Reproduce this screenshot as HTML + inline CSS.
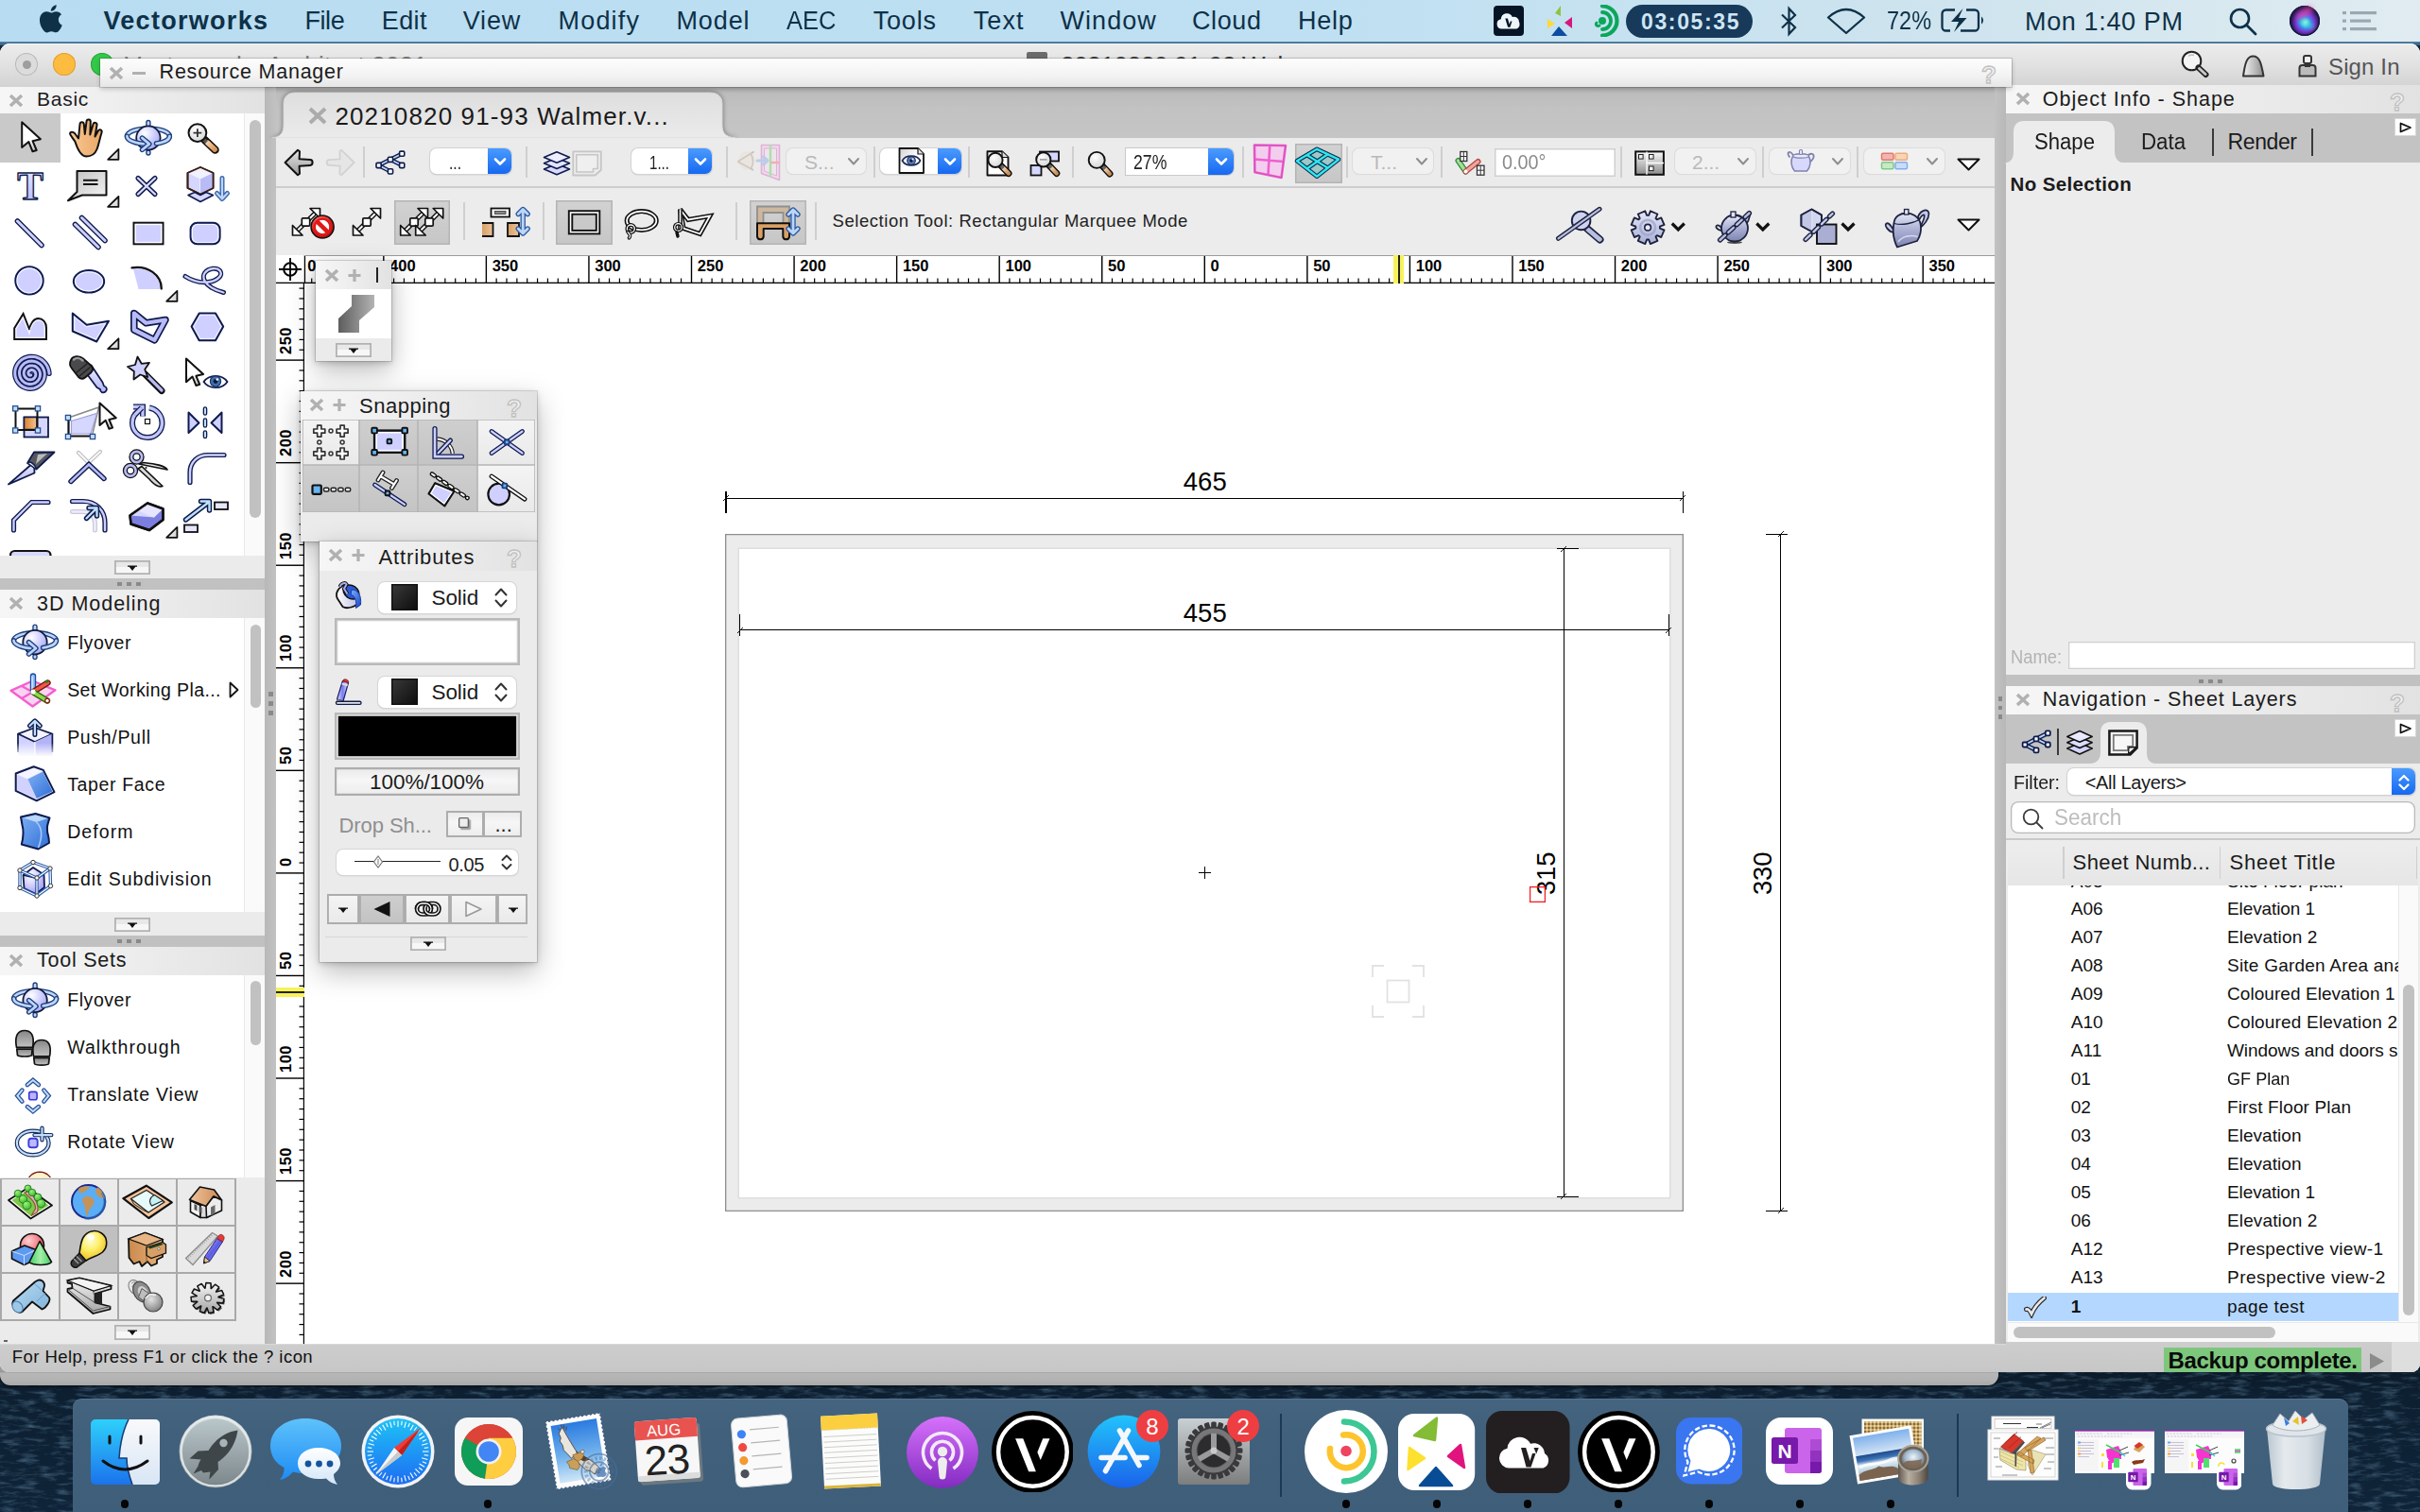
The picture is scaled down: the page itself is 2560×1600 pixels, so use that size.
<!DOCTYPE html><html><head><meta charset="utf-8"><title>Vectorworks</title><style>html,body{margin:0;padding:0;overflow:hidden}
body{width:2560px;height:1600px;overflow:hidden;position:relative;background:#13273a;font-family:"Liberation Sans",sans-serif;}
body div,body svg{position:absolute;box-sizing:border-box}
.t{white-space:nowrap}
</style></head><body>
<div style="left:0px;top:44px;width:2560px;height:4px;background:#3c6a8f;"></div>
<svg style="left:0;top:1440px" width="2560" height="160" viewBox="0 0 2560 160">
<defs><filter id="sea" x="0" y="0" width="100%" height="100%"><feTurbulence type="fractalNoise" baseFrequency="0.05 0.22" numOctaves="4" seed="4"/><feColorMatrix values="0 0 0 0 0.13  0 0 0 0 0.25  0 0 0 0 0.37  1.3 0 0 0 -0.62"/></filter>
<linearGradient id="seag" x1="0" x2="0" y1="0" y2="1"><stop offset="0" stop-color="#0a1826"/><stop offset="0.25" stop-color="#0d2032"/><stop offset="1" stop-color="#0f2438"/></linearGradient></defs>
<rect width="2560" height="160" fill="url(#seag)"/><rect width="2560" height="160" filter="url(#sea)"/></svg>
<div style="left:0px;top:0px;width:2560px;height:44px;background:linear-gradient(90deg,#b8dcf1 0%,#bfe0f2 55%,#cfe4ee 82%,#e0ecf1 100%);"></div>
<div style="left:0px;top:43.5px;width:2560px;height:1.5px;background:#5c89aa;"></div>
<svg style="left:41px;top:3px;" width="28" height="34" viewBox="0 0 28 34"><path fill="#0e3148" d="M20.9 18.1c0-3.3 2.7-4.9 2.8-5-1.5-2.2-3.9-2.5-4.8-2.6-2-.2-4 1.2-5 1.2-1 0-2.6-1.2-4.3-1.1-2.2 0-4.2 1.300-5.400 3.300-2.300 4-.600 9.900 1.600 13.100 1.100 1.600 2.400 3.400 4.100 3.300 1.700-.1 2.300-1.100 4.300-1.100 2 0 2.600 1.100 4.300 1 1.800 0 2.900-1.600 4-3.200 1.300-1.800 1.800-3.600 1.800-3.700-.100 0-3.400-1.300-3.400-5.200zM17.600 8.300c.900-1.100 1.500-2.600 1.300-4.100-1.300.1-2.900.900-3.800 2-.800.900-1.600 2.500-1.400 3.900 1.500.1 3-.700 3.900-1.800z" transform="translate(-2.5,-2.5) scale(1.12)"/></svg>
<div class="t" style="left:109.50px;top:9.44px;font-size:27px;line-height:27px;color:#0e3148;font-weight:700;letter-spacing:1.292px;">Vectorworks</div>
<div class="t" style="left:322.40px;top:9.44px;font-size:27px;line-height:27px;color:#0e3148;letter-spacing:-0.412px;">File</div>
<div class="t" style="left:403.80px;top:9.44px;font-size:27px;line-height:27px;color:#0e3148;letter-spacing:0.364px;">Edit</div>
<div class="t" style="left:489.70px;top:9.44px;font-size:27px;line-height:27px;color:#0e3148;letter-spacing:0.861px;">View</div>
<div class="t" style="left:590.50px;top:9.44px;font-size:27px;line-height:27px;color:#0e3148;letter-spacing:1.197px;">Modify</div>
<div class="t" style="left:715.50px;top:9.44px;font-size:27px;line-height:27px;color:#0e3148;letter-spacing:0.873px;">Model</div>
<div class="t" style="left:831.60px;top:9.44px;font-size:27px;line-height:27px;color:#0e3148;transform-origin:0 50%;transform:scaleX(0.9444);">AEC</div>
<div class="t" style="left:923.70px;top:9.44px;font-size:27px;line-height:27px;color:#0e3148;letter-spacing:0.814px;">Tools</div>
<div class="t" style="left:1029.70px;top:9.44px;font-size:27px;line-height:27px;color:#0e3148;letter-spacing:1.118px;">Text</div>
<div class="t" style="left:1121.60px;top:9.44px;font-size:27px;line-height:27px;color:#0e3148;letter-spacing:1.016px;">Window</div>
<div class="t" style="left:1261.00px;top:9.44px;font-size:27px;line-height:27px;color:#0e3148;letter-spacing:0.616px;">Cloud</div>
<div class="t" style="left:1373.00px;top:9.44px;font-size:27px;line-height:27px;color:#0e3148;letter-spacing:0.716px;">Help</div>
<svg style="left:1580px;top:6px;" width="32" height="32" viewBox="0 0 32 32"><rect width="32" height="32" rx="4" fill="#071425"/><path fill="#eef6fb" d="M8.500 24.500a5.200 5.200 0 0 1-.700-10.300 6.300 6.300 0 0 1 12-2.300 5.600 5.600 0 0 1 7.200 5.400 5.100 5.100 0 0 1-2.500 7.200z"/><path fill="#071425" d="M12.300 13.500h2.600l1.900 6.300 1-3.300h1.700l-2 6.200h-2.400z"/></svg>
<svg style="left:1636px;top:5px;" width="28" height="34" viewBox="0 0 28 34"><polygon points="9,9 15,1 15,12" fill="#8bc53f"/><polygon points="1,15 9,20 1,25" fill="#ffd83a"/><polygon points="27,13 27,25 19,19" fill="#d6187d"/><polygon points="13,23 22,33 5,33" fill="#0b4ea2"/></svg>
<svg style="left:1686px;top:5px;" width="30" height="34" viewBox="0 0 30 34"><g fill="none" stroke="#0aa75b" stroke-linecap="round"><path d="M9 1.500A15.500 15.500 0 0 1 9 32.500" stroke-width="4.200"/><path d="M9 8A9 9 0 0 1 9 26" stroke-width="3.800"/><path d="M3 19a2 2 0 0 0 3 3" stroke-width="3"/></g><circle cx="9" cy="17" r="4" fill="#0aa75b"/></svg>
<div style="left:1720px;top:5px;width:134px;height:35px;background:#173a5b;border-radius:17.5px;"></div>
<div class="t" style="left:1736.00px;top:12.13px;font-size:23px;line-height:23px;color:#cfe5f4;font-weight:700;letter-spacing:1.635px;">03:05:35</div>
<svg style="left:1882px;top:6px;" width="22" height="34" viewBox="0 0 22 34"><path d="M3 9.500 17 23 10.500 30V3L17 10 3 23.500" fill="none" stroke="#0e3148" stroke-width="2.200" stroke-linejoin="miter"/></svg>
<svg style="left:1932px;top:8px;" width="42" height="29" viewBox="0 0 42 29"><path d="M2 10.500Q21-6.500 40 10.500L21 27z" fill="none" stroke="#0e3148" stroke-width="2.300" stroke-linejoin="round"/></svg>
<div class="t" style="left:1996.40px;top:9.44px;font-size:27px;line-height:27px;color:#0e3148;transform-origin:0 50%;transform:scaleX(0.8711);">72%</div>
<svg style="left:2052px;top:9px;" width="50" height="26" viewBox="0 0 50 26"><g fill="none" stroke="#0e3148" stroke-width="2.300"><path d="M16 1.500H6.500a4 4 0 0 0-4 4v14a4 4 0 0 0 4 4H11"/><path d="M28 1.500h9a4 4 0 0 1 4 4v14a4 4 0 0 1-4 4H22"/></g><path d="M24.500 0 12 14h8l-5 11 13.500-15h-8.500z" fill="#0e3148"/><path d="M44 8.500a5 5 0 0 1 0 8z" fill="#0e3148"/></svg>
<div class="t" style="left:2142.00px;top:9.54px;font-size:27px;line-height:27px;color:#0e3148;letter-spacing:0.642px;">Mon 1:40 PM</div>
<svg style="left:2357px;top:7px;" width="32" height="32" viewBox="0 0 32 32"><circle cx="12.500" cy="12.500" r="9.500" fill="none" stroke="#0e3148" stroke-width="2.600"/><path d="M19.500 19.500 29 29" stroke="#0e3148" stroke-width="2.800" stroke-linecap="round"/></svg>
<div style="left:2422px;top:5.500px;width:32px;height:32px;border-radius:50%;background:radial-gradient(circle at 52% 56%,#f4ffff 0,#7deaf0 9%,#3b86f2 24%,#7a36d0 40%,#2a1a5c 60%,#0d0f26 100%);box-shadow:inset 0 0 0 1.500px #15183a"></div>
<div style="left:2427px;top:9px;width:22px;height:9px;border-radius:50%;background:#ff4fa3;opacity:.55;filter:blur(2.500px);transform:rotate(-35deg)"></div>
<div style="left:2431px;top:22px;width:18px;height:7px;border-radius:50%;background:#35e0c8;opacity:.6;filter:blur(2px);transform:rotate(25deg)"></div>
<svg style="left:2477px;top:11px;" width="38" height="22" viewBox="0 0 38 22"><g fill="#9aa8b1"><rect x="1" y="1" width="4" height="3.200"/><rect x="9" y="1" width="28" height="3.200"/><rect x="1" y="9.500" width="4" height="3.200"/><rect x="9" y="9.500" width="22" height="3.200"/><rect x="1" y="18" width="4" height="3.200"/><rect x="9" y="18" width="28" height="3.200"/></g></svg>
<div style="left:0px;top:1440px;width:2114px;height:26px;background:linear-gradient(#9a9a9a 0,#9a9a9a 46%,#b6b6b6 50%,#b2b2b2 80%,#a8a8a8);border-radius:0 0 11px 11px;box-shadow:0 1px 3px rgba(0,0,0,.6);"></div>
<div style="left:0px;top:46px;width:2560px;height:1406px;background:#ececec;border-radius:11px 11px 9px 9px;overflow:hidden;"></div>
<div style="left:0px;top:46px;width:2560px;height:46px;background:linear-gradient(#ececec,#e4e4e4 40%,#d3d3d3);border-radius:11px 11px 0 0;box-shadow:inset 0 1px 0 #f6f6f6;"></div>
<div style="left:16px;top:56px;width:24px;height:24px;border-radius:50%;background:#dcdcdc;box-shadow:inset 0 0 0 1px #b9b9b9;"></div>
<div style="left:23.5px;top:63.5px;width:9px;height:9px;border-radius:50%;background:#9e9e9e;"></div>
<div style="left:56px;top:56px;width:24px;height:24px;border-radius:50%;background:#fdbc40;box-shadow:inset 0 0 0 1px #dea035;"></div>
<div style="left:96px;top:56px;width:24px;height:24px;border-radius:50%;background:#34c84a;box-shadow:inset 0 0 0 1px #2aa638;"></div>
<div class="t" style="left:132.00px;top:55.99px;font-size:26px;line-height:26px;color:#7d7d7d;letter-spacing:0.255px;">Vectorworks Architect 2021</div>
<div class="t" style="left:1122.00px;top:55.99px;font-size:26px;line-height:26px;color:#3c3c3c;letter-spacing:-0.307px;">20210820 91-93 Wal...</div>
<div style="left:1086px;top:55px;width:22px;height:28px;background:#6b6b6b;border-radius:2px;"></div>
<svg style="left:2306px;top:52px;" width="34" height="32" viewBox="0 0 34 32"><circle cx="12.500" cy="12.500" r="9.800" fill="#f4f4f4" stroke="#222" stroke-width="2"/><path d="M9 7.500a6 6 0 0 1 6-1" stroke="#bbb" stroke-width="1.500" fill="none"/><path d="M19.500 19.500 27.500 27" stroke="#222" stroke-width="6" stroke-linecap="round"/><path d="M20.500 20.500 27 26.500" stroke="#c9c9c9" stroke-width="3" stroke-linecap="round"/></svg>
<svg style="left:2371px;top:58px;" width="26" height="24" viewBox="0 0 26 24"><defs><linearGradient id="bellg" x1="0" x2="1"><stop offset="0" stop-color="#f2f2f2"/><stop offset=".55" stop-color="#bdbdbd"/><stop offset="1" stop-color="#8d8d8d"/></linearGradient></defs><path d="M2 22.500C4 8 6 1.500 12.500 1.500S21 8 23.500 22.500z" fill="url(#bellg)" stroke="#333" stroke-width="2" stroke-linejoin="round"/></svg>
<svg style="left:2431px;top:58px;" width="20" height="24" viewBox="0 0 20 24"><rect x="6" y="1" width="8" height="8" rx="2" fill="#eee" stroke="#333" stroke-width="2"/><path d="M1.500 22.500V14a3 3 0 0 1 3-3h11a3 3 0 0 1 3 3v8.500z" fill="#bbb" stroke="#333" stroke-width="2"/><rect x="7" y="9" width="6" height="4" fill="#333"/></svg>
<div class="t" style="left:2463.00px;top:58.68px;font-size:24px;line-height:24px;color:#555;letter-spacing:0.133px;">Sign In</div>
<div style="left:0px;top:92px;width:280px;height:1330px;background:#ebebeb;"></div>
<div style="left:280px;top:92px;width:12px;height:1330px;background:linear-gradient(90deg,#b8b8b8,#c2c2c2);"></div>
<div style="left:292px;top:92px;width:1818px;height:54px;background:linear-gradient(#acacac,#bcbcbc 12%,#c2c2c2 40%,#c5c5c5);"></div>
<div style="left:2110px;top:92px;width:12px;height:1330px;background:linear-gradient(90deg,#c2c2c2,#b8b8b8);"></div>
<div style="left:2122px;top:90px;width:438px;height:1332px;background:#ececec;"></div>
<div style="left:0px;top:1422px;width:2560px;height:30px;background:linear-gradient(#cdcdcd,#c7c7c7);box-shadow:inset 0 1px 0 #d9d9d9;border-radius:0 0 9px 9px;"></div>
<div class="t" style="left:12.70px;top:1427.34px;font-size:18.5px;line-height:18.5px;color:#111;letter-spacing:0.452px;">For Help, press F1 or click the ? icon</div>
<svg style="left:280px;top:90px;overflow:hidden" width="506" height="56" viewBox="-8 -6 506 56">
<defs><linearGradient id="tabg" x1="0" x2="0" y1="0" y2="1"><stop offset="0" stop-color="#dedede"/><stop offset="1" stop-color="#ebebeb"/></linearGradient></defs>
<path d="M0 50C9 49 12 44 12 36V14C12 6 17 2 24 2H463C471 2 476 6 476 14V36C476 44 479 49 490 50z" fill="url(#tabg)" stroke="#d9d9d9" stroke-width="1" style="filter:drop-shadow(0 0 2.500px rgba(0,0,0,.45))"/></svg>
<svg style="left:326px;top:113px;" width="20" height="19" viewBox="0 0 20 19"><path d="M2 2 18 17M18 2 2 17" stroke="#ababab" stroke-width="4" /></svg>
<div class="t" style="left:354.40px;top:109.99px;font-size:26px;line-height:26px;color:#1a1a1a;letter-spacing:1.145px;">20210820 91-93 Walmer.v...</div>
<div style="left:292px;top:146px;width:1818px;height:52px;background:#ebebeb;"></div>
<div style="left:292px;top:196.5px;width:1818px;height:2px;background:#cdcdcd;"></div>
<div style="left:292px;top:198.5px;width:1818px;height:72px;background:#ececec;"></div>
<div class="t" style="left:880.60px;top:225.34px;font-size:18.5px;line-height:18.5px;color:#222;letter-spacing:0.545px;">Selection Tool: Rectangular Marquee Mode</div>
<div style="left:383.7px;top:154.5px;width:2px;height:33px;background:#cfcfcf;"></div>
<div style="left:556px;top:154.5px;width:2px;height:33px;background:#cfcfcf;"></div>
<div style="left:768.3px;top:154.5px;width:2px;height:33px;background:#cfcfcf;"></div>
<div style="left:923.8px;top:154.5px;width:2px;height:33px;background:#cfcfcf;"></div>
<div style="left:1024.3px;top:154.5px;width:2px;height:33px;background:#cfcfcf;"></div>
<div style="left:1134px;top:154.5px;width:2px;height:33px;background:#cfcfcf;"></div>
<div style="left:1314px;top:154.5px;width:2px;height:33px;background:#cfcfcf;"></div>
<div style="left:1424px;top:154.5px;width:2px;height:33px;background:#cfcfcf;"></div>
<div style="left:1524px;top:154.5px;width:2px;height:33px;background:#cfcfcf;"></div>
<div style="left:1714px;top:154.5px;width:2px;height:33px;background:#cfcfcf;"></div>
<div style="left:1864px;top:154.5px;width:2px;height:33px;background:#cfcfcf;"></div>
<div style="left:1964.4px;top:154.5px;width:2px;height:33px;background:#cfcfcf;"></div>
<div style="left:490px;top:214px;width:2px;height:40px;background:#cfcfcf;"></div>
<div style="left:574.3px;top:214px;width:2px;height:40px;background:#cfcfcf;"></div>
<div style="left:778.2px;top:214px;width:2px;height:40px;background:#cfcfcf;"></div>
<div style="left:862px;top:214px;width:2px;height:40px;background:#cfcfcf;"></div>
<div style="left:455.4px;top:156.5px;width:85.6px;height:27.3px;background:#fff;border-radius:7px;box-shadow:0 0 0 1px #d2d2d2,0 1px 1.500px rgba(0,0,0,.25);overflow:hidden;"><div style="left:60.8px;top:0;width:24.8px;height:27.3px;background:linear-gradient(#4a9bff,#1668f0)"></div></div>
<svg style="left:521.6px;top:165.65px;" width="14" height="10" viewBox="0 0 14 10"><path d="M2 2.500 7 7.500 12 2.500" fill="none" stroke="#fff" stroke-width="2.600" stroke-linecap="round" stroke-linejoin="round"/></svg>
<div class="t" style="left:475.00px;top:160.72px;font-size:21px;line-height:21px;color:#222;transform-origin:0 50%;transform:scaleX(0.7436);">...</div>
<div style="left:667.6px;top:156.5px;width:85.6px;height:27.3px;background:#fff;border-radius:7px;box-shadow:0 0 0 1px #d2d2d2,0 1px 1.500px rgba(0,0,0,.25);overflow:hidden;"><div style="left:60.8px;top:0;width:24.8px;height:27.3px;background:linear-gradient(#4a9bff,#1668f0)"></div></div>
<svg style="left:733.8px;top:165.65px;" width="14" height="10" viewBox="0 0 14 10"><path d="M2 2.500 7 7.500 12 2.500" fill="none" stroke="#fff" stroke-width="2.600" stroke-linecap="round" stroke-linejoin="round"/></svg>
<div class="t" style="left:687.00px;top:160.72px;font-size:21px;line-height:21px;color:#222;transform-origin:0 50%;transform:scaleX(0.7194);">1...</div>
<div style="left:931.4px;top:156.5px;width:85.5px;height:27.3px;background:#fff;border-radius:7px;box-shadow:0 0 0 1px #d2d2d2,0 1px 1.500px rgba(0,0,0,.25);overflow:hidden;"><div style="left:60.9px;top:0;width:24.6px;height:27.3px;background:linear-gradient(#4a9bff,#1668f0)"></div></div>
<svg style="left:997.6px;top:165.65px;" width="14" height="10" viewBox="0 0 14 10"><path d="M2 2.500 7 7.500 12 2.500" fill="none" stroke="#fff" stroke-width="2.600" stroke-linecap="round" stroke-linejoin="round"/></svg>
<div style="left:832px;top:156.5px;width:84.3px;height:27.1px;background:#f1f1f1;border-radius:7px;box-shadow:0 0 0 1px #dcdcdc,0 1px 1px rgba(0,0,0,.10);"></div>
<svg style="left:896.3px;top:166.05px;" width="14" height="10" viewBox="0 0 14 10"><path d="M2 2 7 7.500 12 2" fill="none" stroke="#8e8e8e" stroke-width="2" stroke-linecap="round" stroke-linejoin="round"/></svg>
<div class="t" style="left:851.00px;top:160.72px;font-size:21px;line-height:21px;color:#b9b9b9;">S...</div>
<div style="left:1431.4px;top:156.5px;width:85.1px;height:27.1px;background:#f1f1f1;border-radius:7px;box-shadow:0 0 0 1px #dcdcdc,0 1px 1px rgba(0,0,0,.10);"></div>
<svg style="left:1496.5px;top:166.05px;" width="14" height="10" viewBox="0 0 14 10"><path d="M2 2 7 7.500 12 2" fill="none" stroke="#8e8e8e" stroke-width="2" stroke-linecap="round" stroke-linejoin="round"/></svg>
<div class="t" style="left:1450.00px;top:160.72px;font-size:21px;line-height:21px;color:#b9b9b9;">T...</div>
<div style="left:1771.5px;top:156.5px;width:85px;height:27.1px;background:#f1f1f1;border-radius:7px;box-shadow:0 0 0 1px #dcdcdc,0 1px 1px rgba(0,0,0,.10);"></div>
<svg style="left:1836.5px;top:166.05px;" width="14" height="10" viewBox="0 0 14 10"><path d="M2 2 7 7.500 12 2" fill="none" stroke="#8e8e8e" stroke-width="2" stroke-linecap="round" stroke-linejoin="round"/></svg>
<div class="t" style="left:1790.00px;top:160.72px;font-size:21px;line-height:21px;color:#b9b9b9;">2...</div>
<div style="left:1871.5px;top:156.5px;width:85.2px;height:27.1px;background:#f1f1f1;border-radius:7px;box-shadow:0 0 0 1px #dcdcdc,0 1px 1px rgba(0,0,0,.10);"></div>
<svg style="left:1936.7px;top:166.05px;" width="14" height="10" viewBox="0 0 14 10"><path d="M2 2 7 7.500 12 2" fill="none" stroke="#8e8e8e" stroke-width="2" stroke-linecap="round" stroke-linejoin="round"/></svg>
<div style="left:1971.5px;top:156.5px;width:85.2px;height:27.1px;background:#f1f1f1;border-radius:7px;box-shadow:0 0 0 1px #dcdcdc,0 1px 1px rgba(0,0,0,.10);"></div>
<svg style="left:2036.7px;top:166.05px;" width="14" height="10" viewBox="0 0 14 10"><path d="M2 2 7 7.500 12 2" fill="none" stroke="#8e8e8e" stroke-width="2" stroke-linecap="round" stroke-linejoin="round"/></svg>
<div style="left:1191px;top:157px;width:114px;height:27.5px;background:#fff;box-shadow:0 0 0 1px #c9c9c9;border-radius:0 7px 7px 0;overflow:hidden;"><div style="left:87px;top:0;width:27px;height:27.500px;background:linear-gradient(#4a9bff,#1668f0)"></div></div>
<svg style="left:1284.5px;top:166px;" width="14" height="10" viewBox="0 0 14 10"><path d="M2 2.500 7 7.500 12 2.500" fill="none" stroke="#fff" stroke-width="2.600" stroke-linecap="round" stroke-linejoin="round"/></svg>
<div class="t" style="left:1198.60px;top:160.68px;font-size:22px;line-height:22px;color:#222;transform-origin:0 50%;transform:scaleX(0.8035);">27%</div>
<div style="left:1581.3px;top:157px;width:127.5px;height:30px;background:#fff;box-shadow:inset 0 0 0 1.500px #d0d0d0;"></div>
<div class="t" style="left:1588.50px;top:161.38px;font-size:22px;line-height:22px;color:#8a8a8a;transform-origin:0 50%;transform:scaleX(0.9004);">0.00°</div>
<svg style="left:2070px;top:166.5px;" width="25" height="14" viewBox="0 0 25 14"><path d="M1.500 1.500H23.500L12.500 12.500z" fill="#fff" stroke="#111" stroke-width="2" stroke-linejoin="round"/></svg>
<svg style="left:2070px;top:230.7px;" width="25" height="14" viewBox="0 0 25 14"><path d="M1.500 1.500H23.500L12.500 12.500z" fill="#fff" stroke="#111" stroke-width="2" stroke-linejoin="round"/></svg>
<div style="left:416.5px;top:211.6px;width:59.5px;height:47.1px;background:linear-gradient(#d2d2d2,#c6c6c6);box-shadow:inset 0 0 0 1.500px #b4b4b4;"></div>
<div style="left:588.4px;top:211.6px;width:59.6px;height:47.1px;background:linear-gradient(#d2d2d2,#c6c6c6);box-shadow:inset 0 0 0 1.500px #b4b4b4;"></div>
<div style="left:793px;top:211.6px;width:59.5px;height:47.1px;background:linear-gradient(#d2d2d2,#c6c6c6);box-shadow:inset 0 0 0 1.500px #b4b4b4;"></div>
<div style="left:1370px;top:152px;width:50px;height:41.7px;background:linear-gradient(#d2d2d2,#c6c6c6);box-shadow:inset 0 0 0 1.500px #b4b4b4;"></div>
<div style="left:322px;top:300px;width:1788px;height:1122px;background:#fff;"></div>
<div style="left:292px;top:270px;width:1818px;height:30px;background:#fff;"></div>
<div style="left:292px;top:270px;width:30px;height:30px;background:#fff;"></div>
<svg style="left:292px;top:270px;" width="1818" height="30" viewBox="0 0 1818 30"><rect x="37.13" y="24.500" width="1.2" height="5.500" fill="#000"/><rect x="47.98" y="24.500" width="1.2" height="5.500" fill="#000"/><rect x="58.84" y="24.500" width="1.2" height="5.500" fill="#000"/><rect x="69.70" y="24.500" width="1.2" height="5.500" fill="#000"/><rect x="80.55" y="24.500" width="1.2" height="5.500" fill="#000"/><rect x="91.41" y="24.500" width="1.2" height="5.500" fill="#000"/><rect x="102.26" y="24.500" width="1.2" height="5.500" fill="#000"/><rect x="113.12" y="0" width="1.4" height="30" fill="#000"/><rect x="123.98" y="24.500" width="1.2" height="5.500" fill="#000"/><rect x="134.83" y="24.500" width="1.2" height="5.500" fill="#000"/><rect x="145.69" y="24.500" width="1.2" height="5.500" fill="#000"/><rect x="156.54" y="24.500" width="1.2" height="5.500" fill="#000"/><rect x="167.40" y="24.500" width="1.2" height="5.500" fill="#000"/><rect x="178.26" y="24.500" width="1.2" height="5.500" fill="#000"/><rect x="189.11" y="24.500" width="1.2" height="5.500" fill="#000"/><rect x="199.97" y="24.500" width="1.2" height="5.500" fill="#000"/><rect x="210.82" y="24.500" width="1.2" height="5.500" fill="#000"/><rect x="221.68" y="0" width="1.4" height="30" fill="#000"/><rect x="232.54" y="24.500" width="1.2" height="5.500" fill="#000"/><rect x="243.39" y="24.500" width="1.2" height="5.500" fill="#000"/><rect x="254.25" y="24.500" width="1.2" height="5.500" fill="#000"/><rect x="265.10" y="24.500" width="1.2" height="5.500" fill="#000"/><rect x="275.96" y="24.500" width="1.2" height="5.500" fill="#000"/><rect x="286.82" y="24.500" width="1.2" height="5.500" fill="#000"/><rect x="297.67" y="24.500" width="1.2" height="5.500" fill="#000"/><rect x="308.53" y="24.500" width="1.2" height="5.500" fill="#000"/><rect x="319.38" y="24.500" width="1.2" height="5.500" fill="#000"/><rect x="330.24" y="0" width="1.4" height="30" fill="#000"/><rect x="341.10" y="24.500" width="1.2" height="5.500" fill="#000"/><rect x="351.95" y="24.500" width="1.2" height="5.500" fill="#000"/><rect x="362.81" y="24.500" width="1.2" height="5.500" fill="#000"/><rect x="373.66" y="24.500" width="1.2" height="5.500" fill="#000"/><rect x="384.52" y="24.500" width="1.2" height="5.500" fill="#000"/><rect x="395.38" y="24.500" width="1.2" height="5.500" fill="#000"/><rect x="406.23" y="24.500" width="1.2" height="5.500" fill="#000"/><rect x="417.09" y="24.500" width="1.2" height="5.500" fill="#000"/><rect x="427.94" y="24.500" width="1.2" height="5.500" fill="#000"/><rect x="438.80" y="0" width="1.4" height="30" fill="#000"/><rect x="449.66" y="24.500" width="1.2" height="5.500" fill="#000"/><rect x="460.51" y="24.500" width="1.2" height="5.500" fill="#000"/><rect x="471.37" y="24.500" width="1.2" height="5.500" fill="#000"/><rect x="482.22" y="24.500" width="1.2" height="5.500" fill="#000"/><rect x="493.08" y="24.500" width="1.2" height="5.500" fill="#000"/><rect x="503.94" y="24.500" width="1.2" height="5.500" fill="#000"/><rect x="514.79" y="24.500" width="1.2" height="5.500" fill="#000"/><rect x="525.65" y="24.500" width="1.2" height="5.500" fill="#000"/><rect x="536.50" y="24.500" width="1.2" height="5.500" fill="#000"/><rect x="547.36" y="0" width="1.4" height="30" fill="#000"/><rect x="558.22" y="24.500" width="1.2" height="5.500" fill="#000"/><rect x="569.07" y="24.500" width="1.2" height="5.500" fill="#000"/><rect x="579.93" y="24.500" width="1.2" height="5.500" fill="#000"/><rect x="590.78" y="24.500" width="1.2" height="5.500" fill="#000"/><rect x="601.64" y="24.500" width="1.2" height="5.500" fill="#000"/><rect x="612.50" y="24.500" width="1.2" height="5.500" fill="#000"/><rect x="623.35" y="24.500" width="1.2" height="5.500" fill="#000"/><rect x="634.21" y="24.500" width="1.2" height="5.500" fill="#000"/><rect x="645.06" y="24.500" width="1.2" height="5.500" fill="#000"/><rect x="655.92" y="0" width="1.4" height="30" fill="#000"/><rect x="666.78" y="24.500" width="1.2" height="5.500" fill="#000"/><rect x="677.63" y="24.500" width="1.2" height="5.500" fill="#000"/><rect x="688.49" y="24.500" width="1.2" height="5.500" fill="#000"/><rect x="699.34" y="24.500" width="1.2" height="5.500" fill="#000"/><rect x="710.20" y="24.500" width="1.2" height="5.500" fill="#000"/><rect x="721.06" y="24.500" width="1.2" height="5.500" fill="#000"/><rect x="731.91" y="24.500" width="1.2" height="5.500" fill="#000"/><rect x="742.77" y="24.500" width="1.2" height="5.500" fill="#000"/><rect x="753.62" y="24.500" width="1.2" height="5.500" fill="#000"/><rect x="764.48" y="0" width="1.4" height="30" fill="#000"/><rect x="775.34" y="24.500" width="1.2" height="5.500" fill="#000"/><rect x="786.19" y="24.500" width="1.2" height="5.500" fill="#000"/><rect x="797.05" y="24.500" width="1.2" height="5.500" fill="#000"/><rect x="807.90" y="24.500" width="1.2" height="5.500" fill="#000"/><rect x="818.76" y="24.500" width="1.2" height="5.500" fill="#000"/><rect x="829.62" y="24.500" width="1.2" height="5.500" fill="#000"/><rect x="840.47" y="24.500" width="1.2" height="5.500" fill="#000"/><rect x="851.33" y="24.500" width="1.2" height="5.500" fill="#000"/><rect x="862.18" y="24.500" width="1.2" height="5.500" fill="#000"/><rect x="873.04" y="0" width="1.4" height="30" fill="#000"/><rect x="883.90" y="24.500" width="1.2" height="5.500" fill="#000"/><rect x="894.75" y="24.500" width="1.2" height="5.500" fill="#000"/><rect x="905.61" y="24.500" width="1.2" height="5.500" fill="#000"/><rect x="916.46" y="24.500" width="1.2" height="5.500" fill="#000"/><rect x="927.32" y="24.500" width="1.2" height="5.500" fill="#000"/><rect x="938.18" y="24.500" width="1.2" height="5.500" fill="#000"/><rect x="949.03" y="24.500" width="1.2" height="5.500" fill="#000"/><rect x="959.89" y="24.500" width="1.2" height="5.500" fill="#000"/><rect x="970.74" y="24.500" width="1.2" height="5.500" fill="#000"/><rect x="981.60" y="0" width="1.4" height="30" fill="#000"/><rect x="992.46" y="24.500" width="1.2" height="5.500" fill="#000"/><rect x="1003.31" y="24.500" width="1.2" height="5.500" fill="#000"/><rect x="1014.17" y="24.500" width="1.2" height="5.500" fill="#000"/><rect x="1025.02" y="24.500" width="1.2" height="5.500" fill="#000"/><rect x="1035.88" y="24.500" width="1.2" height="5.500" fill="#000"/><rect x="1046.74" y="24.500" width="1.2" height="5.500" fill="#000"/><rect x="1057.59" y="24.500" width="1.2" height="5.500" fill="#000"/><rect x="1068.45" y="24.500" width="1.2" height="5.500" fill="#000"/><rect x="1079.30" y="24.500" width="1.2" height="5.500" fill="#000"/><rect x="1090.16" y="0" width="1.4" height="30" fill="#000"/><rect x="1101.02" y="24.500" width="1.2" height="5.500" fill="#000"/><rect x="1111.87" y="24.500" width="1.2" height="5.500" fill="#000"/><rect x="1122.73" y="24.500" width="1.2" height="5.500" fill="#000"/><rect x="1133.58" y="24.500" width="1.2" height="5.500" fill="#000"/><rect x="1144.44" y="24.500" width="1.2" height="5.500" fill="#000"/><rect x="1155.30" y="24.500" width="1.2" height="5.500" fill="#000"/><rect x="1166.15" y="24.500" width="1.2" height="5.500" fill="#000"/><rect x="1177.01" y="24.500" width="1.2" height="5.500" fill="#000"/><rect x="1187.86" y="24.500" width="1.2" height="5.500" fill="#000"/><rect x="1198.72" y="0" width="1.4" height="30" fill="#000"/><rect x="1209.58" y="24.500" width="1.2" height="5.500" fill="#000"/><rect x="1220.43" y="24.500" width="1.2" height="5.500" fill="#000"/><rect x="1231.29" y="24.500" width="1.2" height="5.500" fill="#000"/><rect x="1242.14" y="24.500" width="1.2" height="5.500" fill="#000"/><rect x="1253.00" y="24.500" width="1.2" height="5.500" fill="#000"/><rect x="1263.86" y="24.500" width="1.2" height="5.500" fill="#000"/><rect x="1274.71" y="24.500" width="1.2" height="5.500" fill="#000"/><rect x="1285.57" y="24.500" width="1.2" height="5.500" fill="#000"/><rect x="1296.42" y="24.500" width="1.2" height="5.500" fill="#000"/><rect x="1307.28" y="0" width="1.4" height="30" fill="#000"/><rect x="1318.14" y="24.500" width="1.2" height="5.500" fill="#000"/><rect x="1328.99" y="24.500" width="1.2" height="5.500" fill="#000"/><rect x="1339.85" y="24.500" width="1.2" height="5.500" fill="#000"/><rect x="1350.70" y="24.500" width="1.2" height="5.500" fill="#000"/><rect x="1361.56" y="24.500" width="1.2" height="5.500" fill="#000"/><rect x="1372.42" y="24.500" width="1.2" height="5.500" fill="#000"/><rect x="1383.27" y="24.500" width="1.2" height="5.500" fill="#000"/><rect x="1394.13" y="24.500" width="1.2" height="5.500" fill="#000"/><rect x="1404.98" y="24.500" width="1.2" height="5.500" fill="#000"/><rect x="1415.84" y="0" width="1.4" height="30" fill="#000"/><rect x="1426.70" y="24.500" width="1.2" height="5.500" fill="#000"/><rect x="1437.55" y="24.500" width="1.2" height="5.500" fill="#000"/><rect x="1448.41" y="24.500" width="1.2" height="5.500" fill="#000"/><rect x="1459.26" y="24.500" width="1.2" height="5.500" fill="#000"/><rect x="1470.12" y="24.500" width="1.2" height="5.500" fill="#000"/><rect x="1480.98" y="24.500" width="1.2" height="5.500" fill="#000"/><rect x="1491.83" y="24.500" width="1.2" height="5.500" fill="#000"/><rect x="1502.69" y="24.500" width="1.2" height="5.500" fill="#000"/><rect x="1513.54" y="24.500" width="1.2" height="5.500" fill="#000"/><rect x="1524.40" y="0" width="1.4" height="30" fill="#000"/><rect x="1535.26" y="24.500" width="1.2" height="5.500" fill="#000"/><rect x="1546.11" y="24.500" width="1.2" height="5.500" fill="#000"/><rect x="1556.97" y="24.500" width="1.2" height="5.500" fill="#000"/><rect x="1567.82" y="24.500" width="1.2" height="5.500" fill="#000"/><rect x="1578.68" y="24.500" width="1.2" height="5.500" fill="#000"/><rect x="1589.54" y="24.500" width="1.2" height="5.500" fill="#000"/><rect x="1600.39" y="24.500" width="1.2" height="5.500" fill="#000"/><rect x="1611.25" y="24.500" width="1.2" height="5.500" fill="#000"/><rect x="1622.10" y="24.500" width="1.2" height="5.500" fill="#000"/><rect x="1632.96" y="0" width="1.4" height="30" fill="#000"/><rect x="1643.82" y="24.500" width="1.2" height="5.500" fill="#000"/><rect x="1654.67" y="24.500" width="1.2" height="5.500" fill="#000"/><rect x="1665.53" y="24.500" width="1.2" height="5.500" fill="#000"/><rect x="1676.38" y="24.500" width="1.2" height="5.500" fill="#000"/><rect x="1687.24" y="24.500" width="1.2" height="5.500" fill="#000"/><rect x="1698.10" y="24.500" width="1.2" height="5.500" fill="#000"/><rect x="1708.95" y="24.500" width="1.2" height="5.500" fill="#000"/><rect x="1719.81" y="24.500" width="1.2" height="5.500" fill="#000"/><rect x="1730.66" y="24.500" width="1.2" height="5.500" fill="#000"/><rect x="1741.52" y="0" width="1.4" height="30" fill="#000"/><rect x="1752.38" y="24.500" width="1.2" height="5.500" fill="#000"/><rect x="1763.23" y="24.500" width="1.2" height="5.500" fill="#000"/><rect x="1774.09" y="24.500" width="1.2" height="5.500" fill="#000"/><rect x="1784.94" y="24.500" width="1.2" height="5.500" fill="#000"/><rect x="1795.80" y="24.500" width="1.2" height="5.500" fill="#000"/><rect x="1806.66" y="24.500" width="1.2" height="5.500" fill="#000"/><rect x="0" y="28.700" width="1818" height="1.400" fill="#000"/><rect x="29.800" y="0" width="1.300" height="30" fill="#000"/><rect x="30" y="0" width="1788" height="1" fill="#9a9a9a"/></svg>
<div class="t" style="left:412.12px;top:272.83px;font-size:16.5px;line-height:16.5px;color:#000;font-weight:700;">400</div>
<div class="t" style="left:520.68px;top:272.83px;font-size:16.5px;line-height:16.5px;color:#000;font-weight:700;">350</div>
<div class="t" style="left:629.24px;top:272.83px;font-size:16.5px;line-height:16.5px;color:#000;font-weight:700;">300</div>
<div class="t" style="left:737.80px;top:272.83px;font-size:16.5px;line-height:16.5px;color:#000;font-weight:700;">250</div>
<div class="t" style="left:846.36px;top:272.83px;font-size:16.5px;line-height:16.5px;color:#000;font-weight:700;">200</div>
<div class="t" style="left:954.92px;top:272.83px;font-size:16.5px;line-height:16.5px;color:#000;font-weight:700;">150</div>
<div class="t" style="left:1063.48px;top:272.83px;font-size:16.5px;line-height:16.5px;color:#000;font-weight:700;">100</div>
<div class="t" style="left:1172.04px;top:272.83px;font-size:16.5px;line-height:16.5px;color:#000;font-weight:700;">50</div>
<div class="t" style="left:1280.60px;top:272.83px;font-size:16.5px;line-height:16.5px;color:#000;font-weight:700;">0</div>
<div class="t" style="left:1389.16px;top:272.83px;font-size:16.5px;line-height:16.5px;color:#000;font-weight:700;">50</div>
<div class="t" style="left:1497.72px;top:272.83px;font-size:16.5px;line-height:16.5px;color:#000;font-weight:700;">100</div>
<div class="t" style="left:1606.28px;top:272.83px;font-size:16.5px;line-height:16.5px;color:#000;font-weight:700;">150</div>
<div class="t" style="left:1714.84px;top:272.83px;font-size:16.5px;line-height:16.5px;color:#000;font-weight:700;">200</div>
<div class="t" style="left:1823.40px;top:272.83px;font-size:16.5px;line-height:16.5px;color:#000;font-weight:700;">250</div>
<div class="t" style="left:1931.96px;top:272.83px;font-size:16.5px;line-height:16.5px;color:#000;font-weight:700;">300</div>
<div class="t" style="left:2040.52px;top:272.83px;font-size:16.5px;line-height:16.5px;color:#000;font-weight:700;">350</div>
<div class="t" style="left:325.20px;top:272.83px;font-size:16.5px;line-height:16.5px;color:#000;font-weight:700;">0</div>
<svg style="left:295px;top:273px;" width="24" height="24" viewBox="0 0 24 24"><circle cx="12" cy="12" r="6.800" fill="none" stroke="#000" stroke-width="2"/><path d="M12 0V24M0 12H24" stroke="#000" stroke-width="1.800"/></svg>
<div style="left:1474.3px;top:270px;width:11px;height:30px;background:#f7f25a;"></div>
<div style="left:1479px;top:270px;width:1.6px;height:30px;background:#222;"></div>
<div style="left:292px;top:300px;width:30px;height:1122px;background:#fff;"></div>
<svg style="left:292px;top:300px;" width="30" height="1122" viewBox="0 0 30 1122"><rect x="24.500" y="4.51" width="5.500" height="1.200" fill="#000"/><rect x="24.500" y="15.36" width="5.500" height="1.200" fill="#000"/><rect x="24.500" y="26.22" width="5.500" height="1.200" fill="#000"/><rect x="24.500" y="37.08" width="5.500" height="1.200" fill="#000"/><rect x="24.500" y="47.93" width="5.500" height="1.200" fill="#000"/><rect x="24.500" y="58.79" width="5.500" height="1.200" fill="#000"/><rect x="24.500" y="69.64" width="5.500" height="1.200" fill="#000"/><rect x="0" y="80.40" width="30" height="1.4" fill="#000"/><rect x="24.500" y="91.36" width="5.500" height="1.200" fill="#000"/><rect x="24.500" y="102.21" width="5.500" height="1.200" fill="#000"/><rect x="24.500" y="113.07" width="5.500" height="1.200" fill="#000"/><rect x="24.500" y="123.92" width="5.500" height="1.200" fill="#000"/><rect x="24.500" y="134.78" width="5.500" height="1.200" fill="#000"/><rect x="24.500" y="145.64" width="5.500" height="1.200" fill="#000"/><rect x="24.500" y="156.49" width="5.500" height="1.200" fill="#000"/><rect x="24.500" y="167.35" width="5.500" height="1.200" fill="#000"/><rect x="24.500" y="178.20" width="5.500" height="1.200" fill="#000"/><rect x="0" y="188.96" width="30" height="1.4" fill="#000"/><rect x="24.500" y="199.92" width="5.500" height="1.200" fill="#000"/><rect x="24.500" y="210.77" width="5.500" height="1.200" fill="#000"/><rect x="24.500" y="221.63" width="5.500" height="1.200" fill="#000"/><rect x="24.500" y="232.48" width="5.500" height="1.200" fill="#000"/><rect x="24.500" y="243.34" width="5.500" height="1.200" fill="#000"/><rect x="24.500" y="254.20" width="5.500" height="1.200" fill="#000"/><rect x="24.500" y="265.05" width="5.500" height="1.200" fill="#000"/><rect x="24.500" y="275.91" width="5.500" height="1.200" fill="#000"/><rect x="24.500" y="286.76" width="5.500" height="1.200" fill="#000"/><rect x="0" y="297.52" width="30" height="1.4" fill="#000"/><rect x="24.500" y="308.48" width="5.500" height="1.200" fill="#000"/><rect x="24.500" y="319.33" width="5.500" height="1.200" fill="#000"/><rect x="24.500" y="330.19" width="5.500" height="1.200" fill="#000"/><rect x="24.500" y="341.04" width="5.500" height="1.200" fill="#000"/><rect x="24.500" y="351.90" width="5.500" height="1.200" fill="#000"/><rect x="24.500" y="362.76" width="5.500" height="1.200" fill="#000"/><rect x="24.500" y="373.61" width="5.500" height="1.200" fill="#000"/><rect x="24.500" y="384.47" width="5.500" height="1.200" fill="#000"/><rect x="24.500" y="395.32" width="5.500" height="1.200" fill="#000"/><rect x="0" y="406.08" width="30" height="1.4" fill="#000"/><rect x="24.500" y="417.04" width="5.500" height="1.200" fill="#000"/><rect x="24.500" y="427.89" width="5.500" height="1.200" fill="#000"/><rect x="24.500" y="438.75" width="5.500" height="1.200" fill="#000"/><rect x="24.500" y="449.60" width="5.500" height="1.200" fill="#000"/><rect x="24.500" y="460.46" width="5.500" height="1.200" fill="#000"/><rect x="24.500" y="471.32" width="5.500" height="1.200" fill="#000"/><rect x="24.500" y="482.17" width="5.500" height="1.200" fill="#000"/><rect x="24.500" y="493.03" width="5.500" height="1.200" fill="#000"/><rect x="24.500" y="503.88" width="5.500" height="1.200" fill="#000"/><rect x="0" y="514.64" width="30" height="1.4" fill="#000"/><rect x="24.500" y="525.60" width="5.500" height="1.200" fill="#000"/><rect x="24.500" y="536.45" width="5.500" height="1.200" fill="#000"/><rect x="24.500" y="547.31" width="5.500" height="1.200" fill="#000"/><rect x="24.500" y="558.16" width="5.500" height="1.200" fill="#000"/><rect x="24.500" y="569.02" width="5.500" height="1.200" fill="#000"/><rect x="24.500" y="579.88" width="5.500" height="1.200" fill="#000"/><rect x="24.500" y="590.73" width="5.500" height="1.200" fill="#000"/><rect x="24.500" y="601.59" width="5.500" height="1.200" fill="#000"/><rect x="24.500" y="612.44" width="5.500" height="1.200" fill="#000"/><rect x="0" y="623.20" width="30" height="1.4" fill="#000"/><rect x="24.500" y="634.16" width="5.500" height="1.200" fill="#000"/><rect x="24.500" y="645.01" width="5.500" height="1.200" fill="#000"/><rect x="24.500" y="655.87" width="5.500" height="1.200" fill="#000"/><rect x="24.500" y="666.72" width="5.500" height="1.200" fill="#000"/><rect x="24.500" y="677.58" width="5.500" height="1.200" fill="#000"/><rect x="24.500" y="688.44" width="5.500" height="1.200" fill="#000"/><rect x="24.500" y="699.29" width="5.500" height="1.200" fill="#000"/><rect x="24.500" y="710.15" width="5.500" height="1.200" fill="#000"/><rect x="24.500" y="721.00" width="5.500" height="1.200" fill="#000"/><rect x="0" y="731.76" width="30" height="1.4" fill="#000"/><rect x="24.500" y="742.72" width="5.500" height="1.200" fill="#000"/><rect x="24.500" y="753.57" width="5.500" height="1.200" fill="#000"/><rect x="24.500" y="764.43" width="5.500" height="1.200" fill="#000"/><rect x="24.500" y="775.28" width="5.500" height="1.200" fill="#000"/><rect x="24.500" y="786.14" width="5.500" height="1.200" fill="#000"/><rect x="24.500" y="797.00" width="5.500" height="1.200" fill="#000"/><rect x="24.500" y="807.85" width="5.500" height="1.200" fill="#000"/><rect x="24.500" y="818.71" width="5.500" height="1.200" fill="#000"/><rect x="24.500" y="829.56" width="5.500" height="1.200" fill="#000"/><rect x="0" y="840.32" width="30" height="1.4" fill="#000"/><rect x="24.500" y="851.28" width="5.500" height="1.200" fill="#000"/><rect x="24.500" y="862.13" width="5.500" height="1.200" fill="#000"/><rect x="24.500" y="872.99" width="5.500" height="1.200" fill="#000"/><rect x="24.500" y="883.84" width="5.500" height="1.200" fill="#000"/><rect x="24.500" y="894.70" width="5.500" height="1.200" fill="#000"/><rect x="24.500" y="905.56" width="5.500" height="1.200" fill="#000"/><rect x="24.500" y="916.41" width="5.500" height="1.200" fill="#000"/><rect x="24.500" y="927.27" width="5.500" height="1.200" fill="#000"/><rect x="24.500" y="938.12" width="5.500" height="1.200" fill="#000"/><rect x="0" y="948.88" width="30" height="1.4" fill="#000"/><rect x="24.500" y="959.84" width="5.500" height="1.200" fill="#000"/><rect x="24.500" y="970.69" width="5.500" height="1.200" fill="#000"/><rect x="24.500" y="981.55" width="5.500" height="1.200" fill="#000"/><rect x="24.500" y="992.40" width="5.500" height="1.200" fill="#000"/><rect x="24.500" y="1003.26" width="5.500" height="1.200" fill="#000"/><rect x="24.500" y="1014.12" width="5.500" height="1.200" fill="#000"/><rect x="24.500" y="1024.97" width="5.500" height="1.200" fill="#000"/><rect x="24.500" y="1035.83" width="5.500" height="1.200" fill="#000"/><rect x="24.500" y="1046.68" width="5.500" height="1.200" fill="#000"/><rect x="0" y="1057.44" width="30" height="1.4" fill="#000"/><rect x="24.500" y="1068.40" width="5.500" height="1.200" fill="#000"/><rect x="24.500" y="1079.25" width="5.500" height="1.200" fill="#000"/><rect x="24.500" y="1090.11" width="5.500" height="1.200" fill="#000"/><rect x="24.500" y="1100.96" width="5.500" height="1.200" fill="#000"/><rect x="24.500" y="1111.82" width="5.500" height="1.200" fill="#000"/><rect x="28.800" y="0" width="1.400" height="1122" fill="#000"/></svg>
<div class="t" style="left:293.8px;top:374.60px;font-size:16.500px;line-height:16.500px;font-weight:700;letter-spacing:.5px;transform-origin:0 0;transform:rotate(-90deg);">250</div>
<div class="t" style="left:293.8px;top:483.16px;font-size:16.500px;line-height:16.500px;font-weight:700;letter-spacing:.5px;transform-origin:0 0;transform:rotate(-90deg);">200</div>
<div class="t" style="left:293.8px;top:591.72px;font-size:16.500px;line-height:16.500px;font-weight:700;letter-spacing:.5px;transform-origin:0 0;transform:rotate(-90deg);">150</div>
<div class="t" style="left:293.8px;top:700.28px;font-size:16.500px;line-height:16.500px;font-weight:700;letter-spacing:.5px;transform-origin:0 0;transform:rotate(-90deg);">100</div>
<div class="t" style="left:293.8px;top:808.84px;font-size:16.500px;line-height:16.500px;font-weight:700;letter-spacing:.5px;transform-origin:0 0;transform:rotate(-90deg);">50</div>
<div class="t" style="left:293.8px;top:917.40px;font-size:16.500px;line-height:16.500px;font-weight:700;letter-spacing:.5px;transform-origin:0 0;transform:rotate(-90deg);">0</div>
<div class="t" style="left:293.8px;top:1025.96px;font-size:16.500px;line-height:16.500px;font-weight:700;letter-spacing:.5px;transform-origin:0 0;transform:rotate(-90deg);">50</div>
<div class="t" style="left:293.8px;top:1134.52px;font-size:16.500px;line-height:16.500px;font-weight:700;letter-spacing:.5px;transform-origin:0 0;transform:rotate(-90deg);">100</div>
<div class="t" style="left:293.8px;top:1243.08px;font-size:16.500px;line-height:16.500px;font-weight:700;letter-spacing:.5px;transform-origin:0 0;transform:rotate(-90deg);">150</div>
<div class="t" style="left:293.8px;top:1351.64px;font-size:16.500px;line-height:16.500px;font-weight:700;letter-spacing:.5px;transform-origin:0 0;transform:rotate(-90deg);">200</div>
<div style="left:292px;top:1044.5px;width:30px;height:10.5px;background:#f7f25a;"></div>
<div style="left:292px;top:1049px;width:30px;height:1.6px;background:#222;"></div>
<div style="left:767px;top:565px;width:1014px;height:717px;background:#ececec;box-shadow:inset 0 0 0 1.300px #8e8e8e;"></div>
<div style="left:782px;top:580.5px;width:984px;height:686px;background:#fff;box-shadow:0 0 0 1.500px #dedede;"></div>
<div style="left:767.5px;top:526.6px;width:1012.8px;height:1.4px;background:#000;"></div>
<div style="left:767.3px;top:520px;width:1.4px;height:22.5px;background:#000;"></div>
<div style="left:1779.6px;top:520px;width:1.4px;height:22.5px;background:#000;"></div>
<svg style="left:764px;top:523.3px;" width="8" height="8" viewBox="0 0 8 8"><path d="M1 7 7 1" stroke="#000" stroke-width=".9"/></svg>
<svg style="left:1776.3px;top:523.3px;" width="8" height="8" viewBox="0 0 8 8"><path d="M1 7 7 1" stroke="#000" stroke-width=".9"/></svg>
<div class="t" style="left:1251.80px;top:496.42px;font-size:27.5px;line-height:27.5px;color:#000;">465</div>
<div style="left:782.2px;top:665.8px;width:983.2px;height:1.4px;background:#000;"></div>
<div style="left:781.9px;top:650px;width:1.4px;height:22.5px;background:#000;"></div>
<div style="left:1764.7px;top:650px;width:1.4px;height:22.5px;background:#000;"></div>
<svg style="left:778.6px;top:662.5px;" width="8" height="8" viewBox="0 0 8 8"><path d="M1 7 7 1" stroke="#000" stroke-width=".9"/></svg>
<svg style="left:1761.4px;top:662.5px;" width="8" height="8" viewBox="0 0 8 8"><path d="M1 7 7 1" stroke="#000" stroke-width=".9"/></svg>
<div class="t" style="left:1251.80px;top:635.02px;font-size:27.5px;line-height:27.5px;color:#000;">455</div>
<div style="left:1653.6px;top:580.5px;width:1.4px;height:685.8px;background:#000;"></div>
<div style="left:1647.4px;top:579.8px;width:22.6px;height:1.4px;background:#000;"></div>
<div style="left:1647.4px;top:1265.6px;width:22.6px;height:1.4px;background:#000;"></div>
<svg style="left:1650.3px;top:576.5px;" width="8" height="8" viewBox="0 0 8 8"><path d="M1 7 7 1" stroke="#000" stroke-width=".9"/></svg>
<svg style="left:1650.3px;top:1262.3px;" width="8" height="8" viewBox="0 0 8 8"><path d="M1 7 7 1" stroke="#000" stroke-width=".9"/></svg>
<div class="t" style="left:1622.200px;top:946.500px;font-size:27.500px;line-height:27.500px;transform-origin:0 0;transform:rotate(-90deg);letter-spacing:-.2px">315</div>
<div style="left:1882.8px;top:565px;width:1.4px;height:716.3px;background:#000;"></div>
<div style="left:1868px;top:564.6px;width:23px;height:1.4px;background:#000;"></div>
<div style="left:1868px;top:1280.6px;width:23px;height:1.4px;background:#000;"></div>
<svg style="left:1879.5px;top:561.3px;" width="8" height="8" viewBox="0 0 8 8"><path d="M1 7 7 1" stroke="#000" stroke-width=".9"/></svg>
<svg style="left:1879.5px;top:1277.3px;" width="8" height="8" viewBox="0 0 8 8"><path d="M1 7 7 1" stroke="#000" stroke-width=".9"/></svg>
<div class="t" style="left:1850.500px;top:946.500px;font-size:27.500px;line-height:27.500px;transform-origin:0 0;transform:rotate(-90deg);letter-spacing:-.2px">330</div>
<div style="left:1268px;top:922.9px;width:13px;height:1.2px;background:#000;"></div>
<div style="left:1273.7px;top:917px;width:1.2px;height:13px;background:#000;"></div>
<div style="left:1618.3px;top:938px;width:16.5px;height:16.5px;box-shadow:inset 0 0 0 1.200px #f21818;"></div>
<svg style="left:1451px;top:1021px;" width="56" height="56" viewBox="0 0 56 56"><g fill="none" stroke="#e2e2e2" stroke-width="1.800"><rect x="16.500" y="16.500" width="23" height="23"/><path d="M1 13V1H13M43 1H55V13M55 43V55H43M13 55H1V43"/></g></svg>
<div style="left:2122px;top:90px;width:438px;height:30px;background:linear-gradient(90deg,#f6f6f6 0%,#f0f0f0 35%,#e2e2e2 100%);"></div>
<svg style="left:2131.5px;top:97px;" width="16" height="15" viewBox="0 0 16 15"><path d="M2 2 14 13M14 2 2 13" stroke="#b1b1b1" stroke-width="3.600"/></svg>
<div class="t" style="left:2160.80px;top:94.50px;font-size:21.5px;line-height:21.5px;color:#1b1b1b;letter-spacing:0.985px;">Object Info - Shape</div>
<svg style="left:2526px;top:94px;" width="20" height="27" viewBox="0 0 20 27"><text x="10" y="22.500" text-anchor="middle" font-family="Liberation Sans, sans-serif" font-weight="700" font-size="26" fill="#efefef" stroke="#c0c0c0" stroke-width="1.300">?</text></svg>
<div style="left:2122px;top:120px;width:438px;height:52px;background:#c3c3c3;"></div>
<svg style="left:2120px;top:127px" width="128" height="46" viewBox="0 0 128 46"><path d="M0 46C8 45 10 40 10 33V13C10 5 14 1 21 1H106C113 1 117 5 117 13V33C117 40 120 45 128 46z" fill="#ececec"/></svg>
<div class="t" style="left:2151.60px;top:139.03px;font-size:23px;line-height:23px;color:#1b1b1b;transform-origin:0 50%;transform:scaleX(0.9620);">Shape</div>
<div class="t" style="left:2264.50px;top:139.03px;font-size:23px;line-height:23px;color:#1b1b1b;transform-origin:0 50%;transform:scaleX(0.9694);">Data</div>
<div class="t" style="left:2356.60px;top:139.03px;font-size:23px;line-height:23px;color:#1b1b1b;letter-spacing:-0.408px;">Render</div>
<div style="left:2339.8px;top:136px;width:2px;height:28.5px;background:#3a3a3a;"></div>
<div style="left:2445.2px;top:136px;width:2px;height:28.5px;background:#3a3a3a;"></div>
<div style="left:2534px;top:126px;width:20.5px;height:16.5px;background:#fff;box-shadow:0 0 0 1px #d8d8d8;"></div>
<svg style="left:2538px;top:128.5px;" width="14" height="12" viewBox="0 0 14 12"><path d="M1.500 1.500V10.500L12 6z" fill="#fff" stroke="#111" stroke-width="1.700" stroke-linejoin="round"/></svg>
<div class="t" style="left:2126.50px;top:184.65px;font-size:20.5px;line-height:20.5px;color:#1b1b1b;font-weight:700;letter-spacing:0.375px;">No Selection</div>
<div class="t" style="left:2126.50px;top:684.65px;font-size:20.5px;line-height:20.5px;color:#b3b3b3;transform-origin:0 50%;transform:scaleX(0.8978);">Name:</div>
<div style="left:2188px;top:679.3px;width:367px;height:29px;background:#fff;box-shadow:inset 0 0 0 1.300px #cfcfcf;"></div>
<div style="left:2122px;top:714.2px;width:438px;height:12px;background:#c1c1c1;"></div>
<div style="left:2326px;top:718.5px;width:5px;height:4px;background:#8a8a8a;"></div>
<div style="left:2336px;top:718.5px;width:5px;height:4px;background:#8a8a8a;"></div>
<div style="left:2346px;top:718.5px;width:5px;height:4px;background:#8a8a8a;"></div>
<div style="left:2113.5px;top:737px;width:4.5px;height:4.5px;background:#8a8a8a;"></div>
<div style="left:2113.5px;top:746.5px;width:4.5px;height:4.5px;background:#8a8a8a;"></div>
<div style="left:2113.5px;top:756px;width:4.5px;height:4.5px;background:#8a8a8a;"></div>
<div style="left:2122px;top:726px;width:438px;height:30px;background:linear-gradient(90deg,#f6f6f6 0%,#f0f0f0 35%,#e2e2e2 100%);"></div>
<svg style="left:2131.5px;top:733px;" width="16" height="15" viewBox="0 0 16 15"><path d="M2 2 14 13M14 2 2 13" stroke="#b1b1b1" stroke-width="3.600"/></svg>
<div class="t" style="left:2160.80px;top:730.10px;font-size:21.5px;line-height:21.5px;color:#1b1b1b;letter-spacing:0.883px;">Navigation - Sheet Layers</div>
<svg style="left:2526px;top:730px;" width="20" height="27" viewBox="0 0 20 27"><text x="10" y="22.500" text-anchor="middle" font-family="Liberation Sans, sans-serif" font-weight="700" font-size="26" fill="#efefef" stroke="#c0c0c0" stroke-width="1.300">?</text></svg>
<div style="left:2122px;top:756px;width:438px;height:51.5px;background:#c3c3c3;"></div>
<svg style="left:2212px;top:763px" width="68" height="45" viewBox="0 0 68 45"><path d="M0 45C7 44 10 40 10 33V13C10 5 14 1 21 1H48C55 1 59 5 59 13V33C59 40 61 44 68 45z" fill="#ececec"/></svg>
<div style="left:2175.8px;top:771px;width:2px;height:28px;background:#3a3a3a;"></div>
<div style="left:2534px;top:762px;width:20.5px;height:16.5px;background:#fff;box-shadow:0 0 0 1px #d8d8d8;"></div>
<svg style="left:2538px;top:764.5px;" width="14" height="12" viewBox="0 0 14 12"><path d="M1.500 1.500V10.500L12 6z" fill="#fff" stroke="#111" stroke-width="1.700" stroke-linejoin="round"/></svg>
<div class="t" style="left:2130.40px;top:817.02px;font-size:21px;line-height:21px;color:#1b1b1b;transform-origin:0 50%;transform:scaleX(0.9333);">Filter:</div>
<div style="left:2186.8px;top:813.4px;width:368.2px;height:27.3px;background:#fff;border-radius:7px;box-shadow:0 0 0 1px #d2d2d2,0 1px 1.500px rgba(0,0,0,.25);overflow:hidden;"><div style="left:343.200px;top:0;width:25px;height:27.300px;background:linear-gradient(#4a9bff,#1668f0)"></div></div>
<svg style="left:2535.5px;top:817.5px;" width="14" height="20" viewBox="0 0 14 20"><path d="M2.500 7.500 7 3 11.500 7.500M2.500 12.500 7 17 11.500 12.500" fill="none" stroke="#fff" stroke-width="2.200" stroke-linecap="round" stroke-linejoin="round"/></svg>
<div class="t" style="left:2205.80px;top:818.07px;font-size:20px;line-height:20px;color:#1b1b1b;letter-spacing:-0.359px;">&lt;All Layers&gt;</div>
<div style="left:2127.2px;top:847.8px;width:427.8px;height:34.4px;background:#fff;border-radius:8px;box-shadow:inset 0 0 0 1.300px #b9b9b9;"></div>
<svg style="left:2139px;top:855px;" width="24" height="24" viewBox="0 0 24 24"><circle cx="9.500" cy="9.500" r="7.800" fill="none" stroke="#3b3b3b" stroke-width="1.800"/><path d="M15 15 22 22" stroke="#3b3b3b" stroke-width="1.800"/></svg>
<div class="t" style="left:2172.80px;top:854.11px;font-size:23.5px;line-height:23.5px;color:#bdbdbd;transform-origin:0 50%;transform:scaleX(0.9565);">Search</div>
<div style="left:2122px;top:887.3px;width:438px;height:1.5px;background:#c9c9c9;"></div>
<div style="left:2124px;top:889px;width:434px;height:47.5px;background:linear-gradient(#ededed,#e6e6e6);box-shadow:0 1px 0 #cfcfcf;"></div>
<div style="left:2182px;top:896px;width:1.6px;height:34px;background:#cfcfcf;"></div>
<div style="left:2347.9px;top:896px;width:1.6px;height:34px;background:#cfcfcf;"></div>
<div style="left:2555.7px;top:896px;width:1.6px;height:34px;background:#cfcfcf;"></div>
<div class="t" style="left:2192.60px;top:901.68px;font-size:22px;line-height:22px;color:#1b1b1b;letter-spacing:0.397px;">Sheet Numb...</div>
<div class="t" style="left:2358.50px;top:901.68px;font-size:22px;line-height:22px;color:#1b1b1b;letter-spacing:0.795px;">Sheet Title</div>
<div style="left:2124px;top:937px;width:434px;height:483px;background:#fff;"></div>
<div style="left:2536.5px;top:937px;width:21.5px;height:483px;background:#fafafa;box-shadow:inset 1px 0 0 #e8e8e8;"></div>
<div style="left:2124px;top:1368px;width:412.5px;height:30px;background:#b3d7ff;"></div>
<div style="left:2124px;top:937px;width:412.5px;height:483px;overflow:hidden;"><div class="t" style="left:66.80px;top:15.32px;font-size:19px;line-height:19px;color:#111;">A06</div><div class="t" style="left:232.00px;top:15.32px;font-size:19px;line-height:19px;color:#111;letter-spacing:-0.100px;">Elevation 1</div><div class="t" style="left:66.80px;top:45.32px;font-size:19px;line-height:19px;color:#111;">A07</div><div class="t" style="left:232.00px;top:45.32px;font-size:19px;line-height:19px;color:#111;letter-spacing:0.130px;">Elevation 2</div><div class="t" style="left:66.80px;top:75.32px;font-size:19px;line-height:19px;color:#111;">A08</div><div class="t" style="left:232.00px;top:75.32px;font-size:19px;line-height:19px;color:#111;letter-spacing:0.222px;">Site Garden Area ana</div><div class="t" style="left:66.80px;top:105.32px;font-size:19px;line-height:19px;color:#111;">A09</div><div class="t" style="left:232.00px;top:105.32px;font-size:19px;line-height:19px;color:#111;letter-spacing:0.057px;">Coloured Elevation 1</div><div class="t" style="left:66.80px;top:135.32px;font-size:19px;line-height:19px;color:#111;">A10</div><div class="t" style="left:232.00px;top:135.32px;font-size:19px;line-height:19px;color:#111;letter-spacing:0.189px;">Coloured Elevation 2</div><div class="t" style="left:66.80px;top:165.32px;font-size:19px;line-height:19px;color:#111;">A11</div><div class="t" style="left:232.00px;top:165.32px;font-size:19px;line-height:19px;color:#111;letter-spacing:-0.063px;">Windows and doors s</div><div class="t" style="left:66.80px;top:195.32px;font-size:19px;line-height:19px;color:#111;">01</div><div class="t" style="left:232.00px;top:195.32px;font-size:19px;line-height:19px;color:#111;transform-origin:0 50%;transform:scaleX(0.9515);">GF Plan</div><div class="t" style="left:66.80px;top:225.32px;font-size:19px;line-height:19px;color:#111;">02</div><div class="t" style="left:232.00px;top:225.32px;font-size:19px;line-height:19px;color:#111;letter-spacing:0.145px;">First Floor Plan</div><div class="t" style="left:66.80px;top:255.32px;font-size:19px;line-height:19px;color:#111;">03</div><div class="t" style="left:232.00px;top:255.32px;font-size:19px;line-height:19px;color:#111;letter-spacing:0.039px;">Elevation</div><div class="t" style="left:66.80px;top:285.32px;font-size:19px;line-height:19px;color:#111;">04</div><div class="t" style="left:232.00px;top:285.32px;font-size:19px;line-height:19px;color:#111;letter-spacing:0.039px;">Elevation</div><div class="t" style="left:66.80px;top:315.32px;font-size:19px;line-height:19px;color:#111;">05</div><div class="t" style="left:232.00px;top:315.32px;font-size:19px;line-height:19px;color:#111;letter-spacing:-0.100px;">Elevation 1</div><div class="t" style="left:66.80px;top:345.32px;font-size:19px;line-height:19px;color:#111;">06</div><div class="t" style="left:232.00px;top:345.32px;font-size:19px;line-height:19px;color:#111;letter-spacing:0.130px;">Elevation 2</div><div class="t" style="left:66.80px;top:375.32px;font-size:19px;line-height:19px;color:#111;">A12</div><div class="t" style="left:232.00px;top:375.32px;font-size:19px;line-height:19px;color:#111;letter-spacing:0.326px;">Prespective view-1</div><div class="t" style="left:66.80px;top:405.32px;font-size:19px;line-height:19px;color:#111;">A13</div><div class="t" style="left:232.00px;top:405.32px;font-size:19px;line-height:19px;color:#111;letter-spacing:0.461px;">Prespective view-2</div><div class="t" style="left:66.80px;top:-13.58px;font-size:19px;line-height:19px;color:#111;">A05</div><div class="t" style="left:232.00px;top:-13.58px;font-size:19px;line-height:19px;color:#111;">Site Floor plan</div><div class="t" style="left:66.80px;top:435.72px;font-size:19px;line-height:19px;color:#111;font-weight:700;">1</div><div class="t" style="left:232.00px;top:435.72px;font-size:19px;line-height:19px;color:#111;letter-spacing:0.414px;">page test</div></div>
<svg style="left:2141px;top:1372px;" width="24" height="23" viewBox="0 0 24 23"><path d="M2.500 13.500Q5 12.500 8 18.500Q12 9 21.500 1.500" fill="none" stroke="#2a2a2a" stroke-width="5" stroke-linecap="round"/><path d="M2.500 13.500Q5 12.500 8 18.500Q12 9 21.500 1.500" fill="none" stroke="#e9e9e9" stroke-width="2.700" stroke-linecap="round"/></svg>
<div style="left:2542px;top:1042px;width:12px;height:350px;background:#c1c1c1;border-radius:6px;"></div>
<div style="left:2124px;top:1398.5px;width:434px;height:21.5px;background:#fafafa;box-shadow:inset 0 1px 0 #e8e8e8;"></div>
<div style="left:2130px;top:1403.7px;width:277px;height:12.3px;background:#c1c1c1;border-radius:6px;"></div>
<div style="left:2122px;top:1420px;width:438px;height:32px;background:linear-gradient(#cdcdcd,#c7c7c7);border-radius:0 0 9px 0;"></div>
<div style="left:2530px;top:1420px;width:30px;height:32px;background:#dedede;border-radius:0 0 9px 0;"></div>
<div style="left:2289px;top:1426.4px;width:209px;height:25.6px;background:#7dc77d;"></div>
<div class="t" style="left:2293.50px;top:1428.28px;font-size:24px;line-height:24px;color:#0a0a0a;font-weight:700;letter-spacing:-0.325px;">Backup complete.</div>
<svg style="left:2506px;top:1430.5px;" width="17" height="19" viewBox="0 0 17 19"><path d="M1 1V18L16 9.500z" fill="#8b8b8b"/></svg>
<div style="left:0px;top:92px;width:280px;height:28px;background:linear-gradient(90deg,#f6f6f6 0%,#f0f0f0 35%,#e2e2e2 100%);"></div>
<svg style="left:9px;top:99px;" width="16" height="15" viewBox="0 0 16 15"><path d="M2 2 14 13M14 2 2 13" stroke="#b1b1b1" stroke-width="3.600"/></svg>
<div class="t" style="left:39.00px;top:94.22px;font-size:21px;line-height:21px;color:#1b1b1b;letter-spacing:0.739px;">Basic</div>
<div style="left:0px;top:120px;width:258px;height:468px;background:#fff;"></div>
<div style="left:258px;top:120px;width:22px;height:468px;background:#fafafa;box-shadow:inset 1px 0 0 #e9e9e9;"></div>
<div style="left:264px;top:127px;width:12px;height:421px;background:#c1c1c1;border-radius:6px;"></div>
<div style="left:0px;top:120px;width:64px;height:51.5px;background:#c9c9c9;"></div>
<div style="left:0px;top:588px;width:280px;height:24px;background:#ebebeb;"></div>
<div style="left:121px;top:592.6px;width:38px;height:15px;background:linear-gradient(#e8e8e8 0,#e8e8e8 45%,#f7f7f7 45%);box-shadow:inset 0 0 0 1.800px #b2b2b2;"></div>
<svg style="left:134px;top:596.6px;" width="12" height="8" viewBox="0 0 12 8"><path d="M1 1.500H11V2.800H9.300L6 7 2.700 2.800H1z" fill="#111"/></svg>
<div style="left:0px;top:612px;width:280px;height:12px;background:#c1c1c1;"></div>
<div style="left:124px;top:616px;width:5px;height:4px;background:#8a8a8a;"></div>
<div style="left:134px;top:616px;width:5px;height:4px;background:#8a8a8a;"></div>
<div style="left:144px;top:616px;width:5px;height:4px;background:#8a8a8a;"></div>
<div style="left:0px;top:624px;width:280px;height:30px;background:linear-gradient(90deg,#f6f6f6 0%,#f0f0f0 35%,#e2e2e2 100%);"></div>
<svg style="left:9px;top:631px;" width="16" height="15" viewBox="0 0 16 15"><path d="M2 2 14 13M14 2 2 13" stroke="#b1b1b1" stroke-width="3.600"/></svg>
<div class="t" style="left:39.00px;top:628.80px;font-size:21.5px;line-height:21.5px;color:#1b1b1b;letter-spacing:0.978px;">3D Modeling</div>
<div style="left:0px;top:654px;width:258px;height:311px;background:#fff;"></div>
<div style="left:258px;top:654px;width:22px;height:311px;background:#fafafa;box-shadow:inset 1px 0 0 #e9e9e9;"></div>
<div style="left:264.5px;top:660.6px;width:11.5px;height:88.5px;background:#c1c1c1;border-radius:6px;"></div>
<div class="t" style="left:71.20px;top:671.19px;font-size:19.5px;line-height:19.5px;color:#111;letter-spacing:0.565px;">Flyover</div>
<div class="t" style="left:71.20px;top:721.19px;font-size:19.5px;line-height:19.5px;color:#111;letter-spacing:0.388px;">Set Working Pla...</div>
<div class="t" style="left:71.20px;top:771.19px;font-size:19.5px;line-height:19.5px;color:#111;letter-spacing:0.677px;">Push/Pull</div>
<div class="t" style="left:71.20px;top:821.19px;font-size:19.5px;line-height:19.5px;color:#111;letter-spacing:0.639px;">Taper Face</div>
<div class="t" style="left:71.20px;top:871.19px;font-size:19.5px;line-height:19.5px;color:#111;letter-spacing:1.078px;">Deform</div>
<div class="t" style="left:71.20px;top:921.19px;font-size:19.5px;line-height:19.5px;color:#111;letter-spacing:0.904px;">Edit Subdivision</div>
<svg style="left:242px;top:721px;" width="11" height="18" viewBox="0 0 11 18"><path d="M1.500 1.500V16.500L9.500 9z" fill="none" stroke="#111" stroke-width="1.800" stroke-linejoin="round"/></svg>
<div style="left:0px;top:965px;width:280px;height:25px;background:#ebebeb;"></div>
<div style="left:121px;top:970.5px;width:38px;height:15px;background:linear-gradient(#e8e8e8 0,#e8e8e8 45%,#f7f7f7 45%);box-shadow:inset 0 0 0 1.800px #b2b2b2;"></div>
<svg style="left:134px;top:974.5px;" width="12" height="8" viewBox="0 0 12 8"><path d="M1 1.500H11V2.800H9.300L6 7 2.700 2.800H1z" fill="#111"/></svg>
<div style="left:0px;top:990px;width:280px;height:12px;background:#c1c1c1;"></div>
<div style="left:124px;top:994px;width:5px;height:4px;background:#8a8a8a;"></div>
<div style="left:134px;top:994px;width:5px;height:4px;background:#8a8a8a;"></div>
<div style="left:144px;top:994px;width:5px;height:4px;background:#8a8a8a;"></div>
<div style="left:0px;top:1002px;width:280px;height:29.5px;background:linear-gradient(90deg,#f6f6f6 0%,#f0f0f0 35%,#e2e2e2 100%);"></div>
<svg style="left:9px;top:1009px;" width="16" height="15" viewBox="0 0 16 15"><path d="M2 2 14 13M14 2 2 13" stroke="#b1b1b1" stroke-width="3.600"/></svg>
<div class="t" style="left:39.00px;top:1006.30px;font-size:21.5px;line-height:21.5px;color:#1b1b1b;letter-spacing:0.760px;">Tool Sets</div>
<div style="left:0px;top:1031.5px;width:258px;height:215px;background:#fff;overflow:hidden;"><div style="left:28.600px;top:209.500px;width:26px;height:26px;border-radius:50%;background:radial-gradient(circle at 45% 35%,#fffbe0,#fbe38a);box-shadow:0 0 0 1.400px #7a1a1a"></div></div>
<div style="left:258px;top:1031.5px;width:22px;height:215px;background:#fafafa;box-shadow:inset 1px 0 0 #e9e9e9;"></div>
<div style="left:264.5px;top:1038px;width:11.5px;height:68px;background:#c1c1c1;border-radius:6px;"></div>
<div class="t" style="left:71.20px;top:1049.39px;font-size:19.5px;line-height:19.5px;color:#111;letter-spacing:0.565px;">Flyover</div>
<div class="t" style="left:71.20px;top:1099.39px;font-size:19.5px;line-height:19.5px;color:#111;letter-spacing:1.054px;">Walkthrough</div>
<div class="t" style="left:71.20px;top:1149.39px;font-size:19.5px;line-height:19.5px;color:#111;letter-spacing:0.795px;">Translate View</div>
<div class="t" style="left:71.20px;top:1199.39px;font-size:19.5px;line-height:19.5px;color:#111;letter-spacing:0.794px;">Rotate View</div>
<div style="left:0px;top:1246px;width:280px;height:176px;background:#ebebeb;"></div>
<div style="left:63px;top:1296.9px;width:62.1px;height:50.2px;background:#c0c0c0;"></div>
<div style="left:0px;top:1247.3px;width:1.6px;height:149.6px;background:#a9a9a9;"></div>
<div style="left:62.2px;top:1247.3px;width:1.6px;height:149.6px;background:#a9a9a9;"></div>
<div style="left:124.3px;top:1247.3px;width:1.6px;height:149.6px;background:#a9a9a9;"></div>
<div style="left:186.2px;top:1247.3px;width:1.6px;height:149.6px;background:#a9a9a9;"></div>
<div style="left:248.4px;top:1247.3px;width:1.6px;height:149.6px;background:#a9a9a9;"></div>
<div style="left:0px;top:1246.5px;width:250px;height:1.6px;background:#a9a9a9;"></div>
<div style="left:0px;top:1296.1px;width:250px;height:1.6px;background:#a9a9a9;"></div>
<div style="left:0px;top:1346.3px;width:250px;height:1.6px;background:#a9a9a9;"></div>
<div style="left:0px;top:1396.1px;width:250px;height:1.6px;background:#a9a9a9;"></div>
<div style="left:121.4px;top:1402px;width:38px;height:15.6px;background:linear-gradient(#e8e8e8 0,#e8e8e8 45%,#f7f7f7 45%);box-shadow:inset 0 0 0 1.800px #b2b2b2;"></div>
<svg style="left:134.4px;top:1406.3px;" width="12" height="8" viewBox="0 0 12 8"><path d="M1 1.500H11V2.800H9.300L6 7 2.700 2.800H1z" fill="#111"/></svg>
<div style="left:4px;top:1418px;width:4px;height:2px;background:#666;"></div>
<div style="left:283.5px;top:732px;width:5px;height:4.5px;background:#8a8a8a;"></div>
<div style="left:283.5px;top:742px;width:5px;height:4.5px;background:#8a8a8a;"></div>
<div style="left:283.5px;top:752px;width:5px;height:4.5px;background:#8a8a8a;"></div>
<div style="left:106px;top:62px;width:2022px;height:30px;background:linear-gradient(#fdfdfd,#f3f3f3 60%,#e6e6e6);box-shadow:0 0 0 1px rgba(0,0,0,.14),0 2px 5px rgba(0,0,0,.22);"></div>
<svg style="left:115px;top:69.5px;" width="16" height="15" viewBox="0 0 16 15"><path d="M2 2 14 13M14 2 2 13" stroke="#b1b1b1" stroke-width="3.600"/></svg>
<div style="left:140px;top:75.5px;width:14px;height:3.4px;background:#b1b1b1;"></div>
<div class="t" style="left:168.60px;top:66.10px;font-size:21.5px;line-height:21.5px;color:#1b1b1b;letter-spacing:0.770px;">Resource Manager</div>
<svg style="left:2094px;top:65px;" width="20" height="27" viewBox="0 0 20 27"><text x="10" y="22.500" text-anchor="middle" font-family="Liberation Sans, sans-serif" font-weight="700" font-size="26" fill="#efefef" stroke="#c0c0c0" stroke-width="1.300">?</text></svg>
<div style="left:334px;top:276px;width:80px;height:106px;background:#ebebeb;box-shadow:0 0 0 1px rgba(0,0,0,.13),0 10px 28px rgba(0,0,0,.28),0 2px 6px rgba(0,0,0,.18);"></div>
<div style="left:334px;top:276px;width:80px;height:29.5px;background:linear-gradient(90deg,#f6f6f6 0%,#f0f0f0 35%,#e2e2e2 100%);"></div>
<svg style="left:343px;top:283.5px;" width="16" height="15" viewBox="0 0 16 15"><path d="M2 2 14 13M14 2 2 13" stroke="#b1b1b1" stroke-width="3.600"/></svg>
<svg style="left:367px;top:283.5px;" width="16" height="15" viewBox="0 0 16 15"><path d="M8 1V14M1.500 7.500H14.500" stroke="#b1b1b1" stroke-width="3.200"/></svg>
<div style="left:397.5px;top:283px;width:2px;height:16px;background:#222;"></div>
<div style="left:334px;top:305.5px;width:80px;height:52.5px;background:#fff;"></div>
<svg style="left:357px;top:312px;" width="40" height="40" viewBox="0 0 40 40"><defs><linearGradient id="zg" x1="0" x2="1"><stop offset="0" stop-color="#5d5d5d"/><stop offset="1" stop-color="#b3b3b3"/></linearGradient></defs><path d="M15 0H39V13L23 27V40H1V25L15 12z" fill="url(#zg)"/></svg>
<div style="left:355px;top:363px;width:38px;height:14.6px;background:linear-gradient(#e8e8e8 0,#e8e8e8 45%,#f7f7f7 45%);box-shadow:inset 0 0 0 1.800px #b2b2b2;"></div>
<svg style="left:368px;top:366.8px;" width="12" height="8" viewBox="0 0 12 8"><path d="M1 1.500H11V2.800H9.300L6 7 2.700 2.800H1z" fill="#111"/></svg>
<div style="left:317.5px;top:414px;width:250.5px;height:159px;background:#ebebeb;box-shadow:0 0 0 1px rgba(0,0,0,.13),0 10px 28px rgba(0,0,0,.28),0 2px 6px rgba(0,0,0,.18);"></div>
<div style="left:317.5px;top:414px;width:250.5px;height:29.6px;background:linear-gradient(90deg,#f6f6f6 0%,#f0f0f0 35%,#e2e2e2 100%);"></div>
<svg style="left:326.5px;top:421px;" width="16" height="15" viewBox="0 0 16 15"><path d="M2 2 14 13M14 2 2 13" stroke="#b1b1b1" stroke-width="3.600"/></svg>
<svg style="left:350.5px;top:421px;" width="16" height="15" viewBox="0 0 16 15"><path d="M8 1V14M1.500 7.500H14.500" stroke="#b1b1b1" stroke-width="3.200"/></svg>
<div class="t" style="left:380.00px;top:418.88px;font-size:22px;line-height:22px;color:#1b1b1b;letter-spacing:0.507px;">Snapping</div>
<svg style="left:534px;top:418px;" width="20" height="27" viewBox="0 0 20 27"><text x="10" y="22.500" text-anchor="middle" font-family="Liberation Sans, sans-serif" font-weight="700" font-size="26" fill="#efefef" stroke="#c0c0c0" stroke-width="1.300">?</text></svg>
<div style="left:319.6px;top:443.6px;width:60.8px;height:48.4px;background:linear-gradient(#f4f4f4,#e9e9e9);box-shadow:inset 0 0 0 .8px #b5b5b5;"></div>
<div style="left:380.4px;top:443.6px;width:61.9px;height:48.4px;background:linear-gradient(#cfcfcf,#c4c4c4);box-shadow:inset 0 0 0 .8px #b5b5b5;"></div>
<div style="left:442.3px;top:443.6px;width:62.5px;height:48.4px;background:linear-gradient(#cfcfcf,#c4c4c4);box-shadow:inset 0 0 0 .8px #b5b5b5;"></div>
<div style="left:504.8px;top:443.6px;width:61.2px;height:48.4px;background:linear-gradient(#f4f4f4,#e9e9e9);box-shadow:inset 0 0 0 .8px #b5b5b5;"></div>
<div style="left:319.6px;top:492px;width:60.8px;height:50.3px;background:linear-gradient(#cfcfcf,#c4c4c4);box-shadow:inset 0 0 0 .8px #b5b5b5;"></div>
<div style="left:380.4px;top:492px;width:61.9px;height:50.3px;background:linear-gradient(#cfcfcf,#c4c4c4);box-shadow:inset 0 0 0 .8px #b5b5b5;"></div>
<div style="left:442.3px;top:492px;width:62.5px;height:50.3px;background:linear-gradient(#cfcfcf,#c4c4c4);box-shadow:inset 0 0 0 .8px #b5b5b5;"></div>
<div style="left:504.8px;top:492px;width:61.2px;height:50.3px;background:linear-gradient(#f4f4f4,#e9e9e9);box-shadow:inset 0 0 0 .8px #b5b5b5;"></div>
<div style="left:338px;top:573px;width:230px;height:445px;background:#ebebeb;box-shadow:0 0 0 1px rgba(0,0,0,.13),0 10px 28px rgba(0,0,0,.28),0 2px 6px rgba(0,0,0,.18);"></div>
<div style="left:338px;top:573px;width:230px;height:30.5px;background:linear-gradient(90deg,#f6f6f6 0%,#f0f0f0 35%,#e2e2e2 100%);"></div>
<svg style="left:346.5px;top:580px;" width="16" height="15" viewBox="0 0 16 15"><path d="M2 2 14 13M14 2 2 13" stroke="#b1b1b1" stroke-width="3.600"/></svg>
<svg style="left:370.5px;top:580px;" width="16" height="15" viewBox="0 0 16 15"><path d="M8 1V14M1.500 7.500H14.500" stroke="#b1b1b1" stroke-width="3.200"/></svg>
<div class="t" style="left:400.50px;top:578.88px;font-size:22px;line-height:22px;color:#1b1b1b;letter-spacing:0.894px;">Attributes</div>
<svg style="left:534px;top:577px;" width="20" height="27" viewBox="0 0 20 27"><text x="10" y="22.500" text-anchor="middle" font-family="Liberation Sans, sans-serif" font-weight="700" font-size="26" fill="#efefef" stroke="#c0c0c0" stroke-width="1.300">?</text></svg>
<div style="left:399.6px;top:615.5px;width:146.8px;height:33px;background:#fff;border-radius:7px;box-shadow:0 0 0 1px #d6d6d6,0 1px 1.500px rgba(0,0,0,.22);"></div>
<div style="left:414.4px;top:618.4px;width:27.4px;height:27.4px;background:linear-gradient(135deg,#3a3a3a,#0c0c0c);box-shadow:inset 0 0 0 1.500px #111;"></div>
<div class="t" style="left:456.50px;top:621.65px;font-size:22.5px;line-height:22.5px;color:#1b1b1b;letter-spacing:-0.077px;">Solid</div>
<svg style="left:522.4px;top:620.5px;" width="16" height="23" viewBox="0 0 16 23"><path d="M2.500 8.5 8 2.500 13.500 8.5 M2.500 14.5 8 20.5 13.500 14.5" fill="none" stroke="#333" stroke-width="2" stroke-linecap="round" stroke-linejoin="round"/></svg>
<div style="left:354.1px;top:653.9px;width:195.8px;height:50px;background:#fff;box-shadow:inset 0 0 0 2.500px #b9b9b9, inset 0 0 0 3.500px #e4e4e4;"></div>
<div style="left:399.6px;top:715.5px;width:146.8px;height:33px;background:#fff;border-radius:7px;box-shadow:0 0 0 1px #d6d6d6,0 1px 1.500px rgba(0,0,0,.22);"></div>
<div style="left:414.4px;top:718.4px;width:27.4px;height:27.4px;background:linear-gradient(135deg,#3a3a3a,#0c0c0c);box-shadow:inset 0 0 0 1.500px #111;"></div>
<div class="t" style="left:456.50px;top:721.55px;font-size:22.5px;line-height:22.5px;color:#1b1b1b;letter-spacing:-0.077px;">Solid</div>
<svg style="left:522.4px;top:720.5px;" width="16" height="23" viewBox="0 0 16 23"><path d="M2.500 8.5 8 2.500 13.500 8.5 M2.500 14.5 8 20.5 13.500 14.5" fill="none" stroke="#333" stroke-width="2" stroke-linecap="round" stroke-linejoin="round"/></svg>
<div style="left:354.1px;top:754.1px;width:195.8px;height:50px;background:#000;box-shadow:inset 0 0 0 2.500px #b9b9b9, inset 0 0 0 3.800px #f2f2f2;"></div>
<div style="left:354.1px;top:812.3px;width:195.8px;height:29.7px;background:linear-gradient(#e9e9e9,#f6f6f6 45%,#ececec);box-shadow:inset 0 0 0 2.200px #adadad;"></div>
<div class="t" style="left:391.00px;top:817.45px;font-size:22.5px;line-height:22.5px;color:#1b1b1b;letter-spacing:-0.041px;">100%/100%</div>
<div class="t" style="left:358.50px;top:862.88px;font-size:22px;line-height:22px;color:#8f8f8f;letter-spacing:-0.062px;">Drop Sh...</div>
<div style="left:472px;top:858.2px;width:39.8px;height:27.8px;background:linear-gradient(#e9e9e9,#f6f6f6 45%,#ececec);box-shadow:inset 0 0 0 2px #adadad;"></div>
<div style="left:511px;top:858.2px;width:40.9px;height:27.8px;background:linear-gradient(#e9e9e9,#f6f6f6 45%,#ececec);box-shadow:inset 0 0 0 2px #adadad;"></div>
<div style="left:484.5px;top:865px;width:11px;height:11px;background:#eee;box-shadow:inset 0 0 0 1.300px #666, 2px 2px 1.500px #9a9a9a;border-radius:1.500px;"></div>
<div class="t" style="left:523.50px;top:861.88px;font-size:22px;line-height:22px;color:#222;">...</div>
<div style="left:355.5px;top:899px;width:192.5px;height:26.5px;background:#fff;border-radius:7px;box-shadow:0 0 0 1px #d6d6d6,0 1px 1.500px rgba(0,0,0,.22);"></div>
<div style="left:375px;top:911px;width:90.5px;height:1.3px;background:#222;"></div>
<svg style="left:393.5px;top:905px;" width="12" height="14" viewBox="0 0 12 14"><path d="M6 1 10.500 7 6 13 1.500 7z" fill="#fff" stroke="#777" stroke-width="1.200"/><path d="M6 4v6" stroke="#777"/></svg>
<div class="t" style="left:474.50px;top:904.57px;font-size:20px;line-height:20px;color:#222;letter-spacing:-0.317px;">0.05</div>
<svg style="left:529px;top:903px;" width="14" height="19" viewBox="0 0 14 19"><path d="M2.500 7 7 2.500 11.500 7M2.500 12 7 16.500 11.500 12" fill="none" stroke="#333" stroke-width="1.900" stroke-linecap="round" stroke-linejoin="round"/></svg>
<div style="left:346.1px;top:946.3px;width:33.9px;height:31.6px;background:linear-gradient(#f5f5f5,#e9e9e9);box-shadow:inset 0 0 0 1.900px #acacac;"></div>
<div style="left:380px;top:946.3px;width:48px;height:31.6px;background:linear-gradient(#cfcfcf,#c2c2c2);box-shadow:inset 0 0 0 1.900px #acacac;"></div>
<div style="left:428px;top:946.3px;width:48.2px;height:31.6px;background:linear-gradient(#f5f5f5,#e9e9e9);box-shadow:inset 0 0 0 1.900px #acacac;"></div>
<div style="left:476.2px;top:946.3px;width:49.6px;height:31.6px;background:linear-gradient(#f5f5f5,#e9e9e9);box-shadow:inset 0 0 0 1.900px #acacac;"></div>
<div style="left:525.8px;top:946.3px;width:32.4px;height:31.6px;background:linear-gradient(#f5f5f5,#e9e9e9);box-shadow:inset 0 0 0 1.900px #acacac;"></div>
<svg style="left:357px;top:958.5px;" width="12" height="8" viewBox="0 0 12 8"><path d="M1 1.500H11V2.800H9.300L6 7 2.700 2.800H1z" fill="#111"/></svg>
<svg style="left:536.5px;top:958.5px;" width="12" height="8" viewBox="0 0 12 8"><path d="M1 1.500H11V2.800H9.300L6 7 2.700 2.800H1z" fill="#111"/></svg>
<svg style="left:394px;top:953px;" width="20" height="18" viewBox="0 0 20 18"><path d="M18.500 1V17L1.500 9z" fill="#111"/></svg>
<svg style="left:491px;top:953px;" width="20" height="18" viewBox="0 0 20 18"><path d="M2 1.500V16.500L18 9z" fill="#f4f4f4" stroke="#999" stroke-width="1.600" stroke-linejoin="round"/></svg>
<svg style="left:438px;top:953px;" width="30" height="18" viewBox="0 0 30 18"><g fill="none"><rect x="3" y="3" width="15" height="11.500" rx="5.750" stroke="#111" stroke-width="4.600"/><rect x="3" y="3" width="15" height="11.500" rx="5.750" stroke="#fff" stroke-width="1.300"/><rect x="11.500" y="3" width="15" height="11.500" rx="5.750" stroke="#111" stroke-width="4.600"/><rect x="11.500" y="3" width="15" height="11.500" rx="5.750" stroke="#fff" stroke-width="1.300"/><path d="M3 8.750A5.750 5.750 0 0 1 8.750 3H12.250A5.750 5.750 0 0 1 18 8.750" stroke="#111" stroke-width="4.600"/><path d="M3 8.750A5.750 5.750 0 0 1 8.750 3H12.250A5.750 5.750 0 0 1 18 8.750" stroke="#fff" stroke-width="1.300"/></g></svg>
<div style="left:344px;top:990.5px;width:214px;height:1.5px;background:#d6d6d6;"></div>
<div style="left:434px;top:991px;width:38px;height:15px;background:linear-gradient(#e8e8e8 0,#e8e8e8 45%,#f7f7f7 45%);box-shadow:inset 0 0 0 1.800px #b2b2b2;"></div>
<svg style="left:447px;top:995px;" width="12" height="8" viewBox="0 0 12 8"><path d="M1 1.500H11V2.800H9.300L6 7 2.700 2.800H1z" fill="#111"/></svg>
<div style="left:77px;top:1480px;width:2407px;height:120px;background:linear-gradient(#456480,#41607c 30%,#3f5e7a);border-radius:9px 9px 0 0;box-shadow:inset 0 1px 0 rgba(255,255,255,.10);"></div>
<div style="left:128.1px;top:1587.4px;width:8.4px;height:8.4px;background:#050505;border-radius:50%;"></div>
<div style="left:511.8px;top:1587.4px;width:8.4px;height:8.4px;background:#050505;border-radius:50%;"></div>
<div style="left:1419.7px;top:1587.4px;width:8.4px;height:8.4px;background:#050505;border-radius:50%;"></div>
<div style="left:1515.8px;top:1587.4px;width:8.4px;height:8.4px;background:#050505;border-radius:50%;"></div>
<div style="left:1611.8px;top:1587.4px;width:8.4px;height:8.4px;background:#050505;border-radius:50%;"></div>
<div style="left:1708px;top:1587.4px;width:8.4px;height:8.4px;background:#050505;border-radius:50%;"></div>
<div style="left:1803.8px;top:1587.4px;width:8.4px;height:8.4px;background:#050505;border-radius:50%;"></div>
<div style="left:1899.6px;top:1587.4px;width:8.4px;height:8.4px;background:#050505;border-radius:50%;"></div>
<div style="left:1996.1px;top:1587.4px;width:8.4px;height:8.4px;background:#050505;border-radius:50%;"></div>
<div style="left:1353.8px;top:1496px;width:2px;height:88px;background:#1c3854;"></div>
<div style="left:2069.7px;top:1496px;width:2px;height:88px;background:#1c3854;"></div>
<svg style="left:95.5px;top:1501.5px;" width="73" height="69" viewBox="0 0 73 69"><defs><linearGradient id="fd1" x1="0" x2="0" y1="0" y2="1"><stop offset="0" stop-color="#2ed0fb"/><stop offset="1" stop-color="#1b73ec"/></linearGradient><linearGradient id="fd2" x1="0" x2="0" y1="0" y2="1"><stop offset="0" stop-color="#f8f9fb"/><stop offset="1" stop-color="#d9e6f5"/></linearGradient><clipPath id="fdc"><rect width="73" height="69" rx="5"/></clipPath></defs>
<g clip-path="url(#fdc)"><rect width="73" height="69" fill="url(#fd1)"/><path d="M40 0H73V69H44C40 58 38 48 38 41H30C31 25 35 10 40 0z" fill="url(#fd2)"/>
<path d="M40 0C35 10 31 25 30 41H38C38 48 40 58 44 69" fill="none" stroke="#1a3f7a" stroke-width="1.600"/>
<path d="M13 44Q36 62 60 44" fill="none" stroke="#111" stroke-width="3" stroke-linecap="round"/><path d="M20 18V25M53 18V25" stroke="#111" stroke-width="3" stroke-linecap="round"/></g></svg>
<svg style="left:189px;top:1497px;" width="78" height="78" viewBox="0 0 78 78"><defs><linearGradient id="lp1" x1="0" x2="0" y1="0" y2="1"><stop offset="0" stop-color="#d5dde0"/><stop offset="1" stop-color="#6f787d"/></linearGradient><linearGradient id="lp2" x1="0" x2="0" y1="0" y2="1"><stop offset="0" stop-color="#b9c6ca"/><stop offset="1" stop-color="#7e898e"/></linearGradient></defs>
<circle cx="39" cy="39" r="38.500" fill="url(#lp1)"/><circle cx="39" cy="39" r="36.500" fill="none" stroke="#e8eef0" stroke-width="2.500" opacity=".85"/><circle cx="39" cy="39" r="34.500" fill="url(#lp2)"/>
<path d="M62.500 16.500C49 18.500 38.500 26.500 31.500 38L20.500 38.500 11.500 46.500 23.500 47.500C22 50 21 52 20.500 54.500L15.500 62.500 24 59 26 61.500 33.500 60.500C33 63 32.500 65 32.500 68.500L42 58 41.500 50C52.500 43 60.500 31 62.500 16.500z" fill="#3f4649"/><circle cx="47.500" cy="30" r="4.200" fill="#a9b4b8"/></svg>
<svg style="left:284px;top:1499px;" width="80" height="76" viewBox="0 0 80 76"><defs><linearGradient id="ms1" x1="0" x2="0" y1="0" y2="1"><stop offset="0" stop-color="#5fc2fb"/><stop offset="1" stop-color="#1e8cf4"/></linearGradient><linearGradient id="ms2" x1="0" x2="0" y1="0" y2="1"><stop offset="0" stop-color="#ffffff"/><stop offset="1" stop-color="#d3e6f7"/></linearGradient></defs>
<path d="M39 2C60 2 77 14 77 31S60 60 39 60C34 60 30 59.500 26 58.500 22 63 18 66 12 67 15 63 17 59 16.500 54 7 49 2 41 2 31 2 14 18 2 39 2z" fill="url(#ms1)"/>
<path d="M53 33C66 33 76 40 76 49.500 76 54 73 58 69 61 69 65 70 68 73 72 68 71 64 69 61 65.500 58.500 66 56 66 53 66 40 66 31 59 31 49.500S40 33 53 33z" fill="url(#ms2)"/>
<circle cx="42" cy="50" r="3.400" fill="#14539f"/><circle cx="53.500" cy="50" r="3.400" fill="#14539f"/><circle cx="65" cy="50" r="3.400" fill="#14539f"/></svg>
<svg style="left:381.5px;top:1497px;" width="78" height="78" viewBox="0 0 78 78"><defs><linearGradient id="sf1" x1="0" x2="0" y1="0" y2="1"><stop offset="0" stop-color="#1fc2f6"/><stop offset="1" stop-color="#1d6df2"/></linearGradient></defs>
<circle cx="39" cy="39" r="38.500" fill="#f2f3f5"/><circle cx="39" cy="39" r="35" fill="url(#sf1)"/><line x1="39" y1="6.500" x2="39" y2="13" stroke="#fff" stroke-width="1.100" transform="rotate(0.0 39 39)"/><line x1="39" y1="6.500" x2="39" y2="11" stroke="#fff" stroke-width="1.100" transform="rotate(7.5 39 39)"/><line x1="39" y1="6.500" x2="39" y2="13" stroke="#fff" stroke-width="1.100" transform="rotate(15.0 39 39)"/><line x1="39" y1="6.500" x2="39" y2="11" stroke="#fff" stroke-width="1.100" transform="rotate(22.5 39 39)"/><line x1="39" y1="6.500" x2="39" y2="13" stroke="#fff" stroke-width="1.100" transform="rotate(30.0 39 39)"/><line x1="39" y1="6.500" x2="39" y2="11" stroke="#fff" stroke-width="1.100" transform="rotate(37.5 39 39)"/><line x1="39" y1="6.500" x2="39" y2="13" stroke="#fff" stroke-width="1.100" transform="rotate(45.0 39 39)"/><line x1="39" y1="6.500" x2="39" y2="11" stroke="#fff" stroke-width="1.100" transform="rotate(52.5 39 39)"/><line x1="39" y1="6.500" x2="39" y2="13" stroke="#fff" stroke-width="1.100" transform="rotate(60.0 39 39)"/><line x1="39" y1="6.500" x2="39" y2="11" stroke="#fff" stroke-width="1.100" transform="rotate(67.5 39 39)"/><line x1="39" y1="6.500" x2="39" y2="13" stroke="#fff" stroke-width="1.100" transform="rotate(75.0 39 39)"/><line x1="39" y1="6.500" x2="39" y2="11" stroke="#fff" stroke-width="1.100" transform="rotate(82.5 39 39)"/><line x1="39" y1="6.500" x2="39" y2="13" stroke="#fff" stroke-width="1.100" transform="rotate(90.0 39 39)"/><line x1="39" y1="6.500" x2="39" y2="11" stroke="#fff" stroke-width="1.100" transform="rotate(97.5 39 39)"/><line x1="39" y1="6.500" x2="39" y2="13" stroke="#fff" stroke-width="1.100" transform="rotate(105.0 39 39)"/><line x1="39" y1="6.500" x2="39" y2="11" stroke="#fff" stroke-width="1.100" transform="rotate(112.5 39 39)"/><line x1="39" y1="6.500" x2="39" y2="13" stroke="#fff" stroke-width="1.100" transform="rotate(120.0 39 39)"/><line x1="39" y1="6.500" x2="39" y2="11" stroke="#fff" stroke-width="1.100" transform="rotate(127.5 39 39)"/><line x1="39" y1="6.500" x2="39" y2="13" stroke="#fff" stroke-width="1.100" transform="rotate(135.0 39 39)"/><line x1="39" y1="6.500" x2="39" y2="11" stroke="#fff" stroke-width="1.100" transform="rotate(142.5 39 39)"/><line x1="39" y1="6.500" x2="39" y2="13" stroke="#fff" stroke-width="1.100" transform="rotate(150.0 39 39)"/><line x1="39" y1="6.500" x2="39" y2="11" stroke="#fff" stroke-width="1.100" transform="rotate(157.5 39 39)"/><line x1="39" y1="6.500" x2="39" y2="13" stroke="#fff" stroke-width="1.100" transform="rotate(165.0 39 39)"/><line x1="39" y1="6.500" x2="39" y2="11" stroke="#fff" stroke-width="1.100" transform="rotate(172.5 39 39)"/><line x1="39" y1="6.500" x2="39" y2="13" stroke="#fff" stroke-width="1.100" transform="rotate(180.0 39 39)"/><line x1="39" y1="6.500" x2="39" y2="11" stroke="#fff" stroke-width="1.100" transform="rotate(187.5 39 39)"/><line x1="39" y1="6.500" x2="39" y2="13" stroke="#fff" stroke-width="1.100" transform="rotate(195.0 39 39)"/><line x1="39" y1="6.500" x2="39" y2="11" stroke="#fff" stroke-width="1.100" transform="rotate(202.5 39 39)"/><line x1="39" y1="6.500" x2="39" y2="13" stroke="#fff" stroke-width="1.100" transform="rotate(210.0 39 39)"/><line x1="39" y1="6.500" x2="39" y2="11" stroke="#fff" stroke-width="1.100" transform="rotate(217.5 39 39)"/><line x1="39" y1="6.500" x2="39" y2="13" stroke="#fff" stroke-width="1.100" transform="rotate(225.0 39 39)"/><line x1="39" y1="6.500" x2="39" y2="11" stroke="#fff" stroke-width="1.100" transform="rotate(232.5 39 39)"/><line x1="39" y1="6.500" x2="39" y2="13" stroke="#fff" stroke-width="1.100" transform="rotate(240.0 39 39)"/><line x1="39" y1="6.500" x2="39" y2="11" stroke="#fff" stroke-width="1.100" transform="rotate(247.5 39 39)"/><line x1="39" y1="6.500" x2="39" y2="13" stroke="#fff" stroke-width="1.100" transform="rotate(255.0 39 39)"/><line x1="39" y1="6.500" x2="39" y2="11" stroke="#fff" stroke-width="1.100" transform="rotate(262.5 39 39)"/><line x1="39" y1="6.500" x2="39" y2="13" stroke="#fff" stroke-width="1.100" transform="rotate(270.0 39 39)"/><line x1="39" y1="6.500" x2="39" y2="11" stroke="#fff" stroke-width="1.100" transform="rotate(277.5 39 39)"/><line x1="39" y1="6.500" x2="39" y2="13" stroke="#fff" stroke-width="1.100" transform="rotate(285.0 39 39)"/><line x1="39" y1="6.500" x2="39" y2="11" stroke="#fff" stroke-width="1.100" transform="rotate(292.5 39 39)"/><line x1="39" y1="6.500" x2="39" y2="13" stroke="#fff" stroke-width="1.100" transform="rotate(300.0 39 39)"/><line x1="39" y1="6.500" x2="39" y2="11" stroke="#fff" stroke-width="1.100" transform="rotate(307.5 39 39)"/><line x1="39" y1="6.500" x2="39" y2="13" stroke="#fff" stroke-width="1.100" transform="rotate(315.0 39 39)"/><line x1="39" y1="6.500" x2="39" y2="11" stroke="#fff" stroke-width="1.100" transform="rotate(322.5 39 39)"/><line x1="39" y1="6.500" x2="39" y2="13" stroke="#fff" stroke-width="1.100" transform="rotate(330.0 39 39)"/><line x1="39" y1="6.500" x2="39" y2="11" stroke="#fff" stroke-width="1.100" transform="rotate(337.5 39 39)"/><line x1="39" y1="6.500" x2="39" y2="13" stroke="#fff" stroke-width="1.100" transform="rotate(345.0 39 39)"/><line x1="39" y1="6.500" x2="39" y2="11" stroke="#fff" stroke-width="1.100" transform="rotate(352.5 39 39)"/><path d="M63 14 35 35 43 43z" fill="#f33a33"/><path d="M63 14 43 43 39 39z" fill="#c2211d"/><path d="M15 64 35 35 43 43z" fill="#f4f4f4"/><path d="M15 64 39 39 43 43z" fill="#c9c9c9"/></svg>
<svg style="left:480.5px;top:1500px;" width="72" height="72" viewBox="0 0 72 72"><rect width="72" height="72" rx="14" fill="#f6f6f6"/>
<circle cx="36" cy="36" r="29" fill="#db4437"/><path d="M36 36 10.900 21.500A29 29 0 0 0 32 64.700z" fill="#0f9d58"/><path d="M36 36 32 64.700A29 29 0 0 0 61.100 21.500H36z" fill="#ffcd40"/>
<path d="M36 36 10.900 21.500A29 29 0 0 1 61.100 21.500H36z" fill="#db4437"/><path d="M36 36 48 43 36.500 64.900 A29 29 0 0 1 22 61.500z" fill="#0f9d58" opacity="0"/>
<circle cx="36" cy="36" r="13.500" fill="#f1f1f1"/><circle cx="36" cy="36" r="10.800" fill="#4285f4"/></svg>
<svg style="left:572px;top:1490px;" width="86" height="92" viewBox="0 0 86 92"><defs><linearGradient id="ml1" x1="0" x2="0" y1="0" y2="1"><stop offset="0" stop-color="#2a7be0"/><stop offset=".55" stop-color="#6fb0ec"/><stop offset="1" stop-color="#cfe6f7"/></linearGradient></defs>
<g transform="translate(39.800,45.600) rotate(-9.400)"><rect x="-29.300" y="-36.300" width="58.600" height="72.600" fill="#fdfdfd"/><rect x="-29.600" y="-36.600" width="59.200" height="73.200" fill="none" stroke="#42617e" stroke-width="2.700" stroke-dasharray="0.010 4.420" stroke-linecap="round"/><rect x="-24.500" y="-31" width="49" height="61.500" fill="url(#ml1)"/>
<g transform="rotate(9.400)"><path d="M-1 2C-6 -6 -10 -12 -17 -25L-19 -22 -20.500 -18.500 -18.500 -14 -19.500 -10.500 -16.500 -6 -15.500 -1 -11.500 3 -7.500 7.500z" fill="#e9e6e0" stroke="#5a4632" stroke-width=".9" stroke-linejoin="round"/><path d="M-17 -25 -18.500 -28M-15 -24 -15.500 -28M-13 -22 -12.500 -26M-19 -22-21.500 -24" stroke="#5a4632" stroke-width="1"/>
<path d="M2 4C10 7 18 12 24 20L21 20.500 22.500 23 18.500 22 17.500 24.500 13 21 8 20 2.500 14.500 -2 10z" fill="#d9d3c8" stroke="#5a4632" stroke-width=".9" stroke-linejoin="round"/><path d="M-3 -1C0 2 6 5 12 9L6 11 0 8z" fill="#5a4028"/>
<path d="M-6 4 3 1 6 4 4 8 -2 12z" fill="#c99a52" stroke="#7a5a2a" stroke-width=".6"/><path d="M2 0 5.500 -1.500 6.500 1 4 3z" fill="#efe9dc" stroke="#5a4632" stroke-width=".6"/><path d="M-5 8 -12.500 11.500 -10 14 -9 18 -4.500 19 -1 20 1.500 16 0 11z" fill="#c9a05a" stroke="#7a5a2a" stroke-width=".7" stroke-linejoin="round"/></g></g>
<g fill="none" stroke="#4a6d9a" opacity=".6"><circle cx="61.800" cy="67.100" r="18.500" stroke-width="1.800"/><circle cx="61.800" cy="67.100" r="9.900" stroke-width="1.800"/><circle cx="61.800" cy="67.100" r="14" stroke-width="4" stroke-dasharray="2.500 2.200" opacity=".7"/></g><path d="M66 62C68.500 62 69.500 64 69.500 64 67.500 65 67.500 68 70 69 69 72 67 73.500 65.500 73 64 72.500 63.500 72.500 62 73 60 73.500 57.500 70 58 66.500 58.500 63.500 61 62.500 62.500 63 64 63.500 64.500 62 66 62zM65.500 58.500C65.500 60.500 64 61.800 62.500 61.800 62.500 60 64 58.500 65.500 58.500z" fill="#4a74ae" opacity=".75"/></svg>
<svg style="left:668px;top:1496px;" width="78" height="80" viewBox="0 0 78 80"><g transform="rotate(-4 39 40)"><rect x="8" y="12" width="66" height="62" rx="3" fill="#6c7880"/><rect x="5" y="6" width="66" height="64" rx="3" fill="#f7f7f7"/><path d="M5 9a3 3 0 0 1 3-3h60a3 3 0 0 1 3 3v17H5z" fill="#e9534f"/><rect x="5" y="64" width="66" height="6" rx="2" fill="#dcdcdc"/></g></svg>
<div class="t" style="left:684px;top:1504.500px;font-size:16.500px;line-height:17px;color:#fff;transform:rotate(-4deg);letter-spacing:.2px">AUG</div>
<div class="t" style="left:682px;top:1523px;font-size:44px;line-height:44px;color:#222;transform:rotate(-4deg);letter-spacing:-1px;font-weight:400">23</div>
<svg style="left:766px;top:1492px;" width="78" height="86" viewBox="0 0 78 86"><g transform="rotate(-5 39 43)"><rect x="10" y="7" width="59" height="73" rx="7" fill="#fafafa" stroke="#cfd4d8" stroke-width="1"/>
<circle cx="20" cy="24" r="4.600" fill="#3f82f7"/><circle cx="20" cy="38" r="4.600" fill="#ee4b40"/><circle cx="20" cy="52" r="4.600" fill="#f39a33"/><circle cx="20" cy="66" r="4.600" fill="#4a4f59"/>
<path d="M29 20H60M29 34H60M29 48H60M29 62H60" stroke="#b4b4b4" stroke-width="1.200"/></g></svg>
<svg style="left:860px;top:1491px;" width="82" height="88" viewBox="0 0 82 88"><g transform="rotate(-3 41 44)"><rect x="10" y="6" width="60" height="77" fill="#fcfcfa"/><rect x="10" y="80" width="60" height="3" fill="#d9b53a"/><rect x="10" y="6" width="60" height="15" fill="#fbcf3f"/><path d="M10 21H70" stroke="#d8d3c0" stroke-width="1" stroke-dasharray="1.500 1.500"/><path d="M12 28.0H68" stroke="#c9c9c9" stroke-width=".9"/><path d="M12 33.6H68" stroke="#c9c9c9" stroke-width=".9"/><path d="M12 39.2H68" stroke="#c9c9c9" stroke-width=".9"/><path d="M12 44.8H68" stroke="#c9c9c9" stroke-width=".9"/><path d="M12 50.4H68" stroke="#c9c9c9" stroke-width=".9"/><path d="M12 56.0H68" stroke="#c9c9c9" stroke-width=".9"/><path d="M12 61.6H68" stroke="#c9c9c9" stroke-width=".9"/><path d="M12 67.2H68" stroke="#c9c9c9" stroke-width=".9"/><path d="M12 72.8H68" stroke="#c9c9c9" stroke-width=".9"/></g></svg>
<svg style="left:957.5px;top:1497.5px;" width="78" height="78" viewBox="0 0 78 78"><defs><linearGradient id="pc1" x1="0" x2="0" y1="0" y2="1"><stop offset="0" stop-color="#d671fb"/><stop offset="1" stop-color="#832bc1"/></linearGradient></defs>
<circle cx="39" cy="39" r="38" fill="url(#pc1)"/><g fill="none" stroke="#f3e9f9" stroke-width="3.600"><path d="M27.500 56A20.500 20.500 0 1 1 50.500 56"/><path d="M31.500 47.500A11.500 11.500 0 1 1 46.500 47.500"/></g><circle cx="39" cy="38" r="5.200" fill="#ededed"/><path d="M34 49a5 5 0 0 1 10 0l-1.500 15a3.500 3.500 0 0 1-7 0z" fill="#ededed"/></svg>
<svg style="left:1048.7px;top:1492.6px;" width="86.8" height="86.8" viewBox="0 0 86.8 86.8"><circle cx="43.4" cy="43.4" r="43.4" fill="#000"/><circle cx="43.4" cy="43.4" r="36.300" fill="none" stroke="#fff" stroke-width="4.500"/><path d="M25.099999999999998 29.2H33.3L46.9 64.2H39.199999999999996z" fill="#fff"/><path d="M54.2 29.2H61.5L51.7 52.099999999999994 48.4 43.75z" fill="#fff"/></svg>
<svg style="left:1668.8px;top:1492.6px;" width="86.8" height="86.8" viewBox="0 0 86.8 86.8"><circle cx="43.4" cy="43.4" r="43.4" fill="#000"/><circle cx="43.4" cy="43.4" r="36.300" fill="none" stroke="#fff" stroke-width="4.500"/><path d="M25.099999999999998 29.2H33.3L46.9 64.2H39.199999999999996z" fill="#fff"/><path d="M54.2 29.2H61.5L51.7 52.099999999999994 48.4 43.75z" fill="#fff"/></svg>
<svg style="left:1150px;top:1497px;" width="78" height="78" viewBox="0 0 78 78"><defs><linearGradient id="as1" x1="0" x2="0" y1="0" y2="1"><stop offset="0" stop-color="#22c3fb"/><stop offset="1" stop-color="#1a63ea"/></linearGradient></defs><circle cx="39" cy="39" r="38.400" fill="url(#as1)"/>
<g stroke="#f4f7fb" stroke-width="5.600" stroke-linecap="round" fill="none"><path d="M43.500 17 23 53.500"/><path d="M34.500 17 55 53.500"/><path d="M15 45.500H40"/><path d="M52 45.500H63"/><path d="M19.500 59.500 21.500 56"/></g></svg>
<div style="left:1201.8px;top:1492px;width:34px;height:34px;background:#ef3e42;border-radius:50%;"></div>
<div class="t" style="left:1212.30px;top:1498.18px;font-size:24px;line-height:24px;color:#fff;">8</div>
<svg style="left:1245px;top:1499px;" width="78" height="74" viewBox="0 0 78 74"><defs><linearGradient id="sp1" x1="0" x2="0" y1="0" y2="1"><stop offset="0" stop-color="#c9d0d4"/><stop offset="1" stop-color="#7d7d7d"/></linearGradient><radialGradient id="sp2"><stop offset="0" stop-color="#8d8d8f"/><stop offset="1" stop-color="#5a5a5c"/></radialGradient></defs>
<rect x="1" y="2" width="76" height="70" rx="3" fill="url(#sp1)"/><rect x="36.200" y="5.500" width="5.600" height="8" rx="1.500" fill="#3a3a3c" transform="rotate(0 39 36)"/><rect x="36.200" y="5.500" width="5.600" height="8" rx="1.500" fill="#3a3a3c" transform="rotate(15 39 36)"/><rect x="36.200" y="5.500" width="5.600" height="8" rx="1.500" fill="#3a3a3c" transform="rotate(30 39 36)"/><rect x="36.200" y="5.500" width="5.600" height="8" rx="1.500" fill="#3a3a3c" transform="rotate(45 39 36)"/><rect x="36.200" y="5.500" width="5.600" height="8" rx="1.500" fill="#3a3a3c" transform="rotate(60 39 36)"/><rect x="36.200" y="5.500" width="5.600" height="8" rx="1.500" fill="#3a3a3c" transform="rotate(75 39 36)"/><rect x="36.200" y="5.500" width="5.600" height="8" rx="1.500" fill="#3a3a3c" transform="rotate(90 39 36)"/><rect x="36.200" y="5.500" width="5.600" height="8" rx="1.500" fill="#3a3a3c" transform="rotate(105 39 36)"/><rect x="36.200" y="5.500" width="5.600" height="8" rx="1.500" fill="#3a3a3c" transform="rotate(120 39 36)"/><rect x="36.200" y="5.500" width="5.600" height="8" rx="1.500" fill="#3a3a3c" transform="rotate(135 39 36)"/><rect x="36.200" y="5.500" width="5.600" height="8" rx="1.500" fill="#3a3a3c" transform="rotate(150 39 36)"/><rect x="36.200" y="5.500" width="5.600" height="8" rx="1.500" fill="#3a3a3c" transform="rotate(165 39 36)"/><rect x="36.200" y="5.500" width="5.600" height="8" rx="1.500" fill="#3a3a3c" transform="rotate(180 39 36)"/><rect x="36.200" y="5.500" width="5.600" height="8" rx="1.500" fill="#3a3a3c" transform="rotate(195 39 36)"/><rect x="36.200" y="5.500" width="5.600" height="8" rx="1.500" fill="#3a3a3c" transform="rotate(210 39 36)"/><rect x="36.200" y="5.500" width="5.600" height="8" rx="1.500" fill="#3a3a3c" transform="rotate(225 39 36)"/><rect x="36.200" y="5.500" width="5.600" height="8" rx="1.500" fill="#3a3a3c" transform="rotate(240 39 36)"/><rect x="36.200" y="5.500" width="5.600" height="8" rx="1.500" fill="#3a3a3c" transform="rotate(255 39 36)"/><rect x="36.200" y="5.500" width="5.600" height="8" rx="1.500" fill="#3a3a3c" transform="rotate(270 39 36)"/><rect x="36.200" y="5.500" width="5.600" height="8" rx="1.500" fill="#3a3a3c" transform="rotate(285 39 36)"/><rect x="36.200" y="5.500" width="5.600" height="8" rx="1.500" fill="#3a3a3c" transform="rotate(300 39 36)"/><rect x="36.200" y="5.500" width="5.600" height="8" rx="1.500" fill="#3a3a3c" transform="rotate(315 39 36)"/><rect x="36.200" y="5.500" width="5.600" height="8" rx="1.500" fill="#3a3a3c" transform="rotate(330 39 36)"/><rect x="36.200" y="5.500" width="5.600" height="8" rx="1.500" fill="#3a3a3c" transform="rotate(345 39 36)"/><circle cx="39" cy="36" r="25.500" fill="#3a3a3c"/><circle cx="39" cy="36" r="21" fill="url(#sp2)"/><circle cx="39" cy="36" r="17.500" fill="#2c2c2e"/>
<g stroke="#9a9a9c" stroke-width="6" stroke-linecap="butt"><path d="M39 36V17.500"/><path d="M39 36 55 45.200"/><path d="M39 36 23 45.200"/></g><circle cx="39" cy="36" r="3.500" fill="#c9c9cb"/><circle cx="39" cy="36" r="21" fill="none" stroke="#77777a" stroke-width="5"/></svg>
<div style="left:1298px;top:1492px;width:34px;height:34px;background:#ef3e42;border-radius:50%;"></div>
<div class="t" style="left:1308.50px;top:1498.18px;font-size:24px;line-height:24px;color:#fff;">2</div>
<svg style="left:1380px;top:1492px;" width="88" height="88" viewBox="0 0 88 88"><circle cx="44" cy="44" r="44" fill="#fff"/><g fill="none" stroke-linecap="round"><path d="M42 12.500A31.500 31.500 0 0 1 42 75.500" stroke="#3cc794" stroke-width="6.500"/><path d="M41 26.500A17.500 17.500 0 1 1 27 41" stroke="#fec42d" stroke-width="6.500"/></g><circle cx="44" cy="43.500" r="5.800" fill="#ee4460"/></svg>
<svg style="left:1479.4px;top:1495.7px;" width="81.2" height="81" viewBox="0 0 81.2 81"><rect width="81.200" height="81" rx="17" fill="#fff"/><path d="M17 23 41 4.500 39 28z" fill="#84bc35" stroke="#84bc35" stroke-width="2.500" stroke-linejoin="round"/><path d="M12 36 28 47 10.500 59z" fill="#fee02f" stroke="#fee02f" stroke-width="2.500" stroke-linejoin="round"/><path d="M66 33 70 57 53 45z" fill="#e1147e" stroke="#e1147e" stroke-width="2.500" stroke-linejoin="round"/><path d="M40 57 57 76H23z" fill="#094c96" stroke="#094c96" stroke-width="2.500" stroke-linejoin="round"/></svg>
<svg style="left:1572px;top:1492.5px;" width="88.5" height="87.5" viewBox="0 0 88.5 87.5"><rect width="88.500" height="87.500" rx="17" fill="#231f20"/><path d="M24 60.500a10.500 10.500 0 0 1-1.500-20.800 13 13 0 0 1 24.500-5 11.500 11.500 0 0 1 15 10.300 8.700 8.700 0 0 1-1.500 15.500z" fill="#fff"/><path d="M37 39h5.200l4.300 14 2.500-8h3.500l-5 14.500h-5z M50.500 39h5.200l-2.500 6.500z" fill="#231f20"/></svg>
<svg style="left:1772.6px;top:1500.4px;" width="70.7" height="70.4" viewBox="0 0 70.7 70.4"><rect width="70.700" height="70.400" rx="16" fill="#3a76f0"/><path d="M36 12A22.500 22.500 0 1 1 24.500 54.500L12.500 57.500 15.500 46A22.500 22.500 0 0 1 36 12z" fill="#fff"/><path d="M36 8.500A26 26 0 1 1 23.500 57.500L8.500 61.500 12.500 47A26 26 0 0 1 36 8.500z" fill="none" stroke="#fff" stroke-width="2.300" stroke-dasharray="5.500 2.600"/></svg>
<svg style="left:1868.4px;top:1500.4px;" width="71" height="71" viewBox="0 0 71 71"><g transform="scale(1.0000)"><rect width="71" height="71" rx="16.0" fill="#fff"/><rect x="20" y="11" width="39" height="48" rx="3" fill="#ca64ea"/><path d="M47 23H59V35H47z" fill="#ae4bd5"/><path d="M47 35H59V47H47z" fill="#9332bf"/><path d="M47 47H59V56a3 3 0 0 1-3 3H47z" fill="#7719aa"/><rect x="6" y="21" width="28" height="28" rx="2.500" fill="#7719aa"/><text x="20" y="42.600" text-anchor="middle" font-family="Liberation Sans, sans-serif" font-weight="700" font-size="21" fill="#fff">N</text></g></svg>
<svg style="left:1956px;top:1498px;" width="90" height="80" viewBox="0 0 90 80"><defs><linearGradient id="pv1" x1="0" x2="0" y1="0" y2="1"><stop offset="0" stop-color="#7fb1ec"/><stop offset=".42" stop-color="#cfe1f5"/><stop offset=".44" stop-color="#1f4c8e"/><stop offset=".56" stop-color="#3f74b5"/><stop offset=".66" stop-color="#e8f2f8"/><stop offset=".8" stop-color="#b9d3e2"/><stop offset="1" stop-color="#7a6a58"/></linearGradient><linearGradient id="pv2" x1="0" x2="1"><stop offset="0" stop-color="#5e564d"/><stop offset=".35" stop-color="#b9b0a2"/><stop offset=".7" stop-color="#8a8073"/><stop offset="1" stop-color="#4e473f"/></linearGradient><radialGradient id="pv3" cx=".5" cy=".4" r=".6"><stop offset="0" stop-color="#eef4f8"/><stop offset=".6" stop-color="#9db6cc"/><stop offset="1" stop-color="#6a5a4a"/></radialGradient>
<pattern id="pvsand" width="4" height="4" patternUnits="userSpaceOnUse"><rect width="4" height="4" fill="#c9a86a"/><rect width="2" height="2" fill="#8a6a3a"/><rect x="2" y="2" width="2" height="2" fill="#e6d3a0"/></pattern></defs>
<rect x="13.500" y="3.500" width="65.500" height="50" fill="#fbfbf7"/><rect x="16" y="6" width="60.500" height="45" fill="url(#pvsand)"/>
<g transform="rotate(-9.500 40 45)"><rect x="5" y="15" width="66" height="52" fill="#fdfdfb"/><rect x="8" y="18" width="60" height="46" fill="url(#pv1)"/><path d="M8 58C16 52 24 56 30 52 38 56 44 52 50 58L68 56V64H8z" fill="#7a6450"/><path d="M10 50C20 46 30 52 44 47 52 45 60 50 68 47" fill="none" stroke="#fff" stroke-width="3" opacity=".8"/></g>
<path d="M52 46V66C52 76 83.500 76 83.500 66V46z" fill="url(#pv2)"/><ellipse cx="67.800" cy="45.500" rx="15.700" ry="13.800" fill="#6b6257" stroke="#a9a296" stroke-width="2"/><ellipse cx="67.800" cy="46" rx="12" ry="10.500" fill="url(#pv3)"/><path d="M58 50C62 46 70 49 77 46L76 53C72 56 62 56 58 52z" fill="#7d6652" opacity=".9"/></svg>
<svg style="left:2102px;top:1498px;" width="76" height="69" viewBox="0 0 76 69"><rect x="5" y="1" width="66" height="30" fill="#fdfdfd" stroke="#e3e3e3"/><rect x="8" y="3.500" width="60" height="10" fill="none" stroke="#aaa" stroke-width=".6"/><path d="M17 8.500H36M42 12.500H54" stroke="#333" stroke-width="1.200"/><path d="M52 9H58M56 13 68 7M58 13 67 9" stroke="#555" stroke-width=".8"/>
<rect x="1" y="15" width="74" height="53" fill="#fdfdfd" stroke="#e3e3e3"/><rect x="4" y="18" width="68" height="47" fill="none" stroke="#bbb" stroke-width=".6"/>
<path d="M13 34.500 24 37 41 45 41 58 31 57 14 47z" fill="#efe6a6" stroke="#8a845a" stroke-width=".6"/><path d="M14 38 38 49M14 42 38 53M14 45.500 34 55" stroke="#b5ad76" stroke-width=".6"/>
<path d="M47 36 62 41 55 52 48 63 43 52z" fill="#e9e3b3" stroke="#8a845a" stroke-width=".5"/>
<path d="M32 40 53 22 57 24 37 43zM40 34 60 23 62 26 43 38zM33 38 50 47 49 51 32 42zM43 36 47 37 50 60 46 61z" fill="#d8a55c" stroke="#8a5f25" stroke-width=".6"/>
<path d="M14.500 33 28.500 19.500 38.500 27 25.500 40z" fill="#d8372c" stroke="#7a1a12" stroke-width=".6"/><path d="M19 29 32 17.500M23 34 36 22.500" stroke="#a3261d" stroke-width=".8"/><path d="M25.500 40 38.500 27 40 28.500 31.500 38.500 31 54 29.500 53.500 29.500 41z" fill="#4a4a4a"/><path d="M13 34.500 24 38.500 25.500 40 14.500 36z" fill="#cfcfcf" stroke="#888" stroke-width=".5"/>
<path d="M7 24H14M7 35H12M7 44H12M9 54H16M16 63H32M60 24H70M62 34H71M62 41H71M64 49H71M60 56H68" stroke="#777" stroke-width=".8"/></svg>
<svg style="left:2194.5px;top:1513px;" width="84" height="46" viewBox="0 0 84 46"><rect width="84" height="46" fill="#fcfcfc"/><rect width="84" height="1.800" fill="#8a2da5"/><rect y="1.800" width="84" height="7" fill="#f6f4f7"/><path d="M2 4H30M34 4H60M3 7H50" stroke="#c9c3cf" stroke-width=".8" stroke-dasharray="2 1.500"/><rect x="1" y="10" width="24" height="34" fill="#f5f5f5"/><path d="M3 13.500H20M3 16.500H20M3 19.500H20M3 22.500H17M3 25.500H20M3 28.500H15" stroke="#c9bfd6" stroke-width="1.100"/><rect x="3" y="12.500" width="3" height="2" fill="#6aa8f0"/><rect x="3" y="18.500" width="3" height="2" fill="#f5d76a"/><rect x="3" y="24.500" width="3" height="2" fill="#f0a24a"/>
<path d="M33 21 46 17 49 24 46 32 38 36 34 29z" fill="#f535cf"/><path d="M38 27H49V31H38z" fill="#f535cf"/><path d="M33 16 50 25" stroke="#3fd25f" stroke-width="1.600"/><path d="M41 30H47V40H41z" fill="#4fe070"/><path d="M35 33H39V42H35z" fill="#f535cf"/><path d="M28 25H31V28H28zM28 34H30V40H28z" fill="#f5e23a"/><path d="M47 22 56 18M47 27 57 24" stroke="#333" stroke-width=".9"/><path d="M48 24 53 28" stroke="#3cc8f0" stroke-width="1.500"/><path d="M64 17 70 14.500 74 18 68 24 62 21z" fill="#d8a55c"/><path d="M62.500 17 68 13 72 16 66 20z" fill="#d8372c"/><path d="M60 34C64 31 70 33 74 31L72 35 62 37z" fill="#8a3a1a"/></svg>
<svg style="left:2249px;top:1550.3px;" width="26.5" height="26.5" viewBox="0 0 26.5 26.5"><g transform="scale(0.3732)"><rect width="71" height="71" rx="17.4" fill="#fff"/><rect x="20" y="11" width="39" height="48" rx="3" fill="#ca64ea"/><path d="M47 23H59V35H47z" fill="#ae4bd5"/><path d="M47 35H59V47H47z" fill="#9332bf"/><path d="M47 47H59V56a3 3 0 0 1-3 3H47z" fill="#7719aa"/><rect x="6" y="21" width="28" height="28" rx="2.500" fill="#7719aa"/><text x="20" y="42.600" text-anchor="middle" font-family="Liberation Sans, sans-serif" font-weight="700" font-size="21" fill="#fff">N</text></g></svg>
<svg style="left:2290px;top:1513px;" width="84" height="46" viewBox="0 0 84 46"><rect width="84" height="46" fill="#fcfcfc"/><rect width="84" height="1.800" fill="#8a2da5"/><rect y="1.800" width="84" height="7" fill="#f6f4f7"/><path d="M2 4H30M34 4H60M3 7H50" stroke="#c9c3cf" stroke-width=".8" stroke-dasharray="2 1.500"/><rect x="1" y="10" width="24" height="34" fill="#f5f5f5"/><path d="M3 13.500H20M3 16.500H20M3 19.500H20M3 22.500H17M3 25.500H20M3 28.500H15" stroke="#c9bfd6" stroke-width="1.100"/><rect x="3" y="12.500" width="3" height="2" fill="#6aa8f0"/><rect x="3" y="18.500" width="3" height="2" fill="#f5d76a"/><rect x="3" y="24.500" width="3" height="2" fill="#f0a24a"/>
<path d="M33 21 46 17 49 24 46 32 38 36 34 29z" fill="#f535cf"/><path d="M38 27H49V31H38z" fill="#f535cf"/><path d="M33 16 50 25" stroke="#3fd25f" stroke-width="1.600"/><path d="M41 30H47V40H41z" fill="#4fe070"/><path d="M35 33H39V42H35z" fill="#f535cf"/><path d="M28 25H31V28H28zM28 34H30V40H28z" fill="#f5e23a"/><path d="M47 22 56 18M47 27 57 24" stroke="#333" stroke-width=".9"/><path d="M48 24 53 28" stroke="#3cc8f0" stroke-width="1.500"/><circle cx="73" cy="33" r="2" fill="none" stroke="#444" stroke-width="1.200"/><path d="M74 21H80M74 24H80" stroke="#3fd25f" stroke-width="1.500"/><path d="M74 22.500H80" stroke="#f23fc8" stroke-width="1.200"/><circle cx="60" cy="38" r="3" fill="none" stroke="#f5e23a" stroke-width="1.500"/></svg>
<svg style="left:2344.5px;top:1550.3px;" width="26.5" height="26.5" viewBox="0 0 26.5 26.5"><g transform="scale(0.3732)"><rect width="71" height="71" rx="17.4" fill="#fff"/><rect x="20" y="11" width="39" height="48" rx="3" fill="#ca64ea"/><path d="M47 23H59V35H47z" fill="#ae4bd5"/><path d="M47 35H59V47H47z" fill="#9332bf"/><path d="M47 47H59V56a3 3 0 0 1-3 3H47z" fill="#7719aa"/><rect x="6" y="21" width="28" height="28" rx="2.500" fill="#7719aa"/><text x="20" y="42.600" text-anchor="middle" font-family="Liberation Sans, sans-serif" font-weight="700" font-size="21" fill="#fff">N</text></g></svg>
<svg style="left:2394px;top:1490px;" width="70" height="86" viewBox="0 0 70 86"><defs><linearGradient id="tr1" x1="0" x2="1"><stop offset="0" stop-color="#c3ced6"/><stop offset=".3" stop-color="#f1f4f6"/><stop offset=".7" stop-color="#e2e8ec"/><stop offset="1" stop-color="#b9c5ce"/></linearGradient></defs>
<path d="M4 22 10 80C10 84 22 86 35 86S60 84 60 80L66 22z" fill="url(#tr1)" opacity=".93"/><ellipse cx="35" cy="22" rx="31.500" ry="8" fill="#dfe5ea" stroke="#b7c2cb" stroke-width="1.500"/>
<path d="M10 18 18 6 27 14 34 3 43 12 52 5 60 18C50 26 20 26 10 18z" fill="#eceff1" stroke="#a9b1b8" stroke-width="1"/><path d="M22 10 28 16 24 19z" fill="#3b7be0"/><path d="M40 8 47 13 41 17z" fill="#e0523b"/><path d="M31 14 37 9 38 18z" fill="#e8c22e"/></svg>
<svg style="left:0;top:120px" width="258" height="468" viewBox="0 120 258 468"><defs>
<linearGradient id="gtri" x1="0" x2="1" y1="0" y2="1"><stop offset="0" stop-color="#fff"/><stop offset="1" stop-color="#cfcfcf"/></linearGradient>
<linearGradient id="gcur" x1="0" x2="0" y1="0" y2="1"><stop offset="0" stop-color="#fff"/><stop offset=".6" stop-color="#fff"/><stop offset="1" stop-color="#bdbdbd"/></linearGradient>
<linearGradient id="glav" x1="0" x2="0" y1="0" y2="1"><stop offset="0" stop-color="#ececff"/><stop offset="1" stop-color="#b4b6f5"/></linearGradient>
<radialGradient id="gsph" cx=".35" cy=".3" r=".8"><stop offset="0" stop-color="#fff"/><stop offset=".5" stop-color="#cfd0ff"/><stop offset="1" stop-color="#9fa2ee"/></radialGradient>
<linearGradient id="ggray" x1="0" x2="1" y1="0" y2="1"><stop offset="0" stop-color="#bdbdbd"/><stop offset="1" stop-color="#f7f7f7"/></linearGradient>
<linearGradient id="gskin" x1="0" x2="1"><stop offset="0" stop-color="#f8c891"/><stop offset="1" stop-color="#e9a768"/></linearGradient>
<linearGradient id="gtan" x1="0" x2="1" y1="0" y2="1"><stop offset="0" stop-color="#f6cfa4"/><stop offset="1" stop-color="#d99552"/></linearGradient>
<linearGradient id="gor" x1="0" x2="1"><stop offset="0" stop-color="#d9832c"/><stop offset="1" stop-color="#f3c391"/></linearGradient>
<radialGradient id="glens" cx=".4" cy=".35" r=".7"><stop offset="0" stop-color="#fff"/><stop offset="1" stop-color="#d5d5d5"/></radialGradient>
</defs><path d="M23.2 129.3 L23.2 156.1 L30.4 150.1 L34.5 160.3 L38.7 159.0 L34.5 149.2 L42.9 147.2z" fill="url(#gcur)" stroke="#111" stroke-width="2" stroke-linejoin="round"/><path d="M79.500 150C77 146 74.500 143.500 74 141.500 74 139.500 77 139 79 141L83 146.500 84.500 131.500C84.800 128.500 88.500 128.500 88.800 131.500L89.800 142 91.500 128.500C92 125.500 96 126 95.800 129L95.300 142.500 98.500 131.500C99.300 128.800 103 129.500 102.500 132.500L100.500 144.500 103.800 138.500C105 136 108.500 137.500 107.500 140.500 105.500 146.500 104.500 153 102.500 158 100.500 163 96 165.500 91.500 165.500 85.500 165.500 82 158 79.500 150z" fill="url(#gskin)" stroke="#111" stroke-width="2" stroke-linejoin="round"/><path d="M125.4 157.9V168.8H114.2z" fill="url(#gtri)" stroke="#111" stroke-width="1.800" stroke-linejoin="round"/><path d="M156.9 129.5V133" fill="none" stroke="#1d3d7c" stroke-width="5.400" stroke-linecap="round" stroke-linejoin="round"/><path d="M156.9 129.5V133" fill="none" stroke="#bcd6fb" stroke-width="2.700" stroke-linecap="round" stroke-linejoin="round"/><path d="M156.9 161V162" fill="none" stroke="#1d3d7c" stroke-width="5.400" stroke-linecap="round" stroke-linejoin="round"/><path d="M156.9 161V162" fill="none" stroke="#bcd6fb" stroke-width="2.700" stroke-linecap="round" stroke-linejoin="round"/><path d="M134.4 144.2A22.500 8.300 0 0 1 179.4 144.2" fill="none" stroke="#1d3d7c" stroke-width="5.400" stroke-linecap="round" stroke-linejoin="round"/><path d="M134.4 144.2A22.500 8.300 0 0 1 179.4 144.2" fill="none" stroke="#bcd6fb" stroke-width="2.700" stroke-linecap="round" stroke-linejoin="round"/><circle cx="156.9" cy="146" r="12.700" fill="url(#gsph)" stroke="#111a3a" stroke-width="1.800"/><path d="M134.4 144.2A22.500 8.300 0 0 0 154.9 152.45" fill="none" stroke="#1d3d7c" stroke-width="5.400" stroke-linecap="round" stroke-linejoin="round"/><path d="M134.4 144.2A22.500 8.300 0 0 0 154.9 152.45" fill="none" stroke="#bcd6fb" stroke-width="2.700" stroke-linecap="round" stroke-linejoin="round"/><path d="M179.4 144.2A22.500 8.300 0 0 1 165.4 151.9" fill="none" stroke="#1d3d7c" stroke-width="5.400" stroke-linecap="round" stroke-linejoin="round"/><path d="M179.4 144.2A22.500 8.300 0 0 1 165.4 151.9" fill="none" stroke="#bcd6fb" stroke-width="2.700" stroke-linecap="round" stroke-linejoin="round"/><path d="M150.4 146 157.9 152.4 150.4 158.5" fill="none" stroke="#1d3d7c" stroke-width="5.400" stroke-linecap="round" stroke-linejoin="round"/><path d="M150.4 146 157.9 152.4 150.4 158.5" fill="none" stroke="#bcd6fb" stroke-width="2.700" stroke-linecap="round" stroke-linejoin="round"/><path d="M216.500 148 227.500 158.500" stroke="#111" stroke-width="8.500" stroke-linecap="round"/><path d="M219.500 151 227.300 158.300" stroke="url(#gtan)" stroke-width="5.300" stroke-linecap="round"/><path d="M214.500 146.500 218.500 150.500" stroke="#555" stroke-width="4"/><circle cx="208.900" cy="140.600" r="9.400" fill="url(#glens)" stroke="#111" stroke-width="2"/><path d="M204.500 140.600H213.300M208.900 136.200V145" stroke="#333" stroke-width="1.800"/><text x="32" y="210.700" text-anchor="middle" font-family="Liberation Serif, serif" font-weight="700" font-size="41.500" fill="url(#glav)" stroke="#0e1b4d" stroke-width="1.400" stroke-linejoin="round">T</text><path d="M81.500 181H112.500V206.500H87L72 212.300 81.500 203z" fill="url(#ggray)" stroke="#111" stroke-width="2" stroke-linejoin="round"/><path d="M88 190.800H103.500M88 195H103.500" stroke="#111" stroke-width="2"/><path d="M125.4 208.0V218.9H114.2z" fill="url(#gtri)" stroke="#111" stroke-width="1.800" stroke-linejoin="round"/><path d="M146 188.500 164 205.500M164 188.500 146 205.500" fill="none" stroke="#0e1b4d" stroke-width="5.2" stroke-linecap="round" stroke-linejoin="round"/><path d="M146 188.500 164 205.500M164 188.500 146 205.500" fill="none" stroke="#dcdcff" stroke-width="2.4" stroke-linecap="round" stroke-linejoin="round"/><path d="M198.500 183 212 177 225.500 183V199L212 205.500 198.500 199z" fill="#d6d7ff" stroke="#3a1f14" stroke-width="1.800" stroke-linejoin="round"/><path d="M212 189.500V205.500" stroke="#fff" stroke-width="1"/><path d="M198.500 183 212 189.500 225.500 183 212 177z" fill="#f1f1ff"/><path d="M212 189.500 225.500 183V199L212 205.500z" fill="#b9bbf7"/><path d="M198.500 183 212 177 225.500 183V199L212 205.500 198.500 199z" fill="none" stroke="#3a1f14" stroke-width="1.800" stroke-linejoin="round"/><path d="M199 206.500 206 203.500 212 206.500 218 203.500 225.500 206.500 212 213.500z" fill="#d6d7ff" stroke="#0e1b4d" stroke-width="1.500" stroke-linejoin="round"/><path d="M235 188.500V209M229.500 204.500 235 210.500 240.500 204.500" fill="none" stroke="#3d67a8" stroke-width="5" stroke-linecap="round" stroke-linejoin="round"/><path d="M235 188.500V209M229.500 204.500 235 210.500 240.500 204.500" fill="none" stroke="#bcd6fb" stroke-width="2.2" stroke-linecap="round" stroke-linejoin="round"/><path d="M18.500 234 44 259.500" fill="none" stroke="#0e1b4d" stroke-width="5.6" stroke-linecap="round" stroke-linejoin="round"/><path d="M18.500 234 44 259.500" fill="none" stroke="#cfd0ff" stroke-width="3.0" stroke-linecap="round" stroke-linejoin="round"/><path d="M79.500 237.500 104 261.500" fill="none" stroke="#0e1b4d" stroke-width="5.6" stroke-linecap="round" stroke-linejoin="round"/><path d="M79.500 237.500 104 261.500" fill="none" stroke="#cfd0ff" stroke-width="3.0" stroke-linecap="round" stroke-linejoin="round"/><path d="M86.500 230.500 111 254.500" fill="none" stroke="#0e1b4d" stroke-width="5.6" stroke-linecap="round" stroke-linejoin="round"/><path d="M86.500 230.500 111 254.500" fill="none" stroke="#cfd0ff" stroke-width="3.0" stroke-linecap="round" stroke-linejoin="round"/><rect x="141.500" y="235.700" width="31" height="22.600" fill="#cfd0ff" stroke="#111" stroke-width="2"/><rect x="143.300" y="237.500" width="27.400" height="19" fill="none" stroke="#fff" stroke-width="1.300"/><rect x="201.600" y="235.700" width="31" height="22.600" rx="7" fill="#cfd0ff" stroke="#0e1b4d" stroke-width="2"/><rect x="203.400" y="237.500" width="27.400" height="19" rx="5.500" fill="none" stroke="#fff" stroke-width="1.200" opacity=".8"/><circle cx="31" cy="296.900" r="14.700" fill="#cfd0ff" stroke="#0e1b4d" stroke-width="2"/><circle cx="31" cy="296.900" r="13" fill="none" stroke="#fff" stroke-width="1.100" opacity=".8"/><ellipse cx="94" cy="297.800" rx="16.200" ry="11.800" fill="#cfd0ff" stroke="#0e1b4d" stroke-width="2"/><ellipse cx="94" cy="297.800" rx="14.500" ry="10.100" fill="none" stroke="#fff" stroke-width="1.100" opacity=".8"/><path d="M141 284.500C155 283 169.500 291.500 170.500 306H146.500z" fill="#cfd0ff"/><path d="M139.500 283.300C156 280.500 171 291 170.800 305.500" fill="none" stroke="#111" stroke-width="2.300" stroke-linecap="round"/><path d="M187.4 307.9V318.79999999999995H176.2z" fill="url(#gtri)" stroke="#111" stroke-width="1.800" stroke-linejoin="round"/><path d="M196 292.500C203 297 211 299.500 220 298.500 229 297.500 236 292 233 287 230 282.500 220.500 283.500 216.500 289 213 294.500 218 301 224 304.500 228 307 232.500 308.500 236.500 309.500" fill="none" stroke="#0e1b4d" stroke-width="5" stroke-linecap="round" stroke-linejoin="round"/><path d="M196 292.500C203 297 211 299.500 220 298.500 229 297.500 236 292 233 287 230 282.500 220.500 283.500 216.500 289 213 294.500 218 301 224 304.500 228 307 232.500 308.500 236.500 309.500" fill="none" stroke="#cfd0ff" stroke-width="2.3" stroke-linecap="round" stroke-linejoin="round"/><path d="M15.200 359V347.200L24.600 332 31.300 349C32 342 36 337 40.500 337S49 341 49 347V359z" fill="#cfd0ff" stroke="#111" stroke-width="2" stroke-linejoin="miter"/><path d="M17 357.200V347.700L24.300 336 31 353C32.500 344 36.500 339 40.500 339S47.200 342 47.200 347V357.200z" fill="none" stroke="#fff" stroke-width="1.100" opacity=".85"/><path d="M76.800 331.500 91.700 343.800 115 339.800 102.200 361.500 76.800 350.500z" fill="#cfd0ff" stroke="#0e1b4d" stroke-width="2" stroke-linejoin="round" /><path d="M78.700 335.500 91.200 345.800 111.500 342.300 101.500 359 78.700 349.300z" fill="none" stroke="#fff" stroke-width="1" opacity=".8"/><path d="M125.4 358.3V369.2H114.2z" fill="url(#gtri)" stroke="#111" stroke-width="1.800" stroke-linejoin="round"/><path d="M141.800 331.500 154.500 341.800 175 338.500 163.500 359.800 141.800 349z" fill="none" stroke="#0e1b4d" stroke-width="7.600" stroke-linejoin="round"/><path d="M141.800 331.500 154.500 341.800 175 338.500 163.500 359.800 141.800 349z" fill="none" stroke="#b9bbf7" stroke-width="4.200" stroke-linejoin="round"/><path d="M202.600 345.600 210.700 331.500H228L236.200 345.600 228 360.200H210.700z" fill="#cfd0ff" stroke="#0e1b4d" stroke-width="2" stroke-linejoin="round" /><path d="M204.700 345.600 211.700 333.300H227L234 345.600 227 358.400H211.700z" fill="none" stroke="#fff" stroke-width="1" opacity=".8"/><path d="M32.7 397.0 L32.5 397.1 L32.2 397.1 L31.9 397.2 L31.6 397.1 L31.3 397.0 L31.0 396.9 L30.7 396.6 L30.5 396.4 L30.2 396.1 L30.1 395.7 L30.0 395.3 L29.9 394.9 L29.9 394.4 L30.0 393.9 L30.2 393.5 L30.5 393.1 L30.8 392.7 L31.2 392.3 L31.6 392.0 L32.2 391.8 L32.7 391.6 L33.3 391.6 L33.9 391.6 L34.6 391.7 L35.2 391.9 L35.8 392.3 L36.3 392.7 L36.8 393.2 L37.2 393.8 L37.5 394.5 L37.7 395.2 L37.8 395.9 L37.8 396.7 L37.7 397.5 L37.4 398.3 L37.0 399.0 L36.5 399.7 L35.9 400.3 L35.2 400.9 L34.4 401.3 L33.5 401.6 L32.6 401.8 L31.6 401.8 L30.7 401.7 L29.7 401.4 L28.8 401.0 L28.0 400.4 L27.2 399.7 L26.5 398.9 L26.0 398.0 L25.6 397.0 L25.3 395.9 L25.2 394.8 L25.3 393.6 L25.6 392.5 L26.0 391.4 L26.6 390.4 L27.3 389.5 L28.2 388.6 L29.3 387.9 L30.4 387.4 L31.6 387.0 L32.9 386.9 L34.2 386.9 L35.5 387.1 L36.8 387.5 L38.0 388.1 L39.1 388.9 L40.1 389.9 L41.0 391.0 L41.7 392.3 L42.2 393.6 L42.5 395.1 L42.5 396.5 L42.4 398.0 L42.0 399.5 L41.4 400.9 L40.6 402.2 L39.6 403.4 L38.4 404.4 L37.0 405.3 L35.5 405.9 L34.0 406.3 L32.3 406.5 L30.7 406.4 L29.0 406.1 L27.4 405.6 L25.9 404.7 L24.5 403.7 L23.3 402.5 L22.3 401.0 L21.4 399.4 L20.9 397.7 L20.6 396.0 L20.5 394.1 L20.7 392.3 L21.3 390.5 L22.0 388.8 L23.1 387.2 L24.4 385.8 L25.8 384.5 L27.5 383.5 L29.3 382.8 L31.3 382.3 L33.3 382.1 L35.3 382.2 L37.3 382.7 L39.2 383.4 L41.0 384.4 L42.6 385.7 L44.1 387.2 L45.3 389.0 L46.2 390.9 L46.9 392.9 L47.2 395.1 L47.2 397.3 L46.9 399.5 L46.3 401.6 L45.3 403.6 L44.0 405.5 L42.5 407.1 L40.7 408.6 L38.7 409.7 L36.5 410.6 L34.3 411.1 L31.9 411.3 L29.5 411.1 L27.2 410.5 L25.0 409.6 L22.9 408.4 L21.0 406.9 L19.3 405.1 L17.9 403.0 L16.9 400.8 L16.1 398.3 L15.8 395.8 L15.8 393.3 L16.2 390.8 L17.0 388.3 L18.2 386.0 L19.7 383.8 L21.5 381.9 L23.6 380.3 L25.9 379.0 L28.4 378.1 L31.1 377.5 L33.8 377.4 L36.5 377.6 L39.2 378.3 L41.7 379.3 L44.1 380.8 L46.2 382.6 L48.1 384.7 L49.7 387.1 L50.8 389.6 L51.6 392.4 L52.0 395.3" fill="none" stroke="#0e1b4d" stroke-width="5.400" stroke-linecap="round"/><path d="M32.7 397.0 L32.5 397.1 L32.2 397.1 L31.9 397.2 L31.6 397.1 L31.3 397.0 L31.0 396.9 L30.7 396.6 L30.5 396.4 L30.2 396.1 L30.1 395.7 L30.0 395.3 L29.9 394.9 L29.9 394.4 L30.0 393.9 L30.2 393.5 L30.5 393.1 L30.8 392.7 L31.2 392.3 L31.6 392.0 L32.2 391.8 L32.7 391.6 L33.3 391.6 L33.9 391.6 L34.6 391.7 L35.2 391.9 L35.8 392.3 L36.3 392.7 L36.8 393.2 L37.2 393.8 L37.5 394.5 L37.7 395.2 L37.8 395.9 L37.8 396.7 L37.7 397.5 L37.4 398.3 L37.0 399.0 L36.5 399.7 L35.9 400.3 L35.2 400.9 L34.4 401.3 L33.5 401.6 L32.6 401.8 L31.6 401.8 L30.7 401.7 L29.7 401.4 L28.8 401.0 L28.0 400.4 L27.2 399.7 L26.5 398.9 L26.0 398.0 L25.6 397.0 L25.3 395.9 L25.2 394.8 L25.3 393.6 L25.6 392.5 L26.0 391.4 L26.6 390.4 L27.3 389.5 L28.2 388.6 L29.3 387.9 L30.4 387.4 L31.6 387.0 L32.9 386.9 L34.2 386.9 L35.5 387.1 L36.8 387.5 L38.0 388.1 L39.1 388.9 L40.1 389.9 L41.0 391.0 L41.7 392.3 L42.2 393.6 L42.5 395.1 L42.5 396.5 L42.4 398.0 L42.0 399.5 L41.4 400.9 L40.6 402.2 L39.6 403.4 L38.4 404.4 L37.0 405.3 L35.5 405.9 L34.0 406.3 L32.3 406.5 L30.7 406.4 L29.0 406.1 L27.4 405.6 L25.9 404.7 L24.5 403.7 L23.3 402.5 L22.3 401.0 L21.4 399.4 L20.9 397.7 L20.6 396.0 L20.5 394.1 L20.7 392.3 L21.3 390.5 L22.0 388.8 L23.1 387.2 L24.4 385.8 L25.8 384.5 L27.5 383.5 L29.3 382.8 L31.3 382.3 L33.3 382.1 L35.3 382.2 L37.3 382.7 L39.2 383.4 L41.0 384.4 L42.6 385.7 L44.1 387.2 L45.3 389.0 L46.2 390.9 L46.9 392.9 L47.2 395.1 L47.2 397.3 L46.9 399.5 L46.3 401.6 L45.3 403.6 L44.0 405.5 L42.5 407.1 L40.7 408.6 L38.7 409.7 L36.5 410.6 L34.3 411.1 L31.9 411.3 L29.5 411.1 L27.2 410.5 L25.0 409.6 L22.9 408.4 L21.0 406.9 L19.3 405.1 L17.9 403.0 L16.9 400.8 L16.1 398.3 L15.8 395.8 L15.8 393.3 L16.2 390.8 L17.0 388.3 L18.2 386.0 L19.7 383.8 L21.5 381.9 L23.6 380.3 L25.9 379.0 L28.4 378.1 L31.1 377.5 L33.8 377.4 L36.5 377.6 L39.2 378.3 L41.7 379.3 L44.1 380.8 L46.2 382.6 L48.1 384.7 L49.7 387.1 L50.8 389.6 L51.6 392.4 L52.0 395.3" fill="none" stroke="#b9bbf7" stroke-width="3" stroke-linecap="round"/><path d="M89.500 392.500 96.500 386.500 108.500 404.500 110 408.500C113 409.500 114 412.500 111.500 414.500 109 416.500 106 415 106 412L102.500 410z" fill="url(#glav)" stroke="#0e1b4d" stroke-width="1.800" stroke-linejoin="round"/><path d="M75 381C77 376.500 84 376 88 379.500L96.500 387C99 389.500 98.500 392 96 394.500L90 399.500C87.500 401.500 85 401 83 399L76 390C73.500 387 73.500 384 75 381z" fill="#4a4a4d" stroke="#111" stroke-width="1.800"/><path d="M78 380.500C81 378 85 379 87.500 381.500" stroke="#9a9a9d" stroke-width="2.500" fill="none" stroke-linecap="round"/><path d="M80.500 394.500 92.500 384.500M84 398 95.500 388.500" stroke="#222" stroke-width="1.500"/><path d="M153.500 396 171 413.500" stroke="#111" stroke-width="7" stroke-linecap="round"/><path d="M155 397 171 413" stroke="#b9bbf7" stroke-width="3.200" stroke-linecap="round"/><path d="M145.500 377.500 149.700 384.800 158 383.800 153.200 391 156.300 399 148.300 396.500 141.500 401.500 141.800 393 135 388 143 386z" fill="#cfd0ff" stroke="#111" stroke-width="1.800" stroke-linejoin="round"/><path d="M197.0 379.5 L197.0 404.2 L203.6 398.6 L207.4 408.0 L211.3 406.8 L207.4 397.8 L215.1 396.0z" fill="url(#gcur)" stroke="#111" stroke-width="2" stroke-linejoin="round"/><path d="M215.500 404C221 396 235 395.500 240.500 404 235 412.500 221 412 215.500 404z" fill="#fff" stroke="#0e1b4d" stroke-width="1.800"/><circle cx="228" cy="403.500" r="5.600" fill="#3f6fb3" stroke="#1b3566" stroke-width="1.200"/><circle cx="228" cy="403.500" r="2.400" fill="#0d1b33"/><circle cx="229.800" cy="401.500" r="1.300" fill="#fff"/><rect x="25.500" y="441.500" width="25.500" height="21" fill="#d6d7ff" stroke="#0e1b4d" stroke-width="1.800"/><rect x="25.500" y="441.500" width="13.500" height="13" fill="url(#gor)" stroke="#0e1b4d" stroke-width="1.500"/><rect x="16.500" y="432.500" width="23" height="22.500" fill="none" stroke="#111" stroke-width="2"/><rect x="13.6" y="429.7" width="5.2" height="5.2" fill="#bfe0fb" stroke="#2a4f8f" stroke-width="1.300"/><rect x="37.4" y="429.7" width="5.2" height="5.2" fill="#bfe0fb" stroke="#2a4f8f" stroke-width="1.300"/><rect x="13.6" y="452.9" width="5.2" height="5.2" fill="#bfe0fb" stroke="#2a4f8f" stroke-width="1.300"/><rect x="37.4" y="452.9" width="5.2" height="5.2" fill="#bfe0fb" stroke="#2a4f8f" stroke-width="1.300"/><path d="M72.500 442 104.500 431 97.500 461" fill="none" stroke="#8a8a8a" stroke-width="1.500"/><path d="M75.500 445.500 102.500 437.500 96 459H75.500z" fill="#d6d7ff" stroke="#9fa2d8" stroke-width="1.200"/><path d="M72.500 442V461.500H97.500" fill="none" stroke="#111" stroke-width="2.200"/><rect x="69.4" y="439.4" width="5.2" height="5.2" fill="#bfe0fb" stroke="#2a4f8f" stroke-width="1.300"/><rect x="69.4" y="459.4" width="5.2" height="5.2" fill="#bfe0fb" stroke="#2a4f8f" stroke-width="1.300"/><rect x="95.4" y="459.4" width="5.2" height="5.2" fill="#bfe0fb" stroke="#2a4f8f" stroke-width="1.300"/><path d="M105.5 426.5 L105.5 450.1 L111.8 444.8 L115.4 453.8 L119.1 452.6 L115.4 444.0 L122.8 442.3z" fill="url(#gcur)" stroke="#111" stroke-width="2" stroke-linejoin="round"/><path d="M158 431.500C166 433 171.500 439.500 171.500 447.500 171.500 456.500 164.500 463 156 463S140 456.500 140 447.500C140 442.500 142 438.500 145.500 436" fill="none" stroke="#0e1b4d" stroke-width="6" /><path d="M158 431.500C166 433 171.500 439.500 171.500 447.500 171.500 456.500 164.500 463 156 463S140 456.500 140 447.500C140 442.500 142 438.500 145.500 436" fill="none" stroke="#c3c5fb" stroke-width="3.400"/><path d="M141 430.500H151V440.500" fill="none" stroke="#0e1b4d" stroke-width="6" stroke-linejoin="miter"/><path d="M141 430.500H151V440.500" fill="none" stroke="#c3c5fb" stroke-width="3.400"/><path d="M150 431.500 142.500 439" stroke="#0e1b4d" stroke-width="6"/><path d="M150 431.500 142.500 439" stroke="#c3c5fb" stroke-width="3.400"/><rect x="153.500" y="443.500" width="5" height="5" fill="#fff" stroke="#111" stroke-width="1.200"/><path d="M199.500 436.500 210.500 447.500 199.500 458z" fill="#cfd0ff" stroke="#0e1b4d" stroke-width="2" stroke-linejoin="round" /><path d="M234.500 436.500 223.500 447.500 234.500 458z" fill="#cfd0ff" stroke="#0e1b4d" stroke-width="2" stroke-linejoin="round" /><path d="M217 432.500V437.500M217 444.500V450.500M217 457.500V462" fill="none" stroke="#0e1b4d" stroke-width="4.6" stroke-linecap="round" stroke-linejoin="round"/><path d="M217 432.500V437.500M217 444.500V450.500M217 457.500V462" fill="none" stroke="#bfe0fb" stroke-width="2" stroke-linecap="round" stroke-linejoin="round"/><path d="M9 512.500 36 489 36.500 500.500z" fill="url(#glav)" stroke="#0e1b4d" stroke-width="1.800" stroke-linejoin="round"/><path d="M29 490 36 478.500H57.500L38.500 496.500z" fill="#55575c" stroke="#0e1b4d" stroke-width="1.800" stroke-linejoin="round"/><path d="M40 481 50 480 38 491z" fill="#b8babd"/><path d="M29.500 489.500C32 488 37 491 38.500 496" fill="#e8e8e8" stroke="#0e1b4d" stroke-width="1.500"/><path d="M83 479 93.500 489.500 106 478" fill="none" stroke="#bdbdbd" stroke-width="4.200" stroke-linecap="round"/><path d="M83 479 93.500 489.500 106 478" fill="none" stroke="#f7f7fb" stroke-width="2" stroke-linecap="round"/><path d="M75 509.500 94 491.500 110 506.500" fill="none" stroke="#0e1b4d" stroke-width="5.4" stroke-linecap="round" stroke-linejoin="miter"/><path d="M75 509.500 94 491.500 110 506.500" fill="none" stroke="#b9bbf7" stroke-width="2.6" stroke-linecap="round" stroke-linejoin="miter"/><path d="M147 491 177 497C174 492.500 165 491 152 489.500z" fill="#e6e6e6" stroke="#111" stroke-width="1.600" stroke-linejoin="round"/><path d="M150 493.500 172 514.500C168 516 163 513 158 507L146 496z" fill="#d8d8d8" stroke="#111" stroke-width="1.600" stroke-linejoin="round"/><circle cx="144.500" cy="483.500" r="5.600" fill="#fff" stroke="#111" stroke-width="5.200"/><circle cx="144.500" cy="483.500" r="5.600" fill="none" stroke="#b9bbf7" stroke-width="2.600"/><circle cx="138" cy="498" r="5.600" fill="#fff" stroke="#111" stroke-width="5.200"/><circle cx="138" cy="498" r="5.600" fill="none" stroke="#b9bbf7" stroke-width="2.600"/><circle cx="154.500" cy="495" r="1" fill="#111"/><path d="M201 510.500V500C201 489 209 481.500 220 481.500H237" fill="none" stroke="#0e1b4d" stroke-width="5.2" stroke-linecap="round" stroke-linejoin="round"/><path d="M201 510.500V500C201 489 209 481.500 220 481.500H237" fill="none" stroke="#cfd0ff" stroke-width="2.4" stroke-linecap="round" stroke-linejoin="round"/><path d="M14.500 561V550.500L33.500 531.500H51" fill="none" stroke="#0e1b4d" stroke-width="5.2" stroke-linecap="round" stroke-linejoin="miter"/><path d="M14.500 561V550.500L33.500 531.500H51" fill="none" stroke="#cfd0ff" stroke-width="2.4" stroke-linecap="round" stroke-linejoin="miter"/><path d="M76.500 541.500H88C95.500 541.500 100.500 546.500 100.500 554V561" fill="none" stroke="#c9c9d8" stroke-width="5" stroke-linecap="round"/><path d="M76.500 541.500H88C95.500 541.500 100.500 546.500 100.500 554V561" fill="none" stroke="#ececfb" stroke-width="2.600" stroke-linecap="round"/><path d="M76.500 530.500H88C101 530.500 111 540 111 553V561" fill="none" stroke="#0e1b4d" stroke-width="5.2" stroke-linecap="round" stroke-linejoin="round"/><path d="M76.500 530.500H88C101 530.500 111 540 111 553V561" fill="none" stroke="#cfd0ff" stroke-width="2.4" stroke-linecap="round" stroke-linejoin="round"/><path d="M91.500 548.500 101.500 538.500M94 537.500H102.500V546" fill="none" stroke="#0e1b4d" stroke-width="5.4" stroke-linecap="round" stroke-linejoin="round"/><path d="M91.500 548.500 101.500 538.500M94 537.500H102.500V546" fill="none" stroke="#bfe0fb" stroke-width="2.4" stroke-linecap="round" stroke-linejoin="round"/><path d="M137.500 545.500 156 532.500 172.500 538.500V550L158 561 138.500 554.500z" fill="#7c7ee0" stroke="#111" stroke-width="2.400" stroke-linejoin="round"/><path d="M137.500 545.500 156 532.500 172.500 538.500 163 547.500z" fill="#d6d7ff"/><path d="M146 540 156 533.500 171.500 539 163 547.500 158 546z" fill="#e6e6ff"/><path d="M137.500 545.500 156 532.500 172.500 538.500V550L158 561 138.500 554.500z" fill="none" stroke="#111" stroke-width="2.400" stroke-linejoin="round"/><path d="M187.4 557.9V568.8H176.2z" fill="url(#gtri)" stroke="#111" stroke-width="1.800" stroke-linejoin="round"/><path d="M196.500 550 220 532M212.500 530.500H221.500V540" fill="none" stroke="#0e1b4d" stroke-width="5.4" stroke-linecap="round" stroke-linejoin="round"/><path d="M196.500 550 220 532M212.500 530.500H221.500V540" fill="none" stroke="#bfe0fb" stroke-width="2.4" stroke-linecap="round" stroke-linejoin="round"/><rect x="227" y="531.500" width="14" height="7.500" fill="#e6e6ff" stroke="#111" stroke-width="1.800"/><rect x="195" y="555.500" width="14" height="7.500" fill="#e6e6ff" stroke="#111" stroke-width="1.800"/><path d="M11 590V587.500C11 585 13 583 15.500 583H49C51.500 583 53.500 585 53.500 587.500V590" fill="#d6d7ff" stroke="#111" stroke-width="2.200"/></svg>
<svg style="left:0;top:654px" width="258" height="311" viewBox="0 654 258 311"><defs>
<linearGradient id="htri" x1="0" x2="1" y1="0" y2="1"><stop offset="0" stop-color="#fff"/><stop offset="1" stop-color="#cfcfcf"/></linearGradient>
<linearGradient id="hcur" x1="0" x2="0" y1="0" y2="1"><stop offset="0" stop-color="#fff"/><stop offset=".6" stop-color="#fff"/><stop offset="1" stop-color="#bdbdbd"/></linearGradient>
<linearGradient id="hlav" x1="0" x2="0" y1="0" y2="1"><stop offset="0" stop-color="#ececff"/><stop offset="1" stop-color="#b4b6f5"/></linearGradient>
<radialGradient id="hsph" cx=".35" cy=".3" r=".8"><stop offset="0" stop-color="#fff"/><stop offset=".5" stop-color="#cfd0ff"/><stop offset="1" stop-color="#9fa2ee"/></radialGradient>
<linearGradient id="hgray" x1="0" x2="1" y1="0" y2="1"><stop offset="0" stop-color="#bdbdbd"/><stop offset="1" stop-color="#f7f7f7"/></linearGradient>
<linearGradient id="hskin" x1="0" x2="1"><stop offset="0" stop-color="#f8c891"/><stop offset="1" stop-color="#e9a768"/></linearGradient>
<linearGradient id="htan" x1="0" x2="1" y1="0" y2="1"><stop offset="0" stop-color="#f6cfa4"/><stop offset="1" stop-color="#d99552"/></linearGradient>
<linearGradient id="hor" x1="0" x2="1"><stop offset="0" stop-color="#d9832c"/><stop offset="1" stop-color="#f3c391"/></linearGradient>
<radialGradient id="hlens" cx=".4" cy=".35" r=".7"><stop offset="0" stop-color="#fff"/><stop offset="1" stop-color="#d5d5d5"/></radialGradient>
<linearGradient id="hblue" x1="0" x2="1" y1="0" y2="1"><stop offset="0" stop-color="#7fb0f5"/><stop offset="1" stop-color="#2f6fd6"/></linearGradient>
<linearGradient id="hfade" x1="0" x2="0" y1="0" y2="1"><stop offset="0" stop-color="#fff" stop-opacity="0"/><stop offset=".45" stop-color="#fff" stop-opacity="0"/><stop offset="1" stop-color="#fff" stop-opacity="1"/></linearGradient>
<linearGradient id="hshoe" x1="0" x2="0" y1="0" y2="1"><stop offset="0" stop-color="#8e8e8e"/><stop offset="1" stop-color="#b9b9b9"/></linearGradient>
<radialGradient id="hsub" cx=".35" cy=".3" r=".9"><stop offset="0" stop-color="#fff"/><stop offset=".5" stop-color="#c9c5fb"/><stop offset="1" stop-color="#8f86ee"/></radialGradient></defs><path d="M37 663.1V666.6" fill="none" stroke="#1d3d7c" stroke-width="5.400" stroke-linecap="round" stroke-linejoin="round"/><path d="M37 663.1V666.6" fill="none" stroke="#bcd6fb" stroke-width="2.700" stroke-linecap="round" stroke-linejoin="round"/><path d="M37 694.6V695.6" fill="none" stroke="#1d3d7c" stroke-width="5.400" stroke-linecap="round" stroke-linejoin="round"/><path d="M37 694.6V695.6" fill="none" stroke="#bcd6fb" stroke-width="2.700" stroke-linecap="round" stroke-linejoin="round"/><path d="M14.5 677.8000000000001A22.500 8.300 0 0 1 59.5 677.8000000000001" fill="none" stroke="#1d3d7c" stroke-width="5.400" stroke-linecap="round" stroke-linejoin="round"/><path d="M14.5 677.8000000000001A22.500 8.300 0 0 1 59.5 677.8000000000001" fill="none" stroke="#bcd6fb" stroke-width="2.700" stroke-linecap="round" stroke-linejoin="round"/><circle cx="37" cy="679.6" r="12.700" fill="url(#hsph)" stroke="#111a3a" stroke-width="1.800"/><path d="M14.5 677.8000000000001A22.500 8.300 0 0 0 35 686.0500000000001" fill="none" stroke="#1d3d7c" stroke-width="5.400" stroke-linecap="round" stroke-linejoin="round"/><path d="M14.5 677.8000000000001A22.500 8.300 0 0 0 35 686.0500000000001" fill="none" stroke="#bcd6fb" stroke-width="2.700" stroke-linecap="round" stroke-linejoin="round"/><path d="M59.5 677.8000000000001A22.500 8.300 0 0 1 45.5 685.5" fill="none" stroke="#1d3d7c" stroke-width="5.400" stroke-linecap="round" stroke-linejoin="round"/><path d="M59.5 677.8000000000001A22.500 8.300 0 0 1 45.5 685.5" fill="none" stroke="#bcd6fb" stroke-width="2.700" stroke-linecap="round" stroke-linejoin="round"/><path d="M30.5 679.6 38 686.0 30.5 692.1" fill="none" stroke="#1d3d7c" stroke-width="5.400" stroke-linecap="round" stroke-linejoin="round"/><path d="M30.5 679.6 38 686.0 30.5 692.1" fill="none" stroke="#bcd6fb" stroke-width="2.700" stroke-linecap="round" stroke-linejoin="round"/><path d="M11.500 730.800 34.500 720.500 58.500 730.300 34.500 747.500z" fill="#fbd3f2" stroke="#f35fd0" stroke-width="2.400" stroke-linejoin="round"/><path d="M22.500 725.800 46.500 739M23 739 46.500 725.300" stroke="#f35fd0" stroke-width="2.400"/><path d="M35 731V715.500" stroke="#1d4f9a" stroke-width="6.400" stroke-linecap="round"/><path d="M35 731V715.500" stroke="#8fc0ff" stroke-width="3.600" stroke-linecap="round"/><path d="M34 730V716" stroke="#e6f2ff" stroke-width="1.200" stroke-linecap="round"/><path d="M36 731.500 50.500 722.500" stroke="#7a1a10" stroke-width="6.400" stroke-linecap="round"/><path d="M36 731.500 50.500 722.500" stroke="#ee5a44" stroke-width="3.600" stroke-linecap="round"/><path d="M48 722 51 720.500" stroke="#2f7d1f" stroke-width="3"/><path d="M36 733 50 741.500" stroke="#2f6d10" stroke-width="6.400" stroke-linecap="round"/><path d="M36 733 50 741.500" stroke="#8fd84a" stroke-width="3.600" stroke-linecap="round"/><circle cx="50" cy="741.500" r="2.300" fill="#fff" stroke="#8a1a10" stroke-width="1.200"/><circle cx="35" cy="732" r="2.600" fill="#fff"/><path d="M19 776.600 36.900 770 55.400 776.600V800H19z" fill="#d2d2ff"/><path d="M19 776.600 36.900 785 55.400 776.600 36.900 770z" fill="#f3f3ff" stroke="#0e1b4d" stroke-width="1.700" stroke-linejoin="round"/><path d="M36.900 785V800L55.400 800V776.600z" fill="#b3b3f7"/><path d="M19 776.600V796M55.400 776.600V796" stroke="#0e1b4d" stroke-width="1.700"/><path d="M36.900 785V800" stroke="#fff" stroke-width="1.200"/><rect x="16" y="774" width="42" height="27" fill="url(#hfade)"/><path d="M36.900 777.500V764.500M31.500 768 36.900 762.800 42.300 768" fill="none" stroke="#0e1b4d" stroke-width="5" stroke-linecap="round" stroke-linejoin="round"/><path d="M36.900 777.500V764.500M31.500 768 36.900 762.800 42.300 768" fill="none" stroke="#bfe0fb" stroke-width="2.2" stroke-linecap="round" stroke-linejoin="round"/><path d="M16.700 818.500 35.700 811.300 45.800 814.900 57.500 838.100 38.700 847.300 16.700 836.900z" fill="#e4e4ff" stroke="#0e1b4d" stroke-width="2" stroke-linejoin="round"/><path d="M29.200 824.400 45.500 816.500 55.500 837.500 38.700 845z" fill="url(#hblue)"/><path d="M18.500 820 29.200 824.400 38.700 845 18.500 836z" fill="#d2d2ff"/><path d="M18.500 819.500 35.700 813 44.500 816 29.200 824z" fill="#f5f5ff"/><path d="M22 864.500 37.500 861 52.500 865.500C50 873 48.500 877 51.500 886.500L52 892 40.500 898.500 22.800 893.500C25 885 25.500 880 23.500 873z" fill="url(#hblue)" stroke="#0e1b4d" stroke-width="2" stroke-linejoin="round"/><path d="M24.500 865.500 37.500 862.500 50.500 866 38.500 870z" fill="#b9d6fb"/><path d="M38.500 870C46 877 44 888 40.500 897" fill="none" stroke="#a8cbfa" stroke-width="1.500"/><path d="M24.500 926 35 918 46.500 925.500 47 939 38 946 25.500 940z" fill="url(#hsub)" stroke="#0e1b4d" stroke-width="1.800" stroke-linejoin="round"/><path d="M24.500 926 39 929.500 46.500 925.500M39 929.500 38 946" fill="none" stroke="#0e1b4d" stroke-width="1.300"/><path d="M21 921 35 912.500 53 919 53.500 937.500 39 948 21 939.500zM21 921 39 929 53 919M39 929V948" fill="none" stroke="#2d5fae" stroke-width="3.400" stroke-linejoin="round"/><path d="M21 921 35 912.500 53 919 53.500 937.500 39 948 21 939.500zM21 921 39 929 53 919M39 929V948" fill="none" stroke="#fff" stroke-width="1.200" stroke-linejoin="round"/><circle cx="21" cy="921" r="2.200" fill="#fff" stroke="#333" stroke-width="1"/><circle cx="35" cy="912.5" r="2.200" fill="#fff" stroke="#333" stroke-width="1"/><circle cx="53" cy="919" r="2.200" fill="#fff" stroke="#333" stroke-width="1"/><circle cx="53.5" cy="937.5" r="2.200" fill="#fff" stroke="#333" stroke-width="1"/><circle cx="39" cy="948" r="2.200" fill="#fff" stroke="#333" stroke-width="1"/><circle cx="21" cy="939.5" r="2.200" fill="#fff" stroke="#333" stroke-width="1"/><circle cx="39" cy="929" r="2.200" fill="#fff" stroke="#333" stroke-width="1"/></svg>
<svg style="left:0;top:1031.500px" width="258" height="208" viewBox="0 1031.500 258 208"><defs>
<linearGradient id="ktri" x1="0" x2="1" y1="0" y2="1"><stop offset="0" stop-color="#fff"/><stop offset="1" stop-color="#cfcfcf"/></linearGradient>
<linearGradient id="kcur" x1="0" x2="0" y1="0" y2="1"><stop offset="0" stop-color="#fff"/><stop offset=".6" stop-color="#fff"/><stop offset="1" stop-color="#bdbdbd"/></linearGradient>
<linearGradient id="klav" x1="0" x2="0" y1="0" y2="1"><stop offset="0" stop-color="#ececff"/><stop offset="1" stop-color="#b4b6f5"/></linearGradient>
<radialGradient id="ksph" cx=".35" cy=".3" r=".8"><stop offset="0" stop-color="#fff"/><stop offset=".5" stop-color="#cfd0ff"/><stop offset="1" stop-color="#9fa2ee"/></radialGradient>
<linearGradient id="kgray" x1="0" x2="1" y1="0" y2="1"><stop offset="0" stop-color="#bdbdbd"/><stop offset="1" stop-color="#f7f7f7"/></linearGradient>
<linearGradient id="kskin" x1="0" x2="1"><stop offset="0" stop-color="#f8c891"/><stop offset="1" stop-color="#e9a768"/></linearGradient>
<linearGradient id="ktan" x1="0" x2="1" y1="0" y2="1"><stop offset="0" stop-color="#f6cfa4"/><stop offset="1" stop-color="#d99552"/></linearGradient>
<linearGradient id="kor" x1="0" x2="1"><stop offset="0" stop-color="#d9832c"/><stop offset="1" stop-color="#f3c391"/></linearGradient>
<radialGradient id="klens" cx=".4" cy=".35" r=".7"><stop offset="0" stop-color="#fff"/><stop offset="1" stop-color="#d5d5d5"/></radialGradient>
<linearGradient id="kshoe" x1="0" x2="0" y1="0" y2="1"><stop offset="0" stop-color="#858585"/><stop offset="1" stop-color="#c2c2c2"/></linearGradient></defs><path d="M37.1 1041.5V1045" fill="none" stroke="#1d3d7c" stroke-width="5.400" stroke-linecap="round" stroke-linejoin="round"/><path d="M37.1 1041.5V1045" fill="none" stroke="#bcd6fb" stroke-width="2.700" stroke-linecap="round" stroke-linejoin="round"/><path d="M37.1 1073V1074" fill="none" stroke="#1d3d7c" stroke-width="5.400" stroke-linecap="round" stroke-linejoin="round"/><path d="M37.1 1073V1074" fill="none" stroke="#bcd6fb" stroke-width="2.700" stroke-linecap="round" stroke-linejoin="round"/><path d="M14.600000000000001 1056.2A22.500 8.300 0 0 1 59.6 1056.2" fill="none" stroke="#1d3d7c" stroke-width="5.400" stroke-linecap="round" stroke-linejoin="round"/><path d="M14.600000000000001 1056.2A22.500 8.300 0 0 1 59.6 1056.2" fill="none" stroke="#bcd6fb" stroke-width="2.700" stroke-linecap="round" stroke-linejoin="round"/><circle cx="37.1" cy="1058" r="12.700" fill="url(#ksph)" stroke="#111a3a" stroke-width="1.800"/><path d="M14.600000000000001 1056.2A22.500 8.300 0 0 0 35.1 1064.45" fill="none" stroke="#1d3d7c" stroke-width="5.400" stroke-linecap="round" stroke-linejoin="round"/><path d="M14.600000000000001 1056.2A22.500 8.300 0 0 0 35.1 1064.45" fill="none" stroke="#bcd6fb" stroke-width="2.700" stroke-linecap="round" stroke-linejoin="round"/><path d="M59.6 1056.2A22.500 8.300 0 0 1 45.6 1063.9" fill="none" stroke="#1d3d7c" stroke-width="5.400" stroke-linecap="round" stroke-linejoin="round"/><path d="M59.6 1056.2A22.500 8.300 0 0 1 45.6 1063.9" fill="none" stroke="#bcd6fb" stroke-width="2.700" stroke-linecap="round" stroke-linejoin="round"/><path d="M30.6 1058 38.1 1064.4 30.6 1070.5" fill="none" stroke="#1d3d7c" stroke-width="5.400" stroke-linecap="round" stroke-linejoin="round"/><path d="M30.6 1058 38.1 1064.4 30.6 1070.5" fill="none" stroke="#bcd6fb" stroke-width="2.700" stroke-linecap="round" stroke-linejoin="round"/><path d="M17 1104.56C16 1095.6 18.8 1090 26.0 1090S36 1095.6 35 1104.56 L34.5 1107.92H17.5z" fill="url(#kshoe)" stroke="#111" stroke-width="1.700" stroke-linejoin="round"/><path d="M17.8 1109.6H34.2L33.5 1116.04C33 1118 19 1118 18.5 1116.04z" fill="url(#kshoe)" stroke="#111" stroke-width="1.700" stroke-linejoin="round"/><path d="M35 1114.04C34 1105.4 36.8 1100 44.0 1100S54 1105.4 53 1114.04 L52.5 1117.28H35.5z" fill="url(#kshoe)" stroke="#111" stroke-width="1.700" stroke-linejoin="round"/><path d="M35.8 1118.9H52.2L51.5 1125.11C51 1127 37 1127 36.5 1125.11z" fill="url(#kshoe)" stroke="#111" stroke-width="1.700" stroke-linejoin="round"/><path d="M28.9 1147.6 34.9 1142.6 40.9 1147.6M28.9 1170.6 34.9 1175.6 40.9 1170.6M23.4 1153.1 18.4 1159.1 23.4 1165.1M46.4 1153.1 51.4 1159.1 46.4 1165.1" fill="none" stroke="#2a4f9a" stroke-width="4.6" stroke-linecap="round" stroke-linejoin="miter"/><path d="M28.9 1147.6 34.9 1142.6 40.9 1147.6M28.9 1170.6 34.9 1175.6 40.9 1170.6M23.4 1153.1 18.4 1159.1 23.4 1165.1M46.4 1153.1 51.4 1159.1 46.4 1165.1" fill="none" stroke="#bfe0fb" stroke-width="2" stroke-linecap="round" stroke-linejoin="miter"/><rect x="30.7" y="1154.8999999999999" width="8.400" height="8.400" rx="2" fill="#b8b5fb" stroke="#3a35d8" stroke-width="1.600"/><path d="M43 1197.300C40.500 1196.500 37.700 1196.200 34.700 1196.200 25.400 1196.200 17.900 1201.900 17.900 1209S25.400 1221.800 34.700 1221.800 51.500 1216.100 51.500 1209C51.500 1206.700 50.800 1204.500 49.500 1202.600" fill="none" stroke="#16305f" stroke-width="4.400" stroke-linecap="round" stroke-linejoin="round"/><path d="M43 1197.300C40.500 1196.500 37.700 1196.200 34.700 1196.200 25.400 1196.200 17.900 1201.900 17.900 1209S25.400 1221.800 34.700 1221.800 51.500 1216.100 51.500 1209C51.500 1206.700 50.800 1204.500 49.500 1202.600" fill="none" stroke="#c4dcfc" stroke-width="2.100" stroke-linecap="round" stroke-linejoin="round"/><path d="M36.500 1200.600H54.300M44.500 1193.200V1205.800" fill="none" stroke="#16305f" stroke-width="4.400" stroke-linecap="round" stroke-linejoin="miter"/><path d="M36.500 1200.600H54.300M44.500 1193.200V1205.800" fill="none" stroke="#c4dcfc" stroke-width="2.100" stroke-linecap="round" stroke-linejoin="miter"/><rect x="30.300" y="1204.300" width="9.400" height="9.400" rx="2.800" fill="#bdbafc" stroke="#3f3fe0" stroke-width="1.900"/></svg>
<svg style="left:0;top:1246px" width="252" height="152" viewBox="0 1246 252 152"><defs>
<radialGradient id="tg_tree" cx=".35" cy=".3" r=".8"><stop offset="0" stop-color="#9cf27a"/><stop offset="1" stop-color="#2fb52a"/></radialGradient>
<radialGradient id="tg_red" cx=".35" cy=".3" r=".8"><stop offset="0" stop-color="#ffd0d0"/><stop offset="1" stop-color="#e23a4a"/></radialGradient>
<radialGradient id="tg_bulb" cx=".4" cy=".3" r=".75"><stop offset="0" stop-color="#fffde0"/><stop offset=".45" stop-color="#fdf06a"/><stop offset="1" stop-color="#e9b81c"/></radialGradient>
<linearGradient id="tg_cone" x1="0" x2="1"><stop offset="0" stop-color="#3fcf62"/><stop offset=".5" stop-color="#a4f0a8"/><stop offset="1" stop-color="#3fcf62"/></linearGradient>
<linearGradient id="tg_wood" x1="0" x2="1"><stop offset="0" stop-color="#c98a4d"/><stop offset="1" stop-color="#e9b27c"/></linearGradient>
<linearGradient id="tg_sil" x1="0" x2="0" y1="0" y2="1"><stop offset="0" stop-color="#f6f6f6"/><stop offset="1" stop-color="#a4a4a4"/></linearGradient>
<radialGradient id="tg_bolt" cx=".4" cy=".35" r=".8"><stop offset="0" stop-color="#e4e4e4"/><stop offset="1" stop-color="#6e6e6e"/></radialGradient>
<linearGradient id="tg_pipe" x1="0" x2="1" y1="0" y2="1"><stop offset="0" stop-color="#b9dcf3"/><stop offset="1" stop-color="#7fb2d9"/></linearGradient>
<linearGradient id="tg_roof" x1="0" x2="1"><stop offset="0" stop-color="#f0c39b"/><stop offset="1" stop-color="#c98a55"/></linearGradient>
<linearGradient id="tg_pen" x1="0" x2="1" y1="0" y2="1"><stop offset="0" stop-color="#c9c9ff"/><stop offset=".5" stop-color="#5b5be6"/><stop offset="1" stop-color="#c9c9ff"/></linearGradient>
</defs><path d="M9 1270 29.500 1257 55 1275.500 32.500 1289.500z" fill="#fff" stroke="#111" stroke-width="1.800" stroke-linejoin="round"/><path d="M12.500 1270 29.500 1259.500 51.500 1275.500 32.500 1287z" fill="#7fc84a"/><path d="M26 1262C32 1268 38 1272 37.500 1279L33 1286.500 39 1283C42 1277 38 1268 31 1260.500z" fill="#e7a9c9" stroke="#8a5a2a" stroke-width="1.200"/><circle cx="29.5" cy="1257.5" r="3.5" fill="url(#tg_tree)" stroke="#1c6e16" stroke-width=".8"/><circle cx="19" cy="1263" r="3.8" fill="url(#tg_tree)" stroke="#1c6e16" stroke-width=".8"/><circle cx="34" cy="1262" r="3.8" fill="url(#tg_tree)" stroke="#1c6e16" stroke-width=".8"/><circle cx="24.5" cy="1269" r="4.2" fill="url(#tg_tree)" stroke="#1c6e16" stroke-width=".8"/><circle cx="40" cy="1267" r="4" fill="url(#tg_tree)" stroke="#1c6e16" stroke-width=".8"/><circle cx="28.5" cy="1275.5" r="4.5" fill="url(#tg_tree)" stroke="#1c6e16" stroke-width=".8"/><circle cx="43.5" cy="1273.5" r="4.3" fill="url(#tg_tree)" stroke="#1c6e16" stroke-width=".8"/><circle cx="93.600" cy="1271.600" r="17.600" fill="#5aaef5" stroke="#1c2a8c" stroke-width="2"/><path d="M83 1258C87 1254.500 93 1254.500 95 1257 91 1259 90 1262 86 1262.500 83.500 1262.500 82.500 1260 83 1258z M88 1267C93 1264.500 98.500 1266.500 99.500 1271 100 1276 95.500 1277.500 94 1281L92.500 1287C89.500 1283.500 91 1279 89 1275.500 87.500 1273 86.500 1269.500 88 1267z M103 1256.500C107.500 1259 110.500 1264 111 1268.500 106 1268 101 1264.500 101 1260z" fill="#c4935a"/><path d="M108 1262A17.600 17.600 0 0 1 90 1289" fill="none" stroke="#2f6fb5" stroke-width="3" opacity=".6"/><path d="M130.400 1268.200 154.800 1254.700 181.800 1272.400 157.300 1289z" fill="#f5c49a" stroke="#111" stroke-width="2.200" stroke-linejoin="round"/><path d="M138.500 1268.500 155 1259.500 174 1272 157 1283z" fill="#e6fafc" stroke="#222" stroke-width="1.200"/><path d="M163.500 1264.500C158.500 1266.500 157 1272 160.500 1276L172.500 1270.500z" fill="#c8f3f6" stroke="#222" stroke-width="1.100"/><path d="M138.500 1268.500 141.500 1274 151.500 1280.500 157 1283" fill="none" stroke="#222" stroke-width="1"/><path d="M201.500 1270.500 212 1275.500V1288.500L201.500 1282.500z" fill="#f4f4f4" stroke="#111" stroke-width="1.600" stroke-linejoin="round"/><path d="M212 1275.500 232.500 1268.500V1281L218.500 1288.500 212 1288.500z" fill="#dcdcdc" stroke="#111" stroke-width="1.600" stroke-linejoin="round"/><path d="M218.500 1262 232.500 1268.500V1281L218.500 1288.500z" fill="#e4e4e4"/><path d="M200.500 1269.500 211.500 1256 226.500 1259 234.500 1270 226 1266 218 1276.500z" fill="url(#tg_roof)" stroke="#111" stroke-width="1.600" stroke-linejoin="round"/><path d="M218 1276.500 226 1266 234.500 1270V1281L218.500 1288.500z" fill="#ececec" stroke="#111" stroke-width="1.600" stroke-linejoin="round"/><path d="M205.500 1274 208.500 1275.500V1281.500L205.500 1280zM210.500 1276.500 213.500 1278V1284L210.500 1282.500z" fill="#555"/><path d="M223 1277.500 227.500 1275V1284L223 1286.500z" fill="#6a6a6a"/><circle cx="34" cy="1318" r="12.500" fill="url(#tg_red)" stroke="#111" stroke-width="1.600"/><path d="M12.500 1324 26 1318 38 1322.500V1333L25.500 1338.500 12.500 1332z" fill="#5d9af2" stroke="#111" stroke-width="1.600" stroke-linejoin="round"/><path d="M12.500 1324 25.500 1328.500 38 1322.500M25.500 1328.500V1338.500" stroke="#cfe0fb" stroke-width="1" fill="none"/><path d="M42 1313.500 54.500 1335.500C51 1339.500 35 1339.500 31 1335.500z" fill="url(#tg_cone)" stroke="#111" stroke-width="1.600" stroke-linejoin="round"/><path d="M84 1326 91 1334 81.500 1341C78 1342.500 74 1339 75.500 1335z" fill="#3c3c3c" stroke="#111" stroke-width="1.400"/><path d="M78 1332 83 1337M81 1329.500 86.500 1335" stroke="#999" stroke-width="1.500"/><path d="M84 1326C85 1319 85.500 1314 88 1309.500 92 1302.500 101 1300.500 107.500 1305 114 1309.500 114.500 1319 108.500 1325 104 1329 97.500 1329.500 91 1334z" fill="url(#tg_bulb)" stroke="#111" stroke-width="1.600"/><ellipse cx="96" cy="1309" rx="4" ry="3" fill="#fff" opacity=".9"/><path d="M136 1311 153.500 1304.500 172 1311.500V1330L166 1333V1337L160 1339.500 156 1335 150 1340 147.500 1335 141.500 1337.500 136.500 1331z" fill="url(#tg_wood)" stroke="#111" stroke-width="1.800" stroke-linejoin="round"/><path d="M136 1311 153.500 1304.500 172 1311.500 155 1318z" fill="#e8b585" stroke="#111" stroke-width="1.200"/><path d="M155 1318V1336" stroke="#8a5a2a" stroke-width="1"/><path d="M155 1320 172 1314.500 175.500 1317V1326L160 1331.500 155 1328.500z" fill="#d9a066" stroke="#111" stroke-width="1.300"/><path d="M156.500 1319.500 170.500 1315 172.500 1317 158.500 1321.500z" fill="#1f3d1f"/><circle cx="168" cy="1321.500" r="1.400" fill="#ddd" stroke="#555" stroke-width=".6"/><path d="M196.500 1331.500 224.500 1304.500 230.500 1308 204 1338.500z" fill="#d9d9d9" stroke="#8a8a8a" stroke-width="1.200" stroke-linejoin="round"/><path d="M199 1331 225 1306" stroke="#9a9a9a" stroke-width="2" stroke-dasharray=".8 1.800"/><path d="M229.500 1310.500 235.500 1314 222 1334.500 215.500 1337 216.500 1330z" fill="url(#tg_pen)" stroke="#2a2a8a" stroke-width="1"/><path d="M216.500 1330 222 1334.500 215.500 1337z" fill="#e9c08a" stroke="#111" stroke-width=".8"/><path d="M215.500 1337 217.500 1336 216 1334.500z" fill="#111"/><path d="M231.500 1307.500C233 1305 238 1307 237 1311L235.500 1314 229.500 1310.500z" fill="#e23a3a" stroke="#8a1a1a" stroke-width=".8"/><path d="M14 1376.500 37 1356.500 39.500 1355C43 1353.500 47.500 1356 47 1361L45.500 1366 52 1373C54 1376 49 1384 44.500 1385.500L34 1377.500 23.500 1388C19 1391 11 1383 14 1376.500z" fill="url(#tg_pipe)" stroke="#111" stroke-width="1.800" stroke-linejoin="round"/><ellipse cx="18.500" cy="1383" rx="5" ry="6.500" transform="rotate(-38 18.500 1383)" fill="#9cc8e8" stroke="#4a7aa8" stroke-width="1"/><path d="M36 1358 45 1366M39 1377 48.500 1368" stroke="#6a9cc8" stroke-width="1" fill="none"/><path d="M71.500 1355 84 1352.500 117.500 1360.500V1364L100.500 1369V1378.500L116.500 1382.500V1385.500L98.500 1390 71.500 1367V1364L76.500 1363 76 1358.500 71.500 1357.500z" fill="url(#tg_sil)" stroke="#111" stroke-width="1.800" stroke-linejoin="round"/><path d="M71.500 1355 99 1366 117.500 1360.500M99 1366V1369.500M76.500 1363 100.500 1378.500M71.500 1364 98.500 1387 116.500 1382.500" fill="none" stroke="#555" stroke-width="1"/><path d="M71.500 1355 84 1352.500 117.500 1360.500 99 1366z" fill="#f4f4f4" stroke="#111" stroke-width="1.200"/><path d="M100.500 1369 108 1367V1380.500L100.500 1378.500z" fill="#222"/><ellipse cx="142.500" cy="1362" rx="6" ry="8" transform="rotate(-30 142.500 1362)" fill="#e8e8e8" stroke="#777" stroke-width="1"/><path d="M139 1358 143 1356M139.500 1361.500 145 1359M140.500 1365 147 1362" stroke="#999" stroke-width="1"/><ellipse cx="150" cy="1367" rx="8.500" ry="11.500" transform="rotate(-30 150 1367)" fill="#8c8c8c" stroke="#444" stroke-width="1.200"/><ellipse cx="151.500" cy="1368" rx="5" ry="7.500" transform="rotate(-30 151.500 1368)" fill="#cfcfcf"/><path d="M150 1363.500 160 1370.500 155 1379 146.500 1372.500z" fill="#bdbdbd" stroke="#555" stroke-width="1"/><circle cx="162" cy="1378" r="10" fill="url(#tg_bolt)" stroke="#444" stroke-width="1.200"/><path d="M153.500 1374 158.500 1369.500 165 1370.500" fill="none" stroke="#fff" stroke-width="1.500" opacity=".8"/><path d="M231.0 1372.7 L237.0 1374.4 L236.0 1379.0 L229.7 1378.3 L229.6 1378.5 L233.7 1382.9 L230.1 1386.3 L225.3 1382.7 L225.0 1382.8 L225.9 1388.5 L220.9 1389.5 L219.0 1384.1 L218.7 1384.1 L216.1 1389.3 L211.3 1387.7 L212.8 1382.1 L212.6 1382.0 L207.3 1385.1 L204.2 1381.4 L208.8 1377.5 L208.7 1377.2 L202.5 1377.2 L202.0 1372.5 L208.2 1371.5 L208.3 1371.3 L203.0 1368.1 L205.4 1364.0 L211.2 1366.2 L211.3 1366.0 L208.8 1360.8 L213.2 1358.5 L216.8 1363.2 L217.0 1363.2 L217.9 1357.5 L223.0 1357.7 L223.2 1363.5 L223.5 1363.6 L227.6 1359.2 L231.7 1362.0 L228.5 1366.9 L228.7 1367.1 L234.7 1365.5 L236.6 1369.9 L230.9 1372.5z" fill="#5a5a5a" transform="translate(1.200,1.500)"/><path d="M231.0 1372.7 L237.0 1374.4 L236.0 1379.0 L229.7 1378.3 L229.6 1378.5 L233.7 1382.9 L230.1 1386.3 L225.3 1382.7 L225.0 1382.8 L225.9 1388.5 L220.9 1389.5 L219.0 1384.1 L218.7 1384.1 L216.1 1389.3 L211.3 1387.7 L212.8 1382.1 L212.6 1382.0 L207.3 1385.1 L204.2 1381.4 L208.8 1377.5 L208.7 1377.2 L202.5 1377.2 L202.0 1372.5 L208.2 1371.5 L208.3 1371.3 L203.0 1368.1 L205.4 1364.0 L211.2 1366.2 L211.3 1366.0 L208.8 1360.8 L213.2 1358.5 L216.8 1363.2 L217.0 1363.2 L217.9 1357.5 L223.0 1357.7 L223.2 1363.5 L223.5 1363.6 L227.6 1359.2 L231.7 1362.0 L228.5 1366.9 L228.7 1367.1 L234.7 1365.5 L236.6 1369.9 L230.9 1372.5z" fill="url(#tg_sil)" stroke="#111" stroke-width="1.500" stroke-linejoin="round"/><circle cx="220" cy="1373.500" r="3.400" fill="#f2f2f2" stroke="#666" stroke-width="1.200"/></svg>
<svg style="left:292px;top:146px" width="1818" height="52" viewBox="292 146 1818 52"><defs>
<linearGradient id="vb_arr" x1="0" x2="0" y1="0" y2="1"><stop offset="0" stop-color="#e6e6e6"/><stop offset="1" stop-color="#9a9a9a"/></linearGradient>
<radialGradient id="vb_lens" cx=".38" cy=".32" r=".75"><stop offset="0" stop-color="#fff"/><stop offset="1" stop-color="#d2d2d2"/></radialGradient>
<linearGradient id="vb_tan" x1="0" x2="1" y1="0" y2="1"><stop offset="0" stop-color="#f3cfa6"/><stop offset="1" stop-color="#c98d55"/></linearGradient>
<linearGradient id="vb_lay" x1="0" x2="0" y1="0" y2="1"><stop offset="0" stop-color="#fafafa"/><stop offset="1" stop-color="#8c8c8c"/></linearGradient>
<linearGradient id="vb_doc" x1="0" x2="1" y1="0" y2="1"><stop offset="0" stop-color="#cfcfcf"/><stop offset=".5" stop-color="#fff"/></linearGradient>
</defs><path d="M301.6 172.0 315.0 158.8 317.0 160.3 316.6 168.3 328.1 169.10000000000002Q330.6 169.3 330.6 172.0T328.1 174.9L316.6 175.70000000000002 317.0 183.70000000000002 315.0 185.20000000000002z" fill="url(#vb_arr)" stroke="#111" stroke-width="2" stroke-linejoin="round"/><g transform="translate(676.300,0) scale(-1,1)"><path d="M301.6 172.0 315.0 158.8 317.0 160.3 316.6 168.3 328.1 169.10000000000002Q330.6 169.3 330.6 172.0T328.1 174.9L316.6 175.70000000000002 317.0 183.70000000000002 315.0 185.20000000000002z" fill="#e6e6e6" stroke="#d2d2d2" stroke-width="1.8" stroke-linejoin="round"/></g><path d="M400.600 175 413 168.800 425.200 162.700M413 168.800 425.200 175M400.600 175 413 181.400" fill="none" stroke="#0e1b4d" stroke-width="4.4" stroke-linecap="round" stroke-linejoin="round"/><path d="M400.600 175 413 168.800 425.200 162.700M413 168.800 425.200 175M400.600 175 413 181.400" fill="none" stroke="#bcd6fb" stroke-width="1.8" stroke-linecap="round" stroke-linejoin="round"/><rect x="398.0" y="172.4" width="5.200" height="5.200" rx="1.200" fill="#fff" stroke="#0e1b4d" stroke-width="1.600"/><rect x="410.4" y="166.20000000000002" width="5.200" height="5.200" rx="1.200" fill="#fff" stroke="#0e1b4d" stroke-width="1.600"/><rect x="422.59999999999997" y="160.1" width="5.200" height="5.200" rx="1.200" fill="#fff" stroke="#0e1b4d" stroke-width="1.600"/><rect x="422.59999999999997" y="172.4" width="5.200" height="5.200" rx="1.200" fill="#fff" stroke="#0e1b4d" stroke-width="1.600"/><rect x="410.4" y="178.8" width="5.200" height="5.200" rx="1.200" fill="#fff" stroke="#0e1b4d" stroke-width="1.600"/><path d="M575.5 179 589 173.2 602.5 179 589 184.8z" fill="#d9daff" stroke="#0e1b4d" stroke-width="1.600" stroke-linejoin="round"/><path d="M575.5 172.8 589 167.0 602.5 172.8 589 178.60000000000002z" fill="#e2e3ff" stroke="#0e1b4d" stroke-width="1.600" stroke-linejoin="round"/><path d="M575.5 166.5 589 160.7 602.5 166.5 589 172.3z" fill="#eeeeff" stroke="#0e1b4d" stroke-width="1.600" stroke-linejoin="round"/><path d="M606.300 160.400H635.800V180L629.500 185.500H606.300z" fill="#ebebeb" stroke="#c6c6c6" stroke-width="1.800" stroke-linejoin="round"/><path d="M609.800 163.800H632.300V178.500H627.500V182H609.800z" fill="#efefef" stroke="#c6c6c6" stroke-width="1.600" stroke-linejoin="round"/><g opacity=".55"><path d="M780.500 171 797.500 160.500M780.500 171 797 180" stroke="#a89a8c" stroke-width="1.600" fill="none"/><path d="M794 163C797 166 797.500 174 794.500 178" fill="none" stroke="#a89a8c" stroke-width="1.600"/><ellipse cx="790" cy="170" rx="9" ry="10" fill="#e6cdb5" opacity=".35"/></g><g opacity=".6"><path d="M805.500 153.500H824.500V190.500L805.500 183.500z" fill="#efd2ea" stroke="#d98ccc" stroke-width="1.600" stroke-linejoin="round"/><path d="M808.500 157H821.500V186L808.500 181z" fill="#f0e0ee" stroke="#d98ccc" stroke-width="1"/><path d="M815 153.500V187" stroke="#7fdc7f" stroke-width="2.400"/><path d="M815 172H825" stroke="#f08a8a" stroke-width="2.400"/><path d="M801 170H811M807.500 166 812 170 807.500 174" fill="none" stroke="#9fb9e6" stroke-width="3.200" stroke-linejoin="round" stroke-linecap="round"/></g><path d="M951.500 157H971L977 163V183H951.500z" fill="url(#vb_doc)" stroke="#111" stroke-width="1.800" stroke-linejoin="round"/><path d="M971 157V163H977" fill="#e4e4e4" stroke="#111" stroke-width="1.200"/><path d="M954.500 170C958 163.500 970 163.500 973.500 170 970 176.500 958 176.500 954.500 170z" fill="#fff" stroke="#1b2a55" stroke-width="1.600"/><circle cx="964" cy="170" r="4.300" fill="#5a7fc0" stroke="#1b2a55" stroke-width="1.100"/><circle cx="964" cy="170" r="1.800" fill="#0d1b33"/><circle cx="965.500" cy="168.500" r="1" fill="#fff"/><path d="M1044.500 160.300H1060L1066.500 166.500V185.500H1044.500z" fill="#fff" stroke="#111" stroke-width="1.900" stroke-linejoin="round"/><path d="M1060 160.300V166.500H1066.500" fill="#ddd" stroke="#111" stroke-width="1.200"/><path d="M1058.7 175.1 1067.0 183.5" stroke="#111" stroke-width="7" stroke-linecap="round"/><path d="M1061.5 178.0 1067.0 183.5" stroke="url(#vb_tan)" stroke-width="4.200" stroke-linecap="round"/><path d="M1058.7 175.1 1061.5 178.0" stroke="#666" stroke-width="3.600"/><circle cx="1053" cy="169.4" r="7.6" fill="url(#vb_lens)" stroke="#111" stroke-width="1.900"/><rect x="1100" y="160.500" width="20" height="10" fill="#d6d7ff" stroke="#111" stroke-width="1.800"/><rect x="1090.500" y="175" width="11" height="10.500" fill="#d6d7ff" stroke="#111" stroke-width="1.800"/><path d="M1109.4 174.7 1117.8 183.5" stroke="#111" stroke-width="7" stroke-linecap="round"/><path d="M1112.2 177.6 1117.8 183.5" stroke="url(#vb_tan)" stroke-width="4.200" stroke-linecap="round"/><path d="M1109.4 174.7 1112.2 177.6" stroke="#666" stroke-width="3.600"/><circle cx="1103.8" cy="168.9" r="7.6" fill="url(#vb_lens)" stroke="#111" stroke-width="1.900"/><path d="M1100 168.900H1107.500" stroke="#888" stroke-width="1.300"/><path d="M1166.4 175.9 1174.0 184.0" stroke="#111" stroke-width="7" stroke-linecap="round"/><path d="M1169.1 178.8 1174.0 184.0" stroke="url(#vb_tan)" stroke-width="4.200" stroke-linecap="round"/><path d="M1166.4 175.9 1169.1 178.8" stroke="#666" stroke-width="3.600"/><circle cx="1160.2" cy="169.4" r="8.5" fill="url(#vb_lens)" stroke="#111" stroke-width="1.900"/><path d="M1327 153.500 1360 154 1355.500 188 1327.400 182.200z" fill="#f3cdee" stroke="#ef5fd0" stroke-width="2.600" stroke-linejoin="round"/><path d="M1343.300 153.800 1341.500 185M1327.200 168.500 1357.800 171" stroke="#ef5fd0" stroke-width="2.600"/><path d="M1327 153.500 1360 154 1355.500 188 1327.400 182.200z" fill="none" stroke="#8a2a7a" stroke-width=".6" opacity=".5"/><path d="M1372 170.300 1393.100 157.800 1416 168.700 1393.100 186.700z" fill="#9cc8c8" stroke="#0e2a4d" stroke-width="4.600" stroke-linejoin="round"/><path d="M1382.500 164 1404.500 177.800M1404.500 163.200 1382.500 178.500" stroke="#0e2a4d" stroke-width="4.600"/><path d="M1372 170.300 1393.100 157.800 1416 168.700 1393.100 186.700z" fill="none" stroke="#2fe6ee" stroke-width="2.400" stroke-linejoin="round"/><path d="M1382.500 164 1404.500 177.800M1404.500 163.200 1382.500 178.500" stroke="#2fe6ee" stroke-width="2.400"/><path d="M1542.500 170 1550.500 181.500" stroke="#3a8a3a" stroke-width="6" stroke-linecap="round"/><path d="M1542.500 170 1550.500 181.500" stroke="#9fe09a" stroke-width="3.400" stroke-linecap="round"/><path d="M1550.500 181.500 1563.500 171" stroke="#b04a44" stroke-width="6" stroke-linecap="round"/><path d="M1550.500 181.500 1563.500 171" stroke="#f4a49c" stroke-width="3.400" stroke-linecap="round"/><circle cx="1550.500" cy="181.500" r="2" fill="#fff"/><rect x="1544.800" y="160.500" width="7" height="10" fill="#fff" stroke="#333" stroke-width="1.300"/><path d="M1548.300 160.500V170.500M1544.800 165.500H1551.800" stroke="#333" stroke-width="1"/><rect x="1562.500" y="175.200" width="7.500" height="10" fill="#fff" stroke="#333" stroke-width="1.300"/><path d="M1566.200 175.200V185.200M1562.500 180.200H1570" stroke="#333" stroke-width="1"/><rect x="1730.200" y="160.400" width="29.700" height="24.400" fill="url(#vb_lay)" stroke="#111" stroke-width="2"/><path d="M1742 160.400V184.800M1742 172.500H1760" stroke="#fff" stroke-width="1.300"/><rect x="1733.500" y="163.500" width="4.600" height="4.600" fill="#eee" stroke="#222" stroke-width="1"/><rect x="1744.500" y="163.500" width="4.600" height="4.600" fill="#eee" stroke="#222" stroke-width="1"/><rect x="1744.500" y="176" width="4.600" height="4.600" fill="#eee" stroke="#222" stroke-width="1"/><g transform="translate(1890.5,157.5) scale(1.0)" opacity="0.75"><path d="M3 9C1 7 0 4 2.500 3.500 4.500 3 6 6 7.500 9" fill="none" stroke="#5a5e9a" stroke-width="1.800"/><path d="M22 7C25 4 29 5 28 9 27.200 12 24 14 22 15" fill="none" stroke="#5a5e9a" stroke-width="1.800"/><path d="M6 8C6 4.500 23 4.500 23 8 25.500 12 25 19 21 23.500H8C4 19 3.500 12 6 8z" fill="#cfd0ff" stroke="#5a5e9a" stroke-width="1.500"/><ellipse cx="14.500" cy="7.500" rx="8.500" ry="2.200" fill="#e8e8ff" stroke="#5a5e9a" stroke-width="1.200"/><rect x="13" y="1" width="3" height="5" rx="1" fill="#e8e8ff" stroke="#5a5e9a" stroke-width="1.100"/></g><g opacity=".8"><rect x="1990.500" y="162.300" width="12.500" height="7" rx="1.500" fill="#f2a7a2" stroke="#e25a50" stroke-width="1.500"/><rect x="2005" y="162.300" width="12.500" height="7" rx="1.500" fill="#f8d0ae" stroke="#ef9a55" stroke-width="1.500"/><rect x="1990.500" y="171.800" width="12.500" height="7" rx="1.500" fill="#bfe6bf" stroke="#5fc46a" stroke-width="1.500"/><rect x="2005" y="171.800" width="12.500" height="7" rx="1.500" fill="#c2d8fb" stroke="#6a9cf0" stroke-width="1.500"/></g></svg>
<svg style="left:292px;top:200px" width="1818" height="70" viewBox="292 200 1818 70"><defs>
<radialGradient id="mb_no" cx=".4" cy=".3" r=".8"><stop offset="0" stop-color="#ff8a8a"/><stop offset=".6" stop-color="#e01818"/><stop offset="1" stop-color="#a80c0c"/></radialGradient>
<linearGradient id="mb_tan" x1="0" x2="1"><stop offset="0" stop-color="#d9a066"/><stop offset="1" stop-color="#e9c39a"/></linearGradient>
<linearGradient id="mb_bl" x1="0" x2="0" y1="0" y2="1"><stop offset="0" stop-color="#e4e7f6"/><stop offset="1" stop-color="#a9afd6"/></linearGradient>
<linearGradient id="mb_tp" x1="0" x2="0" y1="0" y2="1"><stop offset="0" stop-color="#e4e7f6"/><stop offset=".5" stop-color="#aab0d4"/><stop offset="1" stop-color="#7d84b0"/></linearGradient>
<linearGradient id="mb_tri" x1="0" x2="0" y1="0" y2="1"><stop offset="0" stop-color="#fff"/><stop offset="1" stop-color="#cfcfcf"/></linearGradient>
</defs><path d="M313.8 244.8 L334.2 224.7" stroke="#111" stroke-width="4.800"/><path d="M313.8 244.8 L334.2 224.7" stroke="#fff" stroke-width="2"/><path d="M338.5 220.5H328.0L338.5 231.0z" fill="#fff" stroke="#111" stroke-width="1.700" stroke-linejoin="round"/><path d="M309.5 249.0H320.0L309.5 238.5z" fill="#fff" stroke="#111" stroke-width="1.700" stroke-linejoin="round"/><rect x="319.3" y="230.8" width="8.400" height="8.400" rx="1.200" fill="#fff" stroke="#111" stroke-width="1.700"/><circle cx="341.100" cy="240" r="12" fill="url(#mb_no)" stroke="#111" stroke-width="1.600"/><circle cx="341.100" cy="240" r="7.600" fill="#fff"/><path d="M335.600 234.600 346.600 245.400" stroke="#e01818" stroke-width="4.600"/><circle cx="341.100" cy="240" r="8.400" fill="none" stroke="#e01818" stroke-width="2.400"/><path d="M377.8 244.8 L398.2 224.7" stroke="#111" stroke-width="4.800"/><path d="M377.8 244.8 L398.2 224.7" stroke="#fff" stroke-width="2"/><path d="M402.5 220.5H392.0L402.5 231.0z" fill="#fff" stroke="#111" stroke-width="1.700" stroke-linejoin="round"/><path d="M373.5 249.0H384.0L373.5 238.5z" fill="#fff" stroke="#111" stroke-width="1.700" stroke-linejoin="round"/><rect x="383.8" y="230.8" width="8.400" height="8.400" rx="1.200" fill="#fff" stroke="#111" stroke-width="1.700"/><path d="M428.0 244.8 L448.2 224.7" stroke="#111" stroke-width="4.800"/><path d="M428.0 244.8 L448.2 224.7" stroke="#fff" stroke-width="2"/><path d="M452.5 220.5H442.0L452.5 231.0z" fill="#fff" stroke="#111" stroke-width="1.700" stroke-linejoin="round"/><path d="M423.7 249.0H434.2L423.7 238.5z" fill="#fff" stroke="#111" stroke-width="1.700" stroke-linejoin="round"/><rect x="433.8" y="230.8" width="8.400" height="8.400" rx="1.200" fill="#fff" stroke="#111" stroke-width="1.700"/><path d="M444.0 244.8 L464.4 224.7" stroke="#111" stroke-width="4.800"/><path d="M444.0 244.8 L464.4 224.7" stroke="#fff" stroke-width="2"/><path d="M468.7 220.5H458.2L468.7 231.0z" fill="#fff" stroke="#111" stroke-width="1.700" stroke-linejoin="round"/><path d="M439.7 249.0H450.2L439.7 238.5z" fill="#fff" stroke="#111" stroke-width="1.700" stroke-linejoin="round"/><rect x="449.8" y="230.8" width="8.400" height="8.400" rx="1.200" fill="#fff" stroke="#111" stroke-width="1.700"/><rect x="519.500" y="220.500" width="19.500" height="9" fill="#fff" stroke="#111" stroke-width="1.800"/><rect x="523.500" y="223.500" width="11.500" height="3" fill="#888" stroke="#333" stroke-width=".8"/><path d="M510 236H521.500V250H510" fill="url(#mb_tan)" stroke="#111" stroke-width="1.800"/><path d="M537 236H549V250H537z" fill="url(#mb_tan)" stroke="#111" stroke-width="1.800"/><path d="M553.2 223V245.5M548.2 226.5 553.2 221.5 558.2 226.5M548.2 242.0 553.2 247.0 558.2 242.0" fill="none" stroke="#2d5a9e" stroke-width="5.400" stroke-linecap="round" stroke-linejoin="round"/><path d="M553.2 223V245.5M548.2 226.5 553.2 221.5 558.2 226.5M548.2 242.0 553.2 247.0 558.2 242.0" fill="none" stroke="#bcd6fb" stroke-width="2.800" stroke-linecap="round" stroke-linejoin="round"/><rect x="601.800" y="223.200" width="32.500" height="24.200" fill="#fff" stroke="#111" stroke-width="1.900"/><rect x="605.300" y="226.700" width="25.500" height="17.200" fill="#c9c9c9" stroke="#111" stroke-width="1.900"/><ellipse cx="678.700" cy="233.500" rx="15.600" ry="9.900" fill="none" stroke="#111" stroke-width="5"/><ellipse cx="678.700" cy="233.500" rx="15.600" ry="9.900" fill="none" stroke="#fff" stroke-width="1.800"/><circle cx="667.300" cy="242" r="4" fill="none" stroke="#111" stroke-width="3.800"/><circle cx="667.300" cy="242" r="4" fill="none" stroke="#fff" stroke-width="1.300"/><path d="M664 245.500C666 248 668 249 665.500 251.800" fill="none" stroke="#111" stroke-width="3.600" stroke-linecap="round"/><path d="M664 245.500C666 248 668 249 665.500 251.800" fill="none" stroke="#fff" stroke-width="1.200" stroke-linecap="round"/><path d="M719.500 221.500 728 232.500 751 228.500 740.500 247.500 723 241.500z" fill="none" stroke="#111" stroke-width="5" stroke-linejoin="miter"/><path d="M719.500 221.500 728 232.500 751 228.500 740.500 247.500 723 241.500z" fill="none" stroke="#fff" stroke-width="1.800" stroke-linejoin="miter"/><path d="M719.500 221.500V244" stroke="#111" stroke-width="4.600"/><path d="M719.500 221.500V244" stroke="#fff" stroke-width="1.600"/><circle cx="717.500" cy="240.500" r="3.800" fill="none" stroke="#111" stroke-width="3.600"/><circle cx="717.500" cy="240.500" r="3.800" fill="none" stroke="#fff" stroke-width="1.200"/><path d="M716 246 717 250" stroke="#111" stroke-width="3.400" stroke-linecap="round"/><path d="M801 240V218.500H835V240H828.500V225H807.500V240z" fill="#cdb59a" stroke="#8a8a8a" stroke-width="1.800" opacity=".9"/><path d="M801 236.200H835V250.500A3.400 3.400 0 0 1 828.300 250.500V242H807.700V250.500A3.400 3.400 0 0 1 801 250.500z" fill="#d9a066" stroke="#111" stroke-width="2" stroke-linejoin="round"/><path d="M839 223.5V245.5M834 227.0 839 222.0 844 227.0M834 242.0 839 247.0 844 242.0" fill="none" stroke="#2d5a9e" stroke-width="5.400" stroke-linecap="round" stroke-linejoin="round"/><path d="M839 223.5V245.5M834 227.0 839 222.0 844 227.0M834 242.0 839 247.0 844 242.0" fill="none" stroke="#bcd6fb" stroke-width="2.800" stroke-linecap="round" stroke-linejoin="round"/><path d="M1678.500 241.500 1692.500 253.500" stroke="#1e2340" stroke-width="8" stroke-linecap="round"/><path d="M1680 243 1692.300 253.300" stroke="#b9bfe0" stroke-width="4.800" stroke-linecap="round"/><circle cx="1672.600" cy="233.400" r="9.800" fill="#cfd3ee" stroke="#1e2340" stroke-width="1.900"/><path d="M1665.500 237.500 1680 228M1667 241 1681.500 231.500" stroke="#8a90b8" stroke-width="1.400"/><path d="M1648.500 252.300 1692 221.300" stroke="#1e2340" stroke-width="5" stroke-linecap="round"/><path d="M1648.500 252.300 1692 221.300" stroke="#b9bfe0" stroke-width="2.200" stroke-linecap="round"/><path d="M1755.9 241.7 L1760.5 243.5 L1757.3 251.0 L1752.8 249.1 L1751.5 250.4 L1753.4 254.9 L1745.9 258.1 L1744.1 253.5 L1742.1 253.5 L1740.3 258.1 L1732.8 254.9 L1734.7 250.4 L1733.4 249.1 L1728.9 251.0 L1725.7 243.5 L1730.3 241.7 L1730.3 239.7 L1725.7 237.9 L1728.9 230.4 L1733.4 232.3 L1734.7 231.0 L1732.8 226.5 L1740.3 223.3 L1742.1 227.9 L1744.1 227.9 L1745.9 223.3 L1753.4 226.5 L1751.5 231.0 L1752.8 232.3 L1757.3 230.4 L1760.5 237.9 L1755.9 239.7z" fill="url(#mb_bl)" stroke="#1e2340" stroke-width="1.900" stroke-linejoin="round"/><circle cx="1743.100" cy="240.700" r="8" fill="none" stroke="#9aa0c8" stroke-width="2.500" opacity=".7"/><circle cx="1743.100" cy="240.700" r="3.300" fill="#e9ebfa" stroke="#1e2340" stroke-width="1.600"/><path d="M1768.8 236.5 1775.3 243.0 1781.8 236.5" fill="none" stroke="#111" stroke-width="3.200" stroke-linejoin="miter"/><path d="M1858.3 236.5 1864.8 243.0 1871.3 236.5" fill="none" stroke="#111" stroke-width="3.200" stroke-linejoin="miter"/><path d="M1948.5 236.5 1955.0 243.0 1961.5 236.5" fill="none" stroke="#111" stroke-width="3.200" stroke-linejoin="miter"/><path d="M1821.500 244C1817 244 1813.500 239.500 1816.500 238.500 1819 238 1821 241 1822.500 243.500" fill="none" stroke="#1e2340" stroke-width="1.800"/><path d="M1846.500 232C1849 226 1852.500 223.500 1851.500 227 1850.500 232 1848 236.500 1846.500 238.500" fill="#b9bfe0" stroke="#1e2340" stroke-width="1.600"/><circle cx="1835" cy="241.500" r="14" fill="url(#mb_tp)" stroke="#1e2340" stroke-width="1.800"/><ellipse cx="1835" cy="256.500" rx="8" ry="1.500" fill="#222" opacity=".8"/><path d="M1825.500 232C1828 226.500 1841 226.500 1843.500 232" fill="#dfe2f4" stroke="#1e2340" stroke-width="1.500"/><rect x="1831" y="224" width="5" height="6" fill="#dfe2f4" stroke="#1e2340" stroke-width="1.300"/><path d="M1819.500 254 1850.500 225.500" stroke="#1e2340" stroke-width="5.200" stroke-linecap="round" stroke-dasharray="7.500 4.500"/><path d="M1819.500 254 1850.500 225.500" stroke="#b9bfe0" stroke-width="2.400" stroke-linecap="round" stroke-dasharray="7.500 4.500"/><path d="M1905.500 227.500 1916.500 221.500 1927 227.500V239L1916.500 245 1905.500 239z" fill="#d2d6ee" stroke="#1e2340" stroke-width="1.900" stroke-linejoin="round"/><path d="M1916.500 221.500V245" stroke="#f0f1fa" stroke-width="1.400"/><path d="M1905.500 227.500 1916.500 221.500V245L1905.500 239z" fill="#c2c7e6"/><path d="M1905.500 227.500 1916.500 221.500 1927 227.500V239L1916.500 245 1905.500 239z" fill="none" stroke="#1e2340" stroke-width="1.900" stroke-linejoin="round"/><rect x="1922" y="237.500" width="20.500" height="20.500" fill="#a9aed2" stroke="#111" stroke-width="1.900"/><path d="M1910 253.500 1938.500 226" stroke="#1e2340" stroke-width="5.200" stroke-linecap="round" stroke-dasharray="7 4.800"/><path d="M1910 253.500 1938.500 226" stroke="#c5cae8" stroke-width="2.400" stroke-linecap="round" stroke-dasharray="7 4.800"/><path d="M2003 246C1997.500 245 1993 238.500 1995.500 236.500 1998.500 235 2001 240 2003.500 244" fill="#c5cae8" stroke="#1e2340" stroke-width="1.700"/><path d="M2029 229C2032 222 2040 220 2040.500 226 2040.500 232 2035 238.500 2030.500 241.500 2033.500 236 2036.500 230 2035.500 227.500 2034 226.500 2031.500 230 2030 233z" fill="#c5cae8" stroke="#1e2340" stroke-width="1.700" stroke-linejoin="round"/><path d="M2003.500 236C2004 229.500 2010 225.500 2016.500 225.500S2029 229 2031 234.500C2033.500 243 2031 251 2028 255L2007 261.500C2003 254 2002 244 2003.500 236z" fill="url(#mb_tp)" stroke="#1e2340" stroke-width="1.800" stroke-linejoin="round"/><path d="M2004 236.500C2012 239 2024 236 2030.500 232.500" fill="none" stroke="#1e2340" stroke-width="1.300"/><path d="M2008 256C2012 250 2022 248 2028.500 250.500" fill="none" stroke="#e4e7f6" stroke-width="1.500" opacity=".8"/><rect x="2014.500" y="221.500" width="4.400" height="5.500" fill="#e4e7f6" stroke="#1e2340" stroke-width="1.300"/></svg>
<svg style="left:318px;top:444px" width="250" height="99" viewBox="318 444 250 99"><path d="M335.7 450.1H339.90000000000003V454.0H343.8V458.20000000000005H339.90000000000003V462.1H335.7V458.20000000000005H331.8V454.0H335.7z" fill="#fff" stroke="#333" stroke-width="1.700" stroke-linejoin="round"/><path d="M360.0 450.1H364.20000000000005V454.0H368.1V458.20000000000005H364.20000000000005V462.1H360.0V458.20000000000005H356.1V454.0H360.0z" fill="#fff" stroke="#333" stroke-width="1.700" stroke-linejoin="round"/><path d="M335.7 474H339.90000000000003V477.9H343.8V482.1H339.90000000000003V486H335.7V482.1H331.8V477.9H335.7z" fill="#fff" stroke="#333" stroke-width="1.700" stroke-linejoin="round"/><path d="M360.0 474H364.20000000000005V477.9H368.1V482.1H364.20000000000005V486H360.0V482.1H356.1V477.9H360.0z" fill="#fff" stroke="#333" stroke-width="1.700" stroke-linejoin="round"/><circle cx="350" cy="456.1" r="2" fill="#fff" stroke="#333" stroke-width="1.500"/><circle cx="337.8" cy="468.1" r="2" fill="#fff" stroke="#333" stroke-width="1.500"/><circle cx="362.1" cy="468.1" r="2" fill="#fff" stroke="#333" stroke-width="1.500"/><circle cx="350" cy="480" r="2" fill="#fff" stroke="#333" stroke-width="1.500"/><rect x="396.100" y="455.600" width="32.100" height="23.200" fill="#cfd0ff" stroke="#111" stroke-width="2.400"/><rect x="398.300" y="457.800" width="27.700" height="18.800" fill="none" stroke="#fff" stroke-width="1.400"/><rect x="393.3" y="452.8" width="5.6" height="5.6" rx="1" fill="#66b4f2" stroke="#111" stroke-width="1.900"/><rect x="425.4" y="452.8" width="5.6" height="5.6" rx="1" fill="#66b4f2" stroke="#111" stroke-width="1.900"/><rect x="393.3" y="476.0" width="5.6" height="5.6" rx="1" fill="#66b4f2" stroke="#111" stroke-width="1.900"/><rect x="425.4" y="476.0" width="5.6" height="5.6" rx="1" fill="#66b4f2" stroke="#111" stroke-width="1.900"/><rect x="409.59999999999997" y="464.8" width="4.6" height="4.6" rx="1" fill="#66b4f2" stroke="#111" stroke-width="1.900"/><path d="M462.500 464.500C471 465 478 471.500 478.800 480" fill="none" stroke="#222" stroke-width="4.400"/><path d="M462.500 464.500C471 465 478 471.500 478.800 480" fill="none" stroke="#fff" stroke-width="1.900"/><path d="M461.500 481.500 476.500 466" fill="none" stroke="#0e1b4d" stroke-width="5" stroke-linecap="round" stroke-linejoin="round"/><path d="M461.500 481.500 476.500 466" fill="none" stroke="#cfd0ff" stroke-width="2.4" stroke-linecap="round" stroke-linejoin="round"/><path d="M460 453.500V483.100H488.500" fill="none" stroke="#0e1b4d" stroke-width="5.2" stroke-linecap="round" stroke-linejoin="miter"/><path d="M460 453.500V483.100H488.500" fill="none" stroke="#cfd0ff" stroke-width="2.6" stroke-linecap="round" stroke-linejoin="miter"/><path d="M520 456.500 552.500 479.500M520 479.500 552.500 456.500" fill="none" stroke="#0e1b4d" stroke-width="4.8" stroke-linecap="round" stroke-linejoin="round"/><path d="M520 456.500 552.500 479.500M520 479.500 552.500 456.500" fill="none" stroke="#cfd0ff" stroke-width="2.2" stroke-linecap="round" stroke-linejoin="round"/><rect x="533.8000000000001" y="465.5" width="4.8" height="4.8" rx="1" fill="#66b4f2" stroke="#1d3d7c" stroke-width="1.900"/><rect x="330.500" y="513.500" width="9.300" height="9.300" rx="1" fill="#66b4f2" stroke="#111" stroke-width="2.200"/><rect x="342.5" y="516.300" width="5.400" height="3.600" rx="1.500" fill="#fff" stroke="#222" stroke-width="1.500"/><rect x="350.1" y="516.300" width="5.400" height="3.600" rx="1.500" fill="#fff" stroke="#222" stroke-width="1.500"/><rect x="357.7" y="516.300" width="5.400" height="3.600" rx="1.500" fill="#fff" stroke="#222" stroke-width="1.500"/><rect x="365.3" y="516.300" width="5.400" height="3.600" rx="1.500" fill="#fff" stroke="#222" stroke-width="1.500"/><path d="M402.500 504 417 512.500M400 508 405 500M414.500 516.500 419.500 508.500" stroke="#222" stroke-width="4.800" stroke-linecap="round"/><path d="M402.500 504 417 512.500M400 508 405 500M414.500 516.500 419.500 508.500" stroke="#fff" stroke-width="2.200" stroke-linecap="round"/><path d="M396.500 513 428 533.800" fill="none" stroke="#0e1b4d" stroke-width="4.8" stroke-linecap="round" stroke-linejoin="round"/><path d="M396.500 513 428 533.800" fill="none" stroke="#cfd0ff" stroke-width="2.2" stroke-linecap="round" stroke-linejoin="round"/><rect x="407.6" y="519.5" width="4.8" height="4.8" rx="1" fill="#66b4f2" stroke="#111" stroke-width="1.900"/><path d="M460.200 511.200 480.500 519.700 470.400 535.400 453.500 522.500z" fill="#cfd0ff" stroke="#111" stroke-width="2.200" stroke-linejoin="round"/><path d="M460.800 513.500 478 520.700 469.800 533 456 522.200z" fill="none" stroke="#fff" stroke-width="1.100"/><path d="M457 501.500 494.500 527" stroke="#111" stroke-width="4.600" stroke-linecap="round" stroke-dasharray="3.200 4.300"/><path d="M457 501.500 494.500 527" stroke="#fff" stroke-width="2" stroke-linecap="round" stroke-dasharray="3.200 4.300"/><circle cx="527.700" cy="523" r="11.300" fill="#cfd0ff" stroke="#111" stroke-width="2.200"/><path d="M520 504 555 528.200" stroke="#111" stroke-width="4.800" stroke-linecap="round"/><path d="M520 504 555 528.200" stroke="#fff" stroke-width="2.200" stroke-linecap="round"/><rect x="531.5" y="511.6" width="4.8" height="4.8" rx="1" fill="#66b4f2" stroke="#1d3d7c" stroke-width="1.900"/></svg>
<svg style="left:352px;top:612px" width="34" height="138" viewBox="352 612 34 138"><defs><linearGradient id="at_b" x1="0" x2="1"><stop offset="0" stop-color="#fff"/><stop offset="1" stop-color="#b9bbe0"/></linearGradient><linearGradient id="at_bl" x1="0" x2="1" y1="0" y2="1"><stop offset="0" stop-color="#7fb0ff"/><stop offset="1" stop-color="#1444c8"/></linearGradient><linearGradient id="at_p" x1="0" x2="1"><stop offset="0" stop-color="#dfe0ff"/><stop offset=".5" stop-color="#7a7cf0"/><stop offset="1" stop-color="#dfe0ff"/></linearGradient></defs><path d="M357 633.500C354 628 358 621.500 365 618.500L375 625 380 637C377 642 367 645 362.500 642z" fill="url(#at_b)" stroke="#111" stroke-width="1.800" stroke-linejoin="round"/><ellipse cx="371.500" cy="626.500" rx="9" ry="6.800" transform="rotate(35 371.500 626.500)" fill="#2a5ad8" stroke="#111" stroke-width="1.500"/><path d="M372 624C379 624 382.500 630 381.500 640L376.500 643.500C377.500 636 376 631 371 629z" fill="url(#at_bl)" stroke="#1a3a9a" stroke-width="1"/><path d="M359.500 621C361 617 365.500 616 366.500 618.500L364 623 367.500 628.500" fill="none" stroke="#111" stroke-width="4"/><path d="M359.500 621C361 617 365.500 616 366.500 618.500L364 623 367.500 628.500" fill="none" stroke="#a9acf0" stroke-width="2"/><path d="M356.500 740 362.500 720.500 368.500 722.500 363 742z" fill="url(#at_p)" stroke="#1b1b6a" stroke-width="1.200" stroke-linejoin="round"/><path d="M362.500 720.500C363.500 717.500 369.500 719 368.500 722.500z" fill="#e23a3a" stroke="#8a1a1a" stroke-width="1"/><path d="M361.700 723.500 367.700 725.300" stroke="#ddd" stroke-width="2"/><path d="M356.500 740 363 742 357.500 745z" fill="#f1e2b8" stroke="#555" stroke-width=".8"/><path d="M357 743.800H380.500" fill="none" stroke="#0e1b4d" stroke-width="4.4" stroke-linecap="round" stroke-linejoin="round"/><path d="M357 743.800H380.500" fill="none" stroke="#e6e6e6" stroke-width="1.8" stroke-linecap="round" stroke-linejoin="round"/></svg>
<svg style="left:2130px;top:766px" width="140" height="40" viewBox="2130 766 140 40"><path d="M2142.100 788 2154 781.900 2166.300 775.900M2154 781.900 2166.300 788M2142.100 788 2154 793.900" fill="none" stroke="#0e1b4d" stroke-width="4.6" stroke-linecap="round" stroke-linejoin="round"/><path d="M2142.100 788 2154 781.900 2166.300 775.900M2154 781.900 2166.300 788M2142.100 788 2154 793.900" fill="none" stroke="#bcd6fb" stroke-width="1.8" stroke-linecap="round" stroke-linejoin="round"/><rect x="2139.6" y="785.5" width="5" height="5" rx="1.200" fill="#fff" stroke="#0e1b4d" stroke-width="1.800"/><rect x="2151.5" y="779.4" width="5" height="5" rx="1.200" fill="#fff" stroke="#0e1b4d" stroke-width="1.800"/><rect x="2163.8" y="773.4" width="5" height="5" rx="1.200" fill="#fff" stroke="#0e1b4d" stroke-width="1.800"/><rect x="2163.8" y="785.5" width="5" height="5" rx="1.200" fill="#fff" stroke="#0e1b4d" stroke-width="1.800"/><rect x="2151.5" y="791.4" width="5" height="5" rx="1.200" fill="#fff" stroke="#0e1b4d" stroke-width="1.800"/><path d="M2186.8 792.1 2200 786.3000000000001 2213.2 792.1 2200 797.9z" fill="#d3d4fb" stroke="#111" stroke-width="1.600" stroke-linejoin="round"/><path d="M2186.8 785.8 2200 780.0 2213.2 785.8 2200 791.5999999999999z" fill="#dcdcfd" stroke="#111" stroke-width="1.600" stroke-linejoin="round"/><path d="M2186.8 779.4 2200 773.6 2213.2 779.4 2200 785.1999999999999z" fill="#e9e9ff" stroke="#111" stroke-width="1.600" stroke-linejoin="round"/><path d="M2231.400 773.400H2260.600V791.500L2253.500 798.500H2231.400z" fill="#f4f4f4" stroke="#1a1a1a" stroke-width="2.500" stroke-linejoin="miter"/><path d="M2235.800 777.800H2256.200V790H2251V794.200H2235.800z" fill="#f7f7f7" stroke="#7a7a7a" stroke-width="1.800"/><path d="M2251.500 798 2252 791 2260 790.500z" fill="#fff" stroke="#1a1a1a" stroke-width="1.300" stroke-linejoin="round"/></svg>
</body></html>
